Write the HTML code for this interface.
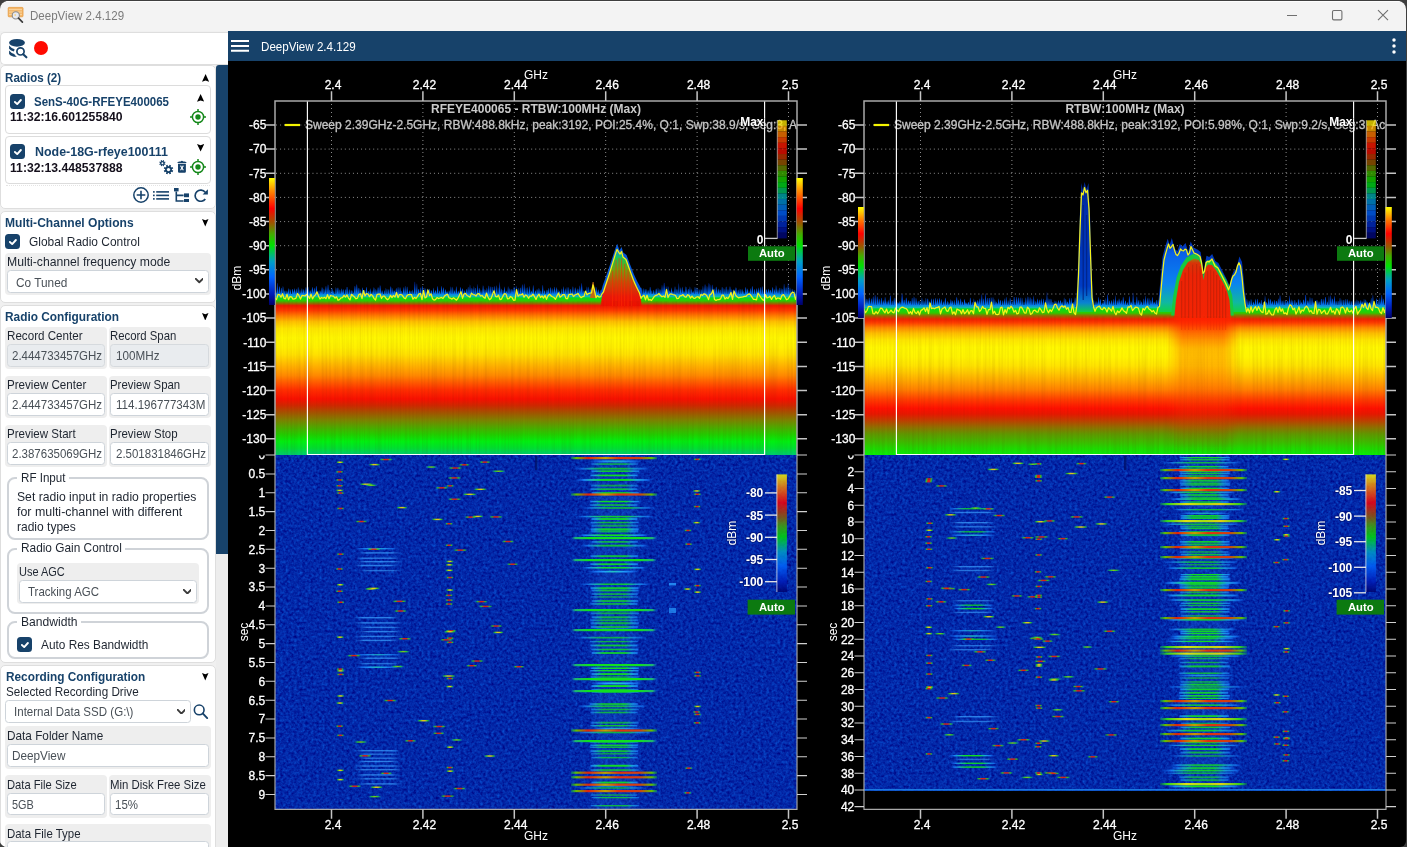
<!DOCTYPE html>
<html lang="en"><head><meta charset="utf-8"><title>DeepView 2.4.129</title>
<style>
html,body{margin:0;padding:0}
body{width:1407px;height:847px;overflow:hidden;background:#3e3e3e;font-family:"Liberation Sans",sans-serif;position:relative}
#win{position:absolute;left:0;top:1px;width:1406px;height:846px;background:#000;border-radius:8px 8px 6px 7px;overflow:hidden}
#shift{position:absolute;left:0;top:-1px;width:1407px;height:847px}
.ab{position:absolute;display:block}
.t{position:absolute;white-space:nowrap;line-height:1;display:inline-block;transform-origin:0 0}
.card,.sub,.grp,.inp,.fs,.cb{position:absolute;box-sizing:border-box}
.card{background:#fff;border:1px solid #dedede;border-radius:5px}
.sub{background:#fff;border:1px solid #dcdcdc;border-radius:4px}
.grp{background:#eeeeee;border-radius:4px}
.inp{background:#fff;border:1px solid #ced4da;border-radius:3.5px}
.inp.dis{background:#e9ecef;border-color:#d6dade}
.fs{border:2px solid #cfd3d8;border-radius:8px}
.cb{background:#17426a;border-radius:3.5px}
</style></head>
<body>
<div id="win"><div id="shift">
<svg class="ab" style="left:0;top:0;opacity:.999" width="1407" height="847" viewBox="0 0 1407 847"><defs><filter id="wfn" x="0" y="0" width="100%" height="100%" color-interpolation-filters="sRGB"><feTurbulence type="fractalNoise" baseFrequency="0.36 0.36" numOctaves="2" seed="7" result="n"/><feColorMatrix in="n" type="matrix" values="0.06 0 0 0 -0.02  0.34 0.15 0 0 -0.088  0.34 0.16 0 0 0.41  0 0 0 0 1"/></filter><filter id="streak" x="0" y="0" width="100%" height="100%" color-interpolation-filters="sRGB"><feTurbulence type="fractalNoise" baseFrequency="0.55 0.012" numOctaves="1" seed="11" result="n"/><feColorMatrix in="n" type="matrix" values="0 0 0 0 0.35  0 0 0 0 0.1  0 0 0 0 0  1.6 0 0 0 -0.62"/></filter><linearGradient id="bA" x1="0" y1="0" x2="1" y2="0"><stop offset="0" stop-color="#0a6cff" stop-opacity="0"/><stop offset="0.12" stop-color="#1a8cff" stop-opacity="0.9"/><stop offset="0.24" stop-color="#18c8a0" stop-opacity="1"/><stop offset="0.36" stop-color="#10e020" stop-opacity="1"/><stop offset="0.66" stop-color="#10e020" stop-opacity="1"/><stop offset="0.8" stop-color="#18a8e0" stop-opacity="1"/><stop offset="0.92" stop-color="#1a80ff" stop-opacity="0.8"/><stop offset="1" stop-color="#0a6cff" stop-opacity="0"/></linearGradient><linearGradient id="bK" x1="0" y1="0" x2="1" y2="0"><stop offset="0" stop-color="#0a6cff" stop-opacity="0"/><stop offset="0.03" stop-color="#1a84ff" stop-opacity="0.9"/><stop offset="0.12" stop-color="#18b0c8" stop-opacity="1"/><stop offset="0.26" stop-color="#10e020" stop-opacity="1"/><stop offset="0.72" stop-color="#10e020" stop-opacity="1"/><stop offset="0.86" stop-color="#18a8e0" stop-opacity="1"/><stop offset="0.97" stop-color="#1a84ff" stop-opacity="0.9"/><stop offset="1" stop-color="#0a6cff" stop-opacity="0"/></linearGradient><linearGradient id="bG" x1="0" y1="0" x2="1" y2="0"><stop offset="0" stop-color="#10a0c0" stop-opacity="0"/><stop offset="0.05" stop-color="#20c070" stop-opacity="0.9"/><stop offset="0.2" stop-color="#10e020" stop-opacity="1"/><stop offset="0.8" stop-color="#10e020" stop-opacity="1"/><stop offset="0.95" stop-color="#20c070" stop-opacity="0.9"/><stop offset="1" stop-color="#10a0c0" stop-opacity="0"/></linearGradient><linearGradient id="bB" x1="0" y1="0" x2="1" y2="0"><stop offset="0" stop-color="#0a6cff" stop-opacity="0"/><stop offset="0.15" stop-color="#1a80ff" stop-opacity="0.8"/><stop offset="0.3" stop-color="#20a0ff" stop-opacity="1"/><stop offset="0.5" stop-color="#20c8c0" stop-opacity="1"/><stop offset="0.7" stop-color="#20a0ff" stop-opacity="1"/><stop offset="0.88" stop-color="#1a80ff" stop-opacity="0.7"/><stop offset="1" stop-color="#0a6cff" stop-opacity="0"/></linearGradient><linearGradient id="bC" x1="0" y1="0" x2="1" y2="0"><stop offset="0" stop-color="#10c040" stop-opacity="0.4"/><stop offset="0.06" stop-color="#60c000" stop-opacity="1"/><stop offset="0.2" stop-color="#e02010" stop-opacity="1"/><stop offset="0.4" stop-color="#c0a000" stop-opacity="1"/><stop offset="0.55" stop-color="#e03010" stop-opacity="1"/><stop offset="0.8" stop-color="#d04010" stop-opacity="1"/><stop offset="0.94" stop-color="#60c000" stop-opacity="1"/><stop offset="1" stop-color="#10c040" stop-opacity="0.4"/></linearGradient><linearGradient id="bD" x1="0" y1="0" x2="1" y2="0"><stop offset="0" stop-color="#10c040" stop-opacity="0.3"/><stop offset="0.08" stop-color="#30d020" stop-opacity="1"/><stop offset="0.3" stop-color="#e0e010" stop-opacity="1"/><stop offset="0.5" stop-color="#a0e010" stop-opacity="1"/><stop offset="0.7" stop-color="#e0d010" stop-opacity="1"/><stop offset="0.92" stop-color="#30d020" stop-opacity="1"/><stop offset="1" stop-color="#10c040" stop-opacity="0.3"/></linearGradient><linearGradient id="bE" x1="0" y1="0" x2="1" y2="0"><stop offset="0" stop-color="#2a90ff" stop-opacity="0"/><stop offset="0.2" stop-color="#3aa0ff" stop-opacity="0.75"/><stop offset="0.8" stop-color="#3aa0ff" stop-opacity="0.75"/><stop offset="1" stop-color="#2a90ff" stop-opacity="0"/></linearGradient><linearGradient id="dR" x1="0" y1="0" x2="1" y2="0"><stop offset="0" stop-color="#10c060" stop-opacity="0.2"/><stop offset="0.18" stop-color="#30d020" stop-opacity="1"/><stop offset="0.38" stop-color="#e82010" stop-opacity="1"/><stop offset="0.62" stop-color="#e82010" stop-opacity="1"/><stop offset="0.82" stop-color="#30d020" stop-opacity="1"/><stop offset="1" stop-color="#10c060" stop-opacity="0.2"/></linearGradient><linearGradient id="dG" x1="0" y1="0" x2="1" y2="0"><stop offset="0" stop-color="#10a0c0" stop-opacity="0.2"/><stop offset="0.25" stop-color="#20d030" stop-opacity="1"/><stop offset="0.5" stop-color="#90d010" stop-opacity="1"/><stop offset="0.75" stop-color="#20d030" stop-opacity="1"/><stop offset="1" stop-color="#10a0c0" stop-opacity="0.2"/></linearGradient><linearGradient id="dY" x1="0" y1="0" x2="1" y2="0"><stop offset="0" stop-color="#10c060" stop-opacity="0.2"/><stop offset="0.18" stop-color="#30d020" stop-opacity="1"/><stop offset="0.4" stop-color="#f0d010" stop-opacity="1"/><stop offset="0.6" stop-color="#f0d010" stop-opacity="1"/><stop offset="0.82" stop-color="#30d020" stop-opacity="1"/><stop offset="1" stop-color="#10c060" stop-opacity="0.2"/></linearGradient></defs><g font-family="Liberation Sans, Arial, sans-serif">
<defs>
<linearGradient id="sgL" gradientUnits="userSpaceOnUse" x1="0" y1="294" x2="0" y2="455"><stop offset="0.0000" stop-color="#0a80e8"/><stop offset="0.0155" stop-color="#10b8b0"/><stop offset="0.0248" stop-color="#08dc18"/><stop offset="0.0435" stop-color="#30c800"/><stop offset="0.0578" stop-color="#8a7400"/><stop offset="0.0727" stop-color="#f01800"/><stop offset="0.1019" stop-color="#ff3800"/><stop offset="0.1366" stop-color="#ff8000"/><stop offset="0.1720" stop-color="#ffc000"/><stop offset="0.2137" stop-color="#ffe800"/><stop offset="0.2720" stop-color="#fff800"/><stop offset="0.3311" stop-color="#fff000"/><stop offset="0.3776" stop-color="#ffe000"/><stop offset="0.4248" stop-color="#ffc000"/><stop offset="0.4720" stop-color="#ffa000"/><stop offset="0.5068" stop-color="#ff8800"/><stop offset="0.5342" stop-color="#ff6a00"/><stop offset="0.5932" stop-color="#ff3000"/><stop offset="0.6522" stop-color="#f81000"/><stop offset="0.6925" stop-color="#d02800"/><stop offset="0.7329" stop-color="#a85000"/><stop offset="0.7807" stop-color="#808000"/><stop offset="0.8261" stop-color="#50a800"/><stop offset="0.8745" stop-color="#20d000"/><stop offset="0.9155" stop-color="#00f010"/><stop offset="0.9565" stop-color="#00e030"/><stop offset="1.0000" stop-color="#00cc70"/></linearGradient>
<linearGradient id="frL" gradientUnits="userSpaceOnUse" x1="0" y1="279.5" x2="0" y2="295.5"><stop offset="0" stop-color="#000c58"/><stop offset="0.35" stop-color="#0030b0"/><stop offset="0.68" stop-color="#0058e0"/><stop offset="1" stop-color="#0a80e8"/></linearGradient>
<linearGradient id="cbL" gradientUnits="userSpaceOnUse" x1="0" y1="178" x2="0" y2="305"><stop offset="0.000" stop-color="#ffff00" stop-opacity="1.0"/><stop offset="0.100" stop-color="#ff8c00" stop-opacity="1.0"/><stop offset="0.240" stop-color="#ff0000" stop-opacity="1.0"/><stop offset="0.360" stop-color="#965a00" stop-opacity="1.0"/><stop offset="0.440" stop-color="#46aa00" stop-opacity="1.0"/><stop offset="0.530" stop-color="#00e100" stop-opacity="1.0"/><stop offset="0.660" stop-color="#00a0c8" stop-opacity="1.0"/><stop offset="0.780" stop-color="#0064ff" stop-opacity="1.0"/><stop offset="0.910" stop-color="#001cb9" stop-opacity="1.0"/><stop offset="1.000" stop-color="#000069" stop-opacity="1.0"/></linearGradient>
<linearGradient id="ibL" gradientUnits="userSpaceOnUse" x1="0" y1="120.3" x2="0" y2="238.4"><stop offset="0.000" stop-color="#ffff00" stop-opacity="0.8"/><stop offset="0.100" stop-color="#ff8c00" stop-opacity="0.8"/><stop offset="0.240" stop-color="#ff0000" stop-opacity="0.8"/><stop offset="0.360" stop-color="#965a00" stop-opacity="0.8"/><stop offset="0.440" stop-color="#46aa00" stop-opacity="0.8"/><stop offset="0.530" stop-color="#00e100" stop-opacity="0.8"/><stop offset="0.660" stop-color="#00a0c8" stop-opacity="0.8"/><stop offset="0.780" stop-color="#0064ff" stop-opacity="0.8"/><stop offset="0.910" stop-color="#001cb9" stop-opacity="0.8"/><stop offset="1.000" stop-color="#000069" stop-opacity="0.8"/></linearGradient>
<linearGradient id="wbL" gradientUnits="userSpaceOnUse" x1="0" y1="474.4" x2="0" y2="592"><stop offset="0.000" stop-color="#ffff00" stop-opacity="0.82"/><stop offset="0.100" stop-color="#ff8c00" stop-opacity="0.82"/><stop offset="0.240" stop-color="#ff0000" stop-opacity="0.82"/><stop offset="0.360" stop-color="#965a00" stop-opacity="0.82"/><stop offset="0.440" stop-color="#46aa00" stop-opacity="0.82"/><stop offset="0.530" stop-color="#00e100" stop-opacity="0.82"/><stop offset="0.660" stop-color="#00a0c8" stop-opacity="0.82"/><stop offset="0.780" stop-color="#0064ff" stop-opacity="0.82"/><stop offset="0.910" stop-color="#001cb9" stop-opacity="0.82"/><stop offset="1.000" stop-color="#000069" stop-opacity="0.82"/></linearGradient>
<clipPath id="csL"><rect x="275" y="101" width="522" height="354"/></clipPath>
<clipPath id="cwL"><rect x="275" y="455" width="522" height="354.29999999999995"/></clipPath>
<clipPath id="czL"><rect x="235" y="455.6" width="40" height="30"/></clipPath>
</defs>
<rect x="275" y="455" width="522" height="354.3" fill="#0a34b0"/>
<rect x="275" y="455" width="522" height="354.3" filter="url(#wfn)"/>
<g clip-path="url(#cwL)">
<rect x="588" y="455" width="53" height="354.3" fill="url(#bE)" opacity=".16"/><rect x="581.2" y="457.0" width="74.5" height="1.9" fill="url(#bA)" opacity="0.98"/><rect x="590.3" y="460.4" width="50.5" height="2.0" fill="url(#bB)" opacity="0.82"/><rect x="590.6" y="463.4" width="48.0" height="1.3" fill="url(#bK)" opacity="0.84"/><rect x="573.4" y="467.7" width="76.4" height="1.9" fill="url(#bA)" opacity="0.75"/><rect x="590.6" y="470.4" width="49.4" height="1.5" fill="url(#bK)" opacity="0.95"/><rect x="589.6" y="474.6" width="48.8" height="1.7" fill="url(#bK)" opacity="0.99"/><rect x="575.0" y="478.9" width="77.4" height="2.0" fill="url(#bA)" opacity="0.99"/><rect x="590.3" y="484.7" width="48.3" height="1.8" fill="url(#bK)" opacity="0.62"/><rect x="589.6" y="488.3" width="48.5" height="1.7" fill="url(#bK)" opacity="0.74"/><rect x="591.0" y="492.1" width="48.6" height="2.0" fill="url(#bK)" opacity="0.90"/><rect x="589.5" y="500.8" width="50.4" height="1.5" fill="url(#bK)" opacity="0.98"/><rect x="589.4" y="504.2" width="48.8" height="1.7" fill="url(#bK)" opacity="0.75"/><rect x="581.5" y="507.3" width="73.6" height="1.3" fill="url(#bA)" opacity="0.96"/><rect x="575.2" y="515.8" width="79.1" height="1.5" fill="url(#bA)" opacity="0.86"/><rect x="590.7" y="517.9" width="47.4" height="2.1" fill="url(#bK)" opacity="0.88"/><rect x="589.8" y="521.8" width="49.8" height="1.5" fill="url(#bK)" opacity="0.77"/><rect x="590.9" y="524.7" width="48.1" height="2.0" fill="url(#bK)" opacity="0.64"/><rect x="589.7" y="528.3" width="49.8" height="2.1" fill="url(#bK)" opacity="0.90"/><rect x="590.4" y="530.4" width="48.5" height="2.0" fill="url(#bK)" opacity="0.68"/><rect x="576.9" y="534.4" width="71.8" height="1.7" fill="url(#bA)" opacity="0.99"/><rect x="590.2" y="537.3" width="49.7" height="1.4" fill="url(#bK)" opacity="0.77"/><rect x="590.8" y="541.1" width="47.7" height="1.6" fill="url(#bK)" opacity="0.81"/><rect x="579.7" y="544.7" width="69.3" height="1.9" fill="url(#bA)" opacity="0.81"/><rect x="589.6" y="555.2" width="49.0" height="1.9" fill="url(#bK)" opacity="0.80"/><rect x="589.9" y="559.5" width="48.6" height="1.3" fill="url(#bK)" opacity="0.84"/><rect x="589.4" y="563.3" width="49.3" height="1.8" fill="url(#bK)" opacity="0.93"/><rect x="580.4" y="567.0" width="66.9" height="1.6" fill="url(#bA)" opacity="0.95"/><rect x="587.8" y="570.8" width="51.2" height="1.7" fill="url(#bB)" opacity="0.98"/><rect x="579.8" y="583.5" width="70.4" height="1.4" fill="url(#bA)" opacity="0.92"/><rect x="589.7" y="587.2" width="49.7" height="1.9" fill="url(#bK)" opacity="0.86"/><rect x="590.6" y="589.6" width="48.8" height="1.8" fill="url(#bK)" opacity="0.79"/><rect x="590.9" y="593.3" width="47.4" height="1.5" fill="url(#bK)" opacity="0.80"/><rect x="590.1" y="596.3" width="48.7" height="1.3" fill="url(#bK)" opacity="0.69"/><rect x="591.0" y="600.0" width="47.8" height="2.0" fill="url(#bK)" opacity="0.71"/><rect x="590.3" y="602.9" width="47.8" height="2.0" fill="url(#bK)" opacity="0.66"/><rect x="590.2" y="609.2" width="49.5" height="2.0" fill="url(#bK)" opacity="0.98"/><rect x="589.9" y="612.4" width="50.0" height="1.8" fill="url(#bK)" opacity="0.67"/><rect x="591.0" y="616.3" width="47.2" height="2.0" fill="url(#bK)" opacity="0.75"/><rect x="589.2" y="619.4" width="49.5" height="1.8" fill="url(#bK)" opacity="0.67"/><rect x="590.2" y="622.2" width="49.7" height="2.1" fill="url(#bK)" opacity="0.73"/><rect x="590.0" y="625.9" width="48.8" height="2.1" fill="url(#bK)" opacity="0.72"/><rect x="588.1" y="628.5" width="50.6" height="1.5" fill="url(#bB)" opacity="0.75"/><rect x="574.7" y="636.8" width="71.9" height="1.7" fill="url(#bA)" opacity="0.70"/><rect x="589.0" y="640.9" width="49.6" height="1.4" fill="url(#bK)" opacity="0.72"/><rect x="589.5" y="644.6" width="48.7" height="1.8" fill="url(#bK)" opacity="0.87"/><rect x="590.4" y="648.7" width="48.7" height="1.6" fill="url(#bK)" opacity="0.82"/><rect x="590.9" y="652.1" width="47.6" height="1.8" fill="url(#bK)" opacity="0.90"/><rect x="589.8" y="664.0" width="49.6" height="1.6" fill="url(#bK)" opacity="0.92"/><rect x="590.2" y="667.4" width="49.5" height="1.6" fill="url(#bK)" opacity="0.97"/><rect x="589.3" y="670.0" width="50.1" height="1.4" fill="url(#bK)" opacity="0.94"/><rect x="590.7" y="673.1" width="48.2" height="2.0" fill="url(#bK)" opacity="0.92"/><rect x="589.8" y="676.4" width="49.8" height="1.4" fill="url(#bK)" opacity="0.75"/><rect x="589.7" y="678.8" width="48.4" height="1.9" fill="url(#bK)" opacity="0.93"/><rect x="590.7" y="682.4" width="52.3" height="1.9" fill="url(#bB)" opacity="1.00"/><rect x="590.7" y="685.1" width="47.9" height="1.9" fill="url(#bK)" opacity="0.98"/><rect x="590.7" y="689.1" width="48.6" height="1.6" fill="url(#bK)" opacity="0.85"/><rect x="590.9" y="691.4" width="48.3" height="1.4" fill="url(#bK)" opacity="0.76"/><rect x="589.1" y="703.2" width="49.6" height="1.7" fill="url(#bK)" opacity="0.85"/><rect x="577.1" y="705.4" width="69.8" height="1.8" fill="url(#bA)" opacity="0.75"/><rect x="590.5" y="708.6" width="49.0" height="1.7" fill="url(#bK)" opacity="0.72"/><rect x="589.5" y="711.7" width="48.8" height="1.6" fill="url(#bK)" opacity="0.71"/><rect x="590.5" y="721.8" width="49.2" height="1.8" fill="url(#bK)" opacity="0.67"/><rect x="589.5" y="725.1" width="48.6" height="1.3" fill="url(#bK)" opacity="0.92"/><rect x="590.3" y="727.8" width="53.5" height="1.5" fill="url(#bB)" opacity="0.84"/><rect x="575.5" y="731.5" width="78.1" height="1.8" fill="url(#bA)" opacity="0.74"/><rect x="589.4" y="740.8" width="49.5" height="1.8" fill="url(#bK)" opacity="0.94"/><rect x="589.5" y="744.5" width="49.3" height="1.8" fill="url(#bK)" opacity="0.85"/><rect x="589.2" y="746.7" width="49.7" height="1.3" fill="url(#bK)" opacity="0.70"/><rect x="589.8" y="750.2" width="49.1" height="2.0" fill="url(#bK)" opacity="0.80"/><rect x="590.3" y="753.1" width="48.5" height="1.4" fill="url(#bK)" opacity="0.68"/><rect x="590.7" y="756.9" width="47.9" height="1.5" fill="url(#bK)" opacity="0.72"/><rect x="589.7" y="764.8" width="49.3" height="1.9" fill="url(#bK)" opacity="0.98"/><rect x="589.7" y="769.3" width="49.8" height="1.5" fill="url(#bK)" opacity="0.87"/><rect x="590.8" y="772.4" width="48.0" height="1.5" fill="url(#bK)" opacity="0.63"/><rect x="590.7" y="781.6" width="47.8" height="1.9" fill="url(#bK)" opacity="0.90"/><rect x="585.1" y="785.0" width="52.9" height="1.6" fill="url(#bB)" opacity="0.82"/><rect x="577.5" y="787.3" width="68.6" height="1.3" fill="url(#bA)" opacity="0.82"/><rect x="589.2" y="790.4" width="49.8" height="1.4" fill="url(#bK)" opacity="0.66"/><rect x="590.2" y="794.4" width="47.9" height="1.3" fill="url(#bK)" opacity="0.71"/><rect x="590.9" y="797.0" width="49.0" height="1.3" fill="url(#bK)" opacity="0.74"/><rect x="589.9" y="805.0" width="49.9" height="1.4" fill="url(#bK)" opacity="0.74"/><rect x="571.0" y="457.0" width="86.0" height="2.2" fill="url(#bC)"/><rect x="571.0" y="493.4" width="86.0" height="2.2" fill="url(#bC)"/><rect x="571.0" y="729.4" width="86.0" height="2.2" fill="url(#bC)"/><rect x="571.0" y="771.6" width="86.0" height="2.2" fill="url(#bC)"/><rect x="571.0" y="776.2" width="86.0" height="2.2" fill="url(#bC)"/><rect x="571.0" y="783.6" width="86.0" height="2.2" fill="url(#bC)"/><rect x="571.0" y="790.0" width="86.0" height="2.2" fill="url(#bC)"/><rect x="571.0" y="537.0" width="86.0" height="2.2" fill="url(#bG)"/><rect x="571.0" y="559.0" width="86.0" height="2.2" fill="url(#bG)"/><rect x="571.0" y="609.0" width="86.0" height="2.2" fill="url(#bG)"/><rect x="571.0" y="629.0" width="86.0" height="2.2" fill="url(#bG)"/><rect x="571.0" y="664.0" width="86.0" height="2.2" fill="url(#bG)"/><rect x="571.0" y="678.0" width="86.0" height="2.2" fill="url(#bG)"/><rect x="571.0" y="690.0" width="86.0" height="2.2" fill="url(#bG)"/><rect x="571.0" y="740.0" width="86.0" height="2.2" fill="url(#bG)"/><rect x="354.3" y="548.0" width="43.8" height="1.4" fill="url(#bB)" opacity="0.84"/><rect x="357.6" y="552.2" width="43.5" height="1.4" fill="url(#bE)" opacity="0.93"/><rect x="354.8" y="557.5" width="45.8" height="1.4" fill="url(#bE)" opacity="0.89"/><rect x="355.9" y="561.0" width="46.8" height="1.4" fill="url(#bE)" opacity="0.95"/><rect x="353.8" y="564.9" width="44.7" height="1.4" fill="url(#bE)" opacity="0.92"/><rect x="358.8" y="569.9" width="43.2" height="1.4" fill="url(#bE)" opacity="0.77"/><rect x="353.3" y="617.0" width="45.9" height="1.4" fill="url(#bE)" opacity="0.97"/><rect x="353.4" y="622.2" width="49.2" height="1.4" fill="url(#bE)" opacity="0.94"/><rect x="358.4" y="626.7" width="43.5" height="1.4" fill="url(#bE)" opacity="0.89"/><rect x="357.9" y="630.9" width="44.0" height="1.4" fill="url(#bE)" opacity="0.93"/><rect x="354.6" y="635.7" width="48.3" height="1.4" fill="url(#bE)" opacity="0.89"/><rect x="354.8" y="639.7" width="44.0" height="1.4" fill="url(#bE)" opacity="0.92"/><rect x="353.4" y="654.0" width="49.2" height="1.4" fill="url(#bB)" opacity="0.76"/><rect x="358.8" y="657.5" width="44.1" height="1.4" fill="url(#bE)" opacity="0.96"/><rect x="356.7" y="662.9" width="42.7" height="1.4" fill="url(#bE)" opacity="0.78"/><rect x="355.1" y="666.5" width="43.8" height="1.4" fill="url(#bB)" opacity="0.96"/><rect x="353.6" y="750.0" width="47.6" height="1.4" fill="url(#bE)" opacity="0.91"/><rect x="357.6" y="753.5" width="43.0" height="1.4" fill="url(#bE)" opacity="0.78"/><rect x="358.5" y="757.5" width="42.3" height="1.4" fill="url(#bE)" opacity="0.79"/><rect x="357.0" y="760.8" width="42.0" height="1.4" fill="url(#bE)" opacity="0.99"/><rect x="353.6" y="765.3" width="49.3" height="1.4" fill="url(#bE)" opacity="0.92"/><rect x="353.0" y="769.0" width="50.4" height="1.4" fill="url(#bE)" opacity="0.87"/><rect x="355.4" y="774.2" width="43.9" height="1.4" fill="url(#bE)" opacity="0.96"/><rect x="356.1" y="778.1" width="46.5" height="1.4" fill="url(#bE)" opacity="0.84"/><rect x="357.9" y="783.2" width="44.1" height="1.4" fill="url(#bE)" opacity="0.90"/><rect x="336.8" y="507.7" width="7.4" height="1.5" fill="url(#dR)" opacity=".92"/><rect x="335.9" y="590.5" width="7.4" height="1.5" fill="url(#dR)" opacity=".92"/><rect x="336.7" y="492.3" width="7.4" height="1.5" fill="url(#dR)" opacity=".92"/><rect x="336.7" y="734.6" width="7.4" height="1.5" fill="url(#dR)" opacity=".92"/><rect x="336.8" y="695.2" width="7.4" height="1.5" fill="url(#dY)" opacity=".92"/><rect x="336.0" y="489.6" width="7.4" height="1.5" fill="url(#dY)" opacity=".92"/><rect x="336.4" y="461.5" width="7.4" height="1.5" fill="url(#dY)" opacity=".92"/><rect x="336.8" y="673.7" width="7.4" height="1.5" fill="url(#dR)" opacity=".92"/><rect x="335.8" y="568.2" width="7.4" height="1.5" fill="url(#dR)" opacity=".92"/><rect x="336.4" y="636.4" width="7.4" height="1.5" fill="url(#dY)" opacity=".92"/><rect x="336.3" y="702.3" width="7.4" height="1.5" fill="url(#dY)" opacity=".92"/><rect x="336.6" y="778.9" width="7.4" height="1.5" fill="url(#dY)" opacity=".92"/><rect x="336.0" y="479.2" width="7.4" height="1.5" fill="url(#dR)" opacity=".92"/><rect x="336.5" y="584.0" width="7.4" height="1.5" fill="url(#dY)" opacity=".92"/><rect x="336.0" y="725.4" width="7.4" height="1.5" fill="url(#dR)" opacity=".92"/><rect x="335.9" y="485.0" width="7.4" height="1.5" fill="url(#dR)" opacity=".92"/><rect x="336.8" y="670.1" width="7.4" height="1.5" fill="url(#dY)" opacity=".92"/><rect x="337.0" y="601.5" width="7.4" height="1.5" fill="url(#dR)" opacity=".92"/><rect x="336.7" y="553.4" width="7.4" height="1.5" fill="url(#dR)" opacity=".92"/><rect x="335.9" y="471.1" width="7.4" height="1.5" fill="url(#dR)" opacity=".92"/><rect x="336.6" y="769.6" width="7.4" height="1.5" fill="url(#dY)" opacity=".92"/><rect x="336.5" y="668.4" width="7.4" height="1.5" fill="url(#dR)" opacity=".92"/><rect x="446.4" y="637.4" width="7.4" height="1.5" fill="url(#dR)" opacity=".92"/><rect x="446.2" y="576.8" width="7.4" height="1.5" fill="url(#dR)" opacity=".92"/><rect x="445.3" y="594.6" width="7.4" height="1.5" fill="url(#dR)" opacity=".92"/><rect x="446.2" y="589.3" width="7.4" height="1.5" fill="url(#dY)" opacity=".92"/><rect x="446.4" y="770.4" width="7.4" height="1.5" fill="url(#dY)" opacity=".92"/><rect x="445.7" y="569.6" width="7.4" height="1.5" fill="url(#dY)" opacity=".92"/><rect x="446.1" y="766.8" width="7.4" height="1.5" fill="url(#dR)" opacity=".92"/><rect x="445.4" y="544.5" width="7.4" height="1.5" fill="url(#dR)" opacity=".92"/><rect x="445.6" y="564.1" width="7.4" height="1.5" fill="url(#dY)" opacity=".92"/><rect x="446.4" y="485.1" width="7.4" height="1.5" fill="url(#dR)" opacity=".92"/><rect x="446.2" y="677.8" width="7.4" height="1.5" fill="url(#dR)" opacity=".92"/><rect x="446.0" y="685.8" width="7.4" height="1.5" fill="url(#dY)" opacity=".92"/><rect x="446.4" y="746.4" width="7.4" height="1.5" fill="url(#dY)" opacity=".92"/><rect x="445.6" y="599.4" width="7.4" height="1.5" fill="url(#dR)" opacity=".92"/><rect x="446.4" y="641.6" width="7.4" height="1.5" fill="url(#dR)" opacity=".92"/><rect x="445.4" y="603.3" width="7.4" height="1.5" fill="url(#dR)" opacity=".92"/><rect x="445.3" y="523.0" width="7.4" height="1.5" fill="url(#dR)" opacity=".92"/><rect x="446.0" y="560.7" width="7.4" height="1.5" fill="url(#dY)" opacity=".92"/><rect x="693.0" y="521.9" width="7.4" height="1.5" fill="url(#dY)" opacity=".92"/><rect x="693.7" y="493.5" width="7.4" height="1.5" fill="url(#dR)" opacity=".92"/><rect x="692.9" y="711.2" width="7.4" height="1.5" fill="url(#dR)" opacity=".92"/><rect x="693.4" y="505.8" width="7.4" height="1.5" fill="url(#dR)" opacity=".92"/><rect x="693.8" y="568.6" width="7.4" height="1.5" fill="url(#dY)" opacity=".92"/><rect x="693.9" y="591.4" width="7.4" height="1.5" fill="url(#dY)" opacity=".92"/><rect x="693.8" y="671.7" width="7.4" height="1.5" fill="url(#dR)" opacity=".92"/><rect x="693.6" y="458.6" width="7.4" height="1.5" fill="url(#dR)" opacity=".92"/><rect x="693.0" y="490.2" width="7.4" height="1.5" fill="url(#dY)" opacity=".92"/><rect x="693.5" y="722.1" width="7.4" height="1.5" fill="url(#dR)" opacity=".92"/><rect x="693.8" y="713.7" width="7.4" height="1.5" fill="url(#dR)" opacity=".92"/><rect x="693.9" y="705.7" width="7.4" height="1.5" fill="url(#dY)" opacity=".92"/><rect x="694.0" y="675.1" width="7.4" height="1.5" fill="url(#dR)" opacity=".92"/><rect x="693.8" y="584.9" width="7.4" height="1.5" fill="url(#dR)" opacity=".92"/><rect x="684.2" y="529.7" width="7.4" height="1.5" fill="url(#dR)" opacity=".92"/><rect x="685.0" y="767.4" width="7.4" height="1.5" fill="url(#dR)" opacity=".92"/><rect x="684.9" y="543.4" width="7.4" height="1.5" fill="url(#dR)" opacity=".92"/><rect x="683.9" y="588.3" width="7.4" height="1.5" fill="url(#dY)" opacity=".92"/><rect x="684.0" y="792.1" width="7.4" height="1.5" fill="url(#dR)" opacity=".92"/><rect x="445.8" y="630.1" width="10.5" height="1.45" fill="url(#dR)" opacity=".92"/><rect x="451.3" y="739.2" width="10.9" height="1.45" fill="url(#dG)" opacity=".92"/><rect x="380.3" y="772.6" width="11.7" height="1.45" fill="url(#dR)" opacity=".92"/><rect x="348.5" y="785.5" width="12.5" height="1.45" fill="url(#dR)" opacity=".92"/><rect x="359.9" y="483.5" width="13.0" height="1.45" fill="url(#dY)" opacity=".92"/><rect x="358.5" y="755.1" width="13.0" height="1.45" fill="url(#dR)" opacity=".92"/><rect x="396.6" y="506.9" width="10.7" height="1.45" fill="url(#dY)" opacity=".92"/><rect x="441.0" y="795.4" width="13.4" height="1.45" fill="url(#dR)" opacity=".92"/><rect x="391.2" y="665.8" width="12.8" height="1.45" fill="url(#dG)" opacity=".92"/><rect x="492.9" y="631.7" width="10.6" height="1.45" fill="url(#dY)" opacity=".92"/><rect x="426.0" y="466.3" width="10.5" height="1.45" fill="url(#dG)" opacity=".92"/><rect x="354.2" y="741.3" width="13.0" height="1.45" fill="url(#dG)" opacity=".92"/><rect x="365.3" y="484.6" width="11.6" height="1.45" fill="url(#dG)" opacity=".92"/><rect x="379.8" y="458.8" width="12.6" height="1.45" fill="url(#dR)" opacity=".92"/><rect x="491.9" y="470.5" width="13.4" height="1.45" fill="url(#dG)" opacity=".92"/><rect x="513.6" y="666.0" width="10.5" height="1.45" fill="url(#dR)" opacity=".92"/><rect x="404.9" y="740.1" width="11.0" height="1.45" fill="url(#dR)" opacity=".92"/><rect x="398.6" y="638.0" width="12.4" height="1.45" fill="url(#dR)" opacity=".92"/><rect x="365.3" y="588.2" width="10.9" height="1.45" fill="url(#dY)" opacity=".92"/><rect x="459.0" y="464.1" width="10.5" height="1.45" fill="url(#dR)" opacity=".92"/><rect x="432.8" y="725.8" width="12.9" height="1.45" fill="url(#dR)" opacity=".92"/><rect x="502.1" y="540.8" width="11.8" height="1.45" fill="url(#dR)" opacity=".92"/><rect x="463.0" y="493.6" width="13.3" height="1.45" fill="url(#dY)" opacity=".92"/><rect x="453.3" y="787.8" width="12.4" height="1.45" fill="url(#dR)" opacity=".92"/><rect x="447.9" y="477.2" width="13.0" height="1.45" fill="url(#dR)" opacity=".92"/><rect x="367.5" y="587.6" width="12.2" height="1.45" fill="url(#dY)" opacity=".92"/><rect x="347.3" y="654.9" width="13.4" height="1.45" fill="url(#dR)" opacity=".92"/><rect x="453.8" y="549.4" width="13.0" height="1.45" fill="url(#dR)" opacity=".92"/><rect x="442.2" y="675.3" width="13.1" height="1.45" fill="url(#dY)" opacity=".92"/><rect x="394.4" y="610.3" width="12.2" height="1.45" fill="url(#dR)" opacity=".92"/><rect x="479.6" y="461.4" width="10.6" height="1.45" fill="url(#dR)" opacity=".92"/><rect x="475.4" y="600.9" width="12.1" height="1.45" fill="url(#dR)" opacity=".92"/><rect x="383.8" y="699.8" width="12.6" height="1.45" fill="url(#dR)" opacity=".92"/><rect x="507.1" y="563.5" width="10.9" height="1.45" fill="url(#dR)" opacity=".92"/><rect x="417.4" y="720.0" width="12.5" height="1.45" fill="url(#dY)" opacity=".92"/><rect x="444.2" y="631.0" width="11.1" height="1.45" fill="url(#dY)" opacity=".92"/><rect x="474.0" y="488.6" width="12.5" height="1.45" fill="url(#dY)" opacity=".92"/><rect x="431.8" y="518.7" width="11.5" height="1.45" fill="url(#dY)" opacity=".92"/><rect x="368.9" y="463.9" width="11.2" height="1.45" fill="url(#dY)" opacity=".92"/><rect x="465.1" y="516.4" width="11.1" height="1.45" fill="url(#dR)" opacity=".92"/><rect x="478.9" y="605.7" width="13.4" height="1.45" fill="url(#dR)" opacity=".92"/><rect x="448.2" y="498.5" width="13.0" height="1.45" fill="url(#dR)" opacity=".92"/><rect x="470.7" y="660.3" width="12.7" height="1.45" fill="url(#dR)" opacity=".92"/><rect x="367.5" y="548.5" width="12.7" height="1.45" fill="url(#dR)" opacity=".92"/><rect x="392.8" y="600.6" width="13.3" height="1.45" fill="url(#dR)" opacity=".92"/><rect x="433.0" y="732.6" width="11.2" height="1.45" fill="url(#dR)" opacity=".92"/><rect x="448.6" y="467.3" width="13.3" height="1.45" fill="url(#dR)" opacity=".92"/><rect x="370.6" y="786.5" width="12.1" height="1.45" fill="url(#dY)" opacity=".92"/><rect x="435.7" y="487.1" width="12.2" height="1.45" fill="url(#dR)" opacity=".92"/><rect x="368.5" y="795.9" width="12.5" height="1.45" fill="url(#dG)" opacity=".92"/><rect x="355.6" y="520.8" width="11.4" height="1.45" fill="url(#dR)" opacity=".92"/><rect x="484.2" y="755.3" width="11.3" height="1.45" fill="url(#dY)" opacity=".92"/><rect x="472.3" y="515.7" width="10.8" height="1.45" fill="url(#dY)" opacity=".92"/><rect x="466.3" y="665.0" width="10.9" height="1.45" fill="url(#dR)" opacity=".92"/><rect x="489.6" y="516.2" width="12.9" height="1.45" fill="url(#dR)" opacity=".92"/><rect x="490.2" y="625.3" width="12.1" height="1.45" fill="url(#dR)" opacity=".92"/><rect x="396.8" y="650.9" width="13.1" height="1.45" fill="url(#dG)" opacity=".92"/><rect x="440.4" y="639.1" width="12.1" height="1.45" fill="url(#dR)" opacity=".92"/><rect x="669" y="583" width="7" height="2.4" fill="#2a9cff" opacity=".8"/><rect x="669" y="608" width="7" height="5" fill="#2a9cff" opacity=".7"/><rect x="535" y="456" width="2.4" height="14" fill="#00106a" opacity=".8"/>
</g>
<g clip-path="url(#csL)">
<path d="M276 125.0 H797" stroke="#fff" stroke-opacity=".55" stroke-width="1" stroke-dasharray="1 3.05"/>
<path d="M276 149.1 H797" stroke="#fff" stroke-opacity=".55" stroke-width="1" stroke-dasharray="1 3.05"/>
<path d="M276 173.3 H797" stroke="#fff" stroke-opacity=".55" stroke-width="1" stroke-dasharray="1 3.05"/>
<path d="M276 197.4 H797" stroke="#fff" stroke-opacity=".55" stroke-width="1" stroke-dasharray="1 3.05"/>
<path d="M276 221.6 H797" stroke="#fff" stroke-opacity=".55" stroke-width="1" stroke-dasharray="1 3.05"/>
<path d="M276 245.7 H797" stroke="#fff" stroke-opacity=".55" stroke-width="1" stroke-dasharray="1 3.05"/>
<path d="M276 269.8 H797" stroke="#fff" stroke-opacity=".55" stroke-width="1" stroke-dasharray="1 3.05"/>
<path d="M276 294.0 H797" stroke="#fff" stroke-opacity=".55" stroke-width="1" stroke-dasharray="1 3.05"/>
<path d="M276 318.1 H797" stroke="#fff" stroke-opacity=".55" stroke-width="1" stroke-dasharray="1 3.05"/>
<path d="M276 342.3 H797" stroke="#fff" stroke-opacity=".55" stroke-width="1" stroke-dasharray="1 3.05"/>
<path d="M276 366.4 H797" stroke="#fff" stroke-opacity=".55" stroke-width="1" stroke-dasharray="1 3.05"/>
<path d="M276 390.5 H797" stroke="#fff" stroke-opacity=".55" stroke-width="1" stroke-dasharray="1 3.05"/>
<path d="M276 414.7 H797" stroke="#fff" stroke-opacity=".55" stroke-width="1" stroke-dasharray="1 3.05"/>
<path d="M276 438.8 H797" stroke="#fff" stroke-opacity=".55" stroke-width="1" stroke-dasharray="1 3.05"/>
<path d="M331.5 104 V455" stroke="#fff" stroke-opacity=".55" stroke-width="1" stroke-dasharray="1 3"/>
<path d="M422.9 104 V455" stroke="#fff" stroke-opacity=".55" stroke-width="1" stroke-dasharray="1 3"/>
<path d="M514.3 104 V455" stroke="#fff" stroke-opacity=".55" stroke-width="1" stroke-dasharray="1 3"/>
<path d="M605.7 104 V455" stroke="#fff" stroke-opacity=".55" stroke-width="1" stroke-dasharray="1 3"/>
<path d="M697.1 104 V455" stroke="#fff" stroke-opacity=".55" stroke-width="1" stroke-dasharray="1 3"/>
<path d="M788.5 104 V455" stroke="#fff" stroke-opacity=".55" stroke-width="1" stroke-dasharray="1 3"/>
<path d="M275.0 295.0 L275.0 293.7 L275.6 289.5 L276.0 291.0 L276.5 294.7 L277.1 282.7 L277.7 283.6 L278.4 295.0 L279.2 286.4 L279.8 286.4 L280.6 294.6 L281.2 287.7 L281.7 288.1 L282.2 295.5 L282.8 286.1 L283.3 287.1 L283.9 293.4 L284.7 290.5 L285.3 290.8 L285.9 294.9 L286.7 290.7 L287.1 290.8 L287.8 293.6 L288.6 288.2 L289.2 289.0 L289.7 295.4 L290.3 288.9 L290.7 290.2 L291.5 295.8 L292.3 288.7 L292.9 289.6 L293.6 293.3 L294.5 287.9 L294.8 288.9 L295.5 293.9 L296.1 288.5 L296.6 289.8 L297.2 295.4 L298.0 286.8 L298.5 287.9 L299.0 295.6 L299.9 289.1 L300.2 290.5 L300.9 293.9 L301.7 288.4 L302.1 288.5 L302.7 293.5 L303.6 288.9 L304.1 290.1 L304.9 294.3 L305.7 287.3 L306.3 287.4 L307.1 294.1 L307.9 286.2 L308.4 287.4 L309.1 293.9 L310.0 290.1 L310.6 291.1 L311.3 293.8 L312.2 286.9 L312.7 287.4 L313.5 293.3 L314.2 287.4 L314.7 288.7 L315.3 294.8 L316.0 286.2 L316.7 286.2 L317.4 293.7 L318.1 290.5 L318.4 291.4 L319.1 295.5 L319.7 290.6 L320.3 290.7 L321.1 293.3 L321.9 287.1 L322.5 288.1 L323.1 295.4 L323.7 288.6 L324.2 289.5 L324.9 293.4 L325.7 286.2 L326.2 286.3 L326.9 294.7 L327.8 284.4 L328.4 285.0 L329.0 294.5 L329.5 289.4 L330.2 290.4 L331.1 295.1 L331.7 288.0 L332.4 288.8 L333.1 293.4 L333.8 290.5 L334.1 291.6 L335.0 295.9 L335.8 287.1 L336.3 288.5 L336.8 294.3 L337.6 287.7 L338.2 287.8 L339.0 294.7 L339.6 289.5 L340.1 290.0 L340.9 294.3 L341.5 288.4 L342.0 289.1 L342.5 293.5 L343.1 289.2 L343.5 289.6 L344.4 295.7 L345.1 289.3 L345.6 289.7 L346.1 294.9 L346.7 287.0 L347.4 287.0 L348.2 295.5 L349.0 289.4 L349.5 289.6 L350.2 294.8 L351.0 290.0 L351.6 291.0 L352.1 295.7 L352.7 290.4 L353.2 291.7 L353.7 295.4 L354.6 286.1 L355.3 286.6 L355.9 293.7 L356.4 284.4 L357.0 284.5 L357.9 293.3 L358.6 287.8 L359.3 288.4 L359.9 295.1 L360.6 288.9 L361.0 290.4 L361.8 295.3 L362.3 287.2 L362.9 288.3 L363.8 295.7 L364.5 289.9 L365.1 289.9 L365.6 295.0 L366.2 287.3 L366.8 287.3 L367.5 294.4 L368.2 291.0 L368.6 291.3 L369.4 293.9 L370.2 288.1 L370.5 289.4 L371.3 294.9 L372.0 290.6 L372.4 291.8 L373.0 294.2 L373.7 287.2 L374.3 288.1 L374.9 295.2 L375.7 288.8 L376.2 290.0 L377.0 294.3 L377.8 287.6 L378.5 287.6 L379.0 294.9 L379.9 285.0 L380.5 285.9 L381.2 294.1 L382.0 290.0 L382.5 291.3 L383.4 295.4 L384.2 290.1 L384.6 291.3 L385.2 295.7 L385.8 287.8 L386.3 289.2 L387.1 295.8 L387.8 289.1 L388.5 289.7 L389.3 295.8 L390.2 286.1 L390.7 287.0 L391.3 294.5 L391.8 287.1 L392.3 288.4 L393.1 293.5 L393.9 290.2 L394.6 291.0 L395.4 293.1 L396.1 287.7 L396.6 289.0 L397.1 294.5 L397.9 286.9 L398.3 287.3 L399.1 294.7 L399.8 287.4 L400.3 287.4 L401.1 294.0 L401.6 290.9 L402.0 291.0 L402.8 295.4 L403.3 286.8 L403.7 288.0 L404.3 293.7 L405.0 286.1 L405.4 286.3 L406.1 295.0 L406.9 286.8 L407.4 286.8 L408.3 295.2 L409.2 290.0 L409.6 291.0 L410.3 293.2 L410.8 290.7 L411.3 291.0 L412.0 295.3 L412.6 289.4 L413.0 290.8 L413.8 295.2 L414.5 281.8 L415.1 281.9 L415.8 295.6 L416.7 283.5 L417.1 284.0 L417.7 294.9 L418.2 288.8 L418.8 289.6 L419.5 294.3 L420.1 287.3 L420.6 288.2 L421.3 295.2 L422.0 286.2 L422.7 286.2 L423.3 295.7 L424.1 287.3 L424.4 288.8 L424.9 294.5 L425.6 288.1 L426.0 289.1 L426.6 293.9 L427.2 288.4 L427.7 289.0 L428.6 293.3 L429.5 288.7 L429.9 289.0 L430.6 294.2 L431.4 289.7 L432.0 291.2 L432.6 295.8 L433.2 287.6 L433.6 288.4 L434.4 293.9 L435.2 290.2 L435.7 290.6 L436.6 294.3 L437.4 286.2 L437.9 286.4 L438.6 295.8 L439.3 290.4 L439.8 291.0 L440.6 294.5 L441.3 286.1 L441.8 286.6 L442.5 293.6 L443.3 287.3 L443.8 287.9 L444.5 295.3 L445.1 288.9 L445.7 290.3 L446.3 293.3 L447.0 290.8 L447.5 292.1 L448.3 294.9 L448.9 290.4 L449.4 291.0 L450.1 293.5 L450.7 286.5 L451.1 286.9 L452.0 295.0 L452.5 286.5 L453.0 288.0 L453.6 293.9 L454.4 290.3 L454.7 290.6 L455.4 294.1 L456.2 286.1 L456.6 287.3 L457.3 294.5 L458.1 290.5 L458.6 291.5 L459.4 294.3 L460.3 286.8 L460.9 288.1 L461.4 293.7 L462.2 288.4 L462.9 288.8 L463.7 295.5 L464.4 290.0 L464.9 291.5 L465.6 295.1 L466.1 288.7 L466.5 289.3 L467.2 293.6 L468.0 287.1 L468.4 287.3 L469.0 295.6 L469.9 284.3 L470.2 285.2 L470.8 293.5 L471.7 287.7 L472.3 288.7 L472.9 294.5 L473.8 286.3 L474.1 286.7 L474.9 295.8 L475.4 288.0 L475.9 288.1 L476.7 295.7 L477.5 283.8 L477.8 284.7 L478.6 294.5 L479.3 288.1 L479.7 288.3 L480.3 293.5 L480.9 289.2 L481.2 290.5 L482.0 294.8 L482.9 285.3 L483.4 286.0 L484.1 293.5 L484.8 288.9 L485.4 290.3 L486.0 293.8 L486.8 287.4 L487.1 288.4 L487.9 293.3 L488.5 285.5 L488.9 285.9 L489.4 294.5 L489.9 285.9 L490.6 287.3 L491.3 294.2 L491.8 286.8 L492.5 286.9 L493.3 295.9 L494.0 286.1 L494.6 286.7 L495.4 296.0 L496.1 285.0 L496.5 286.2 L497.3 294.5 L497.9 287.1 L498.3 288.4 L498.8 295.8 L499.4 281.4 L499.8 282.9 L500.6 293.5 L501.3 288.6 L501.7 289.3 L502.2 295.9 L502.8 289.8 L503.2 290.3 L503.7 294.2 L504.3 286.2 L504.7 287.6 L505.6 294.1 L506.1 290.4 L506.7 291.8 L507.4 293.2 L508.0 285.9 L508.4 287.2 L509.0 295.2 L509.6 288.3 L510.1 289.1 L510.9 293.8 L511.6 289.1 L512.2 289.2 L513.1 293.0 L513.9 286.3 L514.6 287.6 L515.5 294.9 L516.0 285.4 L516.5 286.7 L517.4 293.7 L518.0 287.7 L518.4 287.9 L519.2 295.4 L520.0 287.7 L520.6 287.8 L521.3 293.9 L522.1 284.3 L522.6 284.8 L523.3 293.6 L524.1 283.3 L524.5 284.5 L525.1 294.2 L525.9 287.4 L526.3 288.0 L526.9 294.9 L527.6 286.8 L528.0 288.3 L528.6 295.2 L529.5 286.2 L529.8 286.3 L530.5 294.3 L531.2 290.6 L531.6 291.5 L532.4 293.0 L533.1 284.7 L533.5 286.1 L534.4 294.9 L535.2 290.4 L535.7 290.8 L536.3 294.8 L536.8 289.2 L537.4 289.4 L538.0 293.9 L538.8 287.7 L539.3 289.0 L540.1 295.1 L540.6 290.4 L541.2 291.2 L541.7 295.5 L542.5 285.2 L543.0 285.2 L543.6 295.0 L544.3 290.5 L545.0 290.7 L545.8 295.5 L546.7 289.7 L547.3 290.0 L547.9 293.1 L548.6 287.8 L549.1 289.1 L549.7 296.0 L550.3 287.1 L551.0 288.3 L551.9 294.2 L552.7 287.9 L553.0 288.8 L553.6 293.8 L554.3 286.8 L554.7 287.0 L555.4 293.5 L556.3 287.0 L556.7 288.1 L557.3 293.8 L557.9 288.7 L558.2 289.9 L558.8 293.4 L559.4 290.6 L560.0 291.9 L560.8 295.8 L561.7 288.6 L562.1 289.0 L562.6 295.9 L563.4 286.0 L563.8 287.4 L564.6 294.3 L565.2 288.1 L565.5 288.9 L566.2 295.0 L566.9 286.9 L567.3 287.4 L567.9 295.4 L568.6 286.7 L569.0 288.1 L569.7 295.6 L570.3 288.8 L570.9 289.4 L571.6 295.4 L572.1 286.1 L572.4 287.1 L573.2 296.0 L573.8 286.6 L574.1 288.1 L574.8 294.8 L575.4 287.1 L575.9 288.5 L576.8 294.0 L577.6 288.4 L578.2 289.1 L578.9 293.5 L579.6 285.3 L580.0 286.5 L580.6 293.1 L581.4 283.0 L581.9 283.5 L582.8 293.3 L583.3 290.1 L583.6 291.0 L584.1 294.7 L584.8 290.8 L585.3 291.7 L585.9 295.2 L586.8 286.5 L587.1 287.0 L588.0 294.3 L588.5 286.4 L588.9 287.6 L589.7 293.2 L590.6 288.2 L590.9 289.5 L591.5 295.0 L592.2 284.0 L592.8 285.1 L593.4 294.3 L594.2 287.8 L594.7 288.8 L595.3 293.6 L595.8 286.4 L596.4 287.6 L597.3 293.3 L598.0 289.5 L598.5 289.8 L599.3 295.1 L600.1 290.1 L600.5 290.5 L601.1 295.9 L601.6 289.5 L601.9 289.8 L602.5 295.5 L603.3 286.5 L603.7 287.0 L604.2 295.6 L604.8 288.7 L605.3 289.7 L606.0 294.1 L606.9 288.9 L607.4 290.4 L608.1 293.7 L608.6 289.8 L609.2 290.8 L609.7 295.4 L610.4 280.7 L611.0 281.4 L611.6 296.0 L612.2 288.7 L612.8 289.2 L613.5 293.7 L614.2 290.5 L614.6 291.0 L615.2 293.1 L616.0 290.3 L616.4 290.3 L617.0 293.7 L617.5 288.5 L617.8 289.5 L618.5 296.0 L619.2 289.7 L619.7 290.6 L620.4 293.5 L621.2 290.9 L621.9 291.4 L622.6 293.6 L623.5 289.2 L623.8 289.9 L624.4 295.2 L625.1 286.7 L625.6 287.3 L626.2 295.1 L627.0 289.7 L627.6 290.9 L628.5 294.1 L629.1 287.0 L629.7 287.8 L630.4 293.2 L631.3 287.8 L631.9 288.9 L632.7 295.1 L633.5 288.5 L634.2 289.5 L634.9 294.1 L635.8 286.0 L636.3 286.2 L637.0 294.7 L637.8 284.3 L638.2 285.4 L638.9 294.9 L639.6 289.0 L640.3 289.8 L640.8 293.9 L641.6 287.6 L642.0 288.2 L642.8 295.4 L643.7 288.1 L644.1 289.1 L644.8 293.5 L645.7 289.1 L646.3 289.3 L647.0 294.4 L647.8 290.2 L648.4 290.3 L649.2 294.5 L649.9 287.0 L650.5 287.2 L651.1 294.8 L651.6 290.2 L652.1 291.2 L652.7 295.3 L653.6 289.7 L654.1 291.1 L655.0 295.4 L655.9 288.7 L656.5 288.8 L657.3 295.8 L657.9 287.6 L658.2 288.3 L659.0 295.1 L659.8 288.9 L660.4 289.7 L661.1 294.4 L661.9 284.7 L662.2 285.6 L663.0 293.3 L663.9 282.8 L664.5 283.0 L665.2 293.2 L666.0 286.0 L666.4 287.1 L667.1 295.1 L667.9 286.1 L668.4 287.1 L668.9 293.2 L669.5 290.3 L669.9 290.7 L670.7 293.3 L671.3 287.2 L671.6 288.2 L672.5 293.3 L673.0 290.8 L673.4 292.1 L674.0 294.9 L674.8 286.6 L675.3 286.8 L675.9 295.7 L676.6 289.2 L677.3 289.4 L678.1 295.7 L678.6 282.8 L679.0 284.3 L679.6 294.7 L680.4 287.1 L680.7 288.2 L681.3 294.3 L682.1 286.6 L682.6 288.0 L683.1 293.4 L683.9 290.2 L684.3 291.5 L685.1 293.9 L685.6 286.6 L686.3 287.0 L687.1 294.4 L688.0 289.1 L688.6 289.3 L689.1 294.4 L689.8 286.5 L690.1 286.8 L690.9 295.9 L691.4 288.2 L691.7 289.6 L692.6 293.2 L693.3 290.6 L693.6 292.1 L694.3 294.3 L694.8 286.8 L695.3 287.5 L696.1 293.9 L696.7 287.6 L697.3 288.0 L698.2 294.9 L698.9 288.7 L699.5 290.2 L700.2 295.3 L700.9 288.9 L701.5 290.1 L702.1 294.9 L702.8 286.0 L703.1 286.3 L703.9 295.1 L704.8 284.4 L705.4 284.5 L706.0 294.8 L706.8 286.0 L707.3 286.7 L707.9 295.3 L708.7 282.8 L709.4 283.9 L710.0 293.5 L710.8 284.4 L711.1 285.4 L711.7 294.3 L712.5 284.7 L712.9 284.7 L713.4 293.0 L714.0 288.5 L714.5 289.0 L715.1 294.1 L716.0 286.4 L716.7 287.4 L717.2 293.9 L718.1 288.5 L718.6 289.6 L719.2 293.4 L719.9 289.5 L720.5 290.1 L721.2 295.3 L721.9 286.8 L722.5 287.5 L723.0 295.9 L723.8 287.9 L724.3 289.3 L725.1 294.6 L725.9 286.7 L726.5 286.8 L727.0 295.9 L727.7 289.5 L728.3 289.6 L729.1 295.3 L729.7 286.6 L730.3 286.8 L731.0 294.3 L731.6 289.3 L732.0 289.4 L732.8 294.0 L733.5 289.5 L734.1 289.5 L734.9 293.2 L735.7 287.2 L736.4 288.1 L737.1 294.6 L738.0 289.4 L738.4 290.0 L739.2 294.8 L739.9 288.4 L740.3 289.2 L741.1 294.8 L742.0 288.5 L742.4 289.8 L743.2 293.9 L743.7 290.7 L744.1 291.9 L744.9 294.8 L745.4 286.7 L746.0 288.0 L746.8 293.3 L747.4 288.3 L747.9 289.4 L748.4 295.7 L748.9 290.1 L749.2 291.2 L749.8 293.6 L750.5 287.9 L750.9 289.0 L751.5 294.1 L752.0 286.1 L752.7 286.8 L753.6 295.4 L754.4 288.8 L754.9 289.8 L755.7 294.8 L756.5 288.5 L756.9 288.6 L757.7 293.3 L758.6 287.5 L758.9 288.0 L759.4 294.0 L760.2 287.0 L760.6 287.5 L761.3 294.6 L762.0 286.1 L762.6 287.3 L763.5 295.2 L764.3 286.9 L764.6 287.8 L765.3 295.1 L766.1 289.1 L766.8 290.2 L767.7 293.3 L768.5 288.5 L769.1 290.0 L769.6 293.5 L770.2 289.7 L770.8 290.2 L771.5 293.5 L772.4 287.3 L773.0 287.6 L773.7 294.9 L774.3 288.9 L774.7 289.8 L775.3 293.5 L775.9 284.9 L776.3 285.9 L777.1 293.6 L777.9 289.3 L778.3 289.7 L779.0 293.9 L779.6 287.8 L780.2 288.2 L780.8 295.4 L781.7 288.3 L782.4 289.3 L783.2 295.5 L783.9 283.9 L784.3 284.0 L785.1 293.2 L785.8 287.5 L786.5 287.5 L787.1 295.8 L787.9 283.1 L788.3 283.1 L789.1 294.2 L789.9 287.1 L790.3 288.4 L791.1 295.8 L791.9 288.8 L792.4 288.9 L793.2 295.7 L793.9 289.5 L794.5 290.4 L795.3 295.2 L796.0 290.1 L796.3 290.7 L797.2 293.7 L797.9 287.4 L798.5 287.6 L797.0 295.0 Z" fill="url(#frL)" /><rect x="275" y="294" width="522" height="161" fill="url(#sgL)"/><defs><linearGradient id="pkL" gradientUnits="userSpaceOnUse" x1="0" y1="243" x2="0" y2="306"><stop offset="0" stop-color="#0050d0"/><stop offset="0.13" stop-color="#0a90e0"/><stop offset="0.24" stop-color="#18c850"/><stop offset="0.42" stop-color="#70a010"/><stop offset="0.62" stop-color="#c05008"/><stop offset="0.85" stop-color="#e81808"/><stop offset="1" stop-color="#f01000"/></linearGradient></defs><path d="M600.0 296.0 L602.7 285.5 L608.1 270.5 L612.4 257.5 L615.7 247.5 L617.2 243.8 L619.5 250.5 L621.6 247.0 L623.2 252.5 L626.5 255.0 L629.7 263.5 L634.0 274.5 L637.3 281.5 L641.1 288.5 L643.0 296.0 Z" fill="#0858d8" /><path d="M601.0 306.0 L601.5 299.0 L604.0 290.0 L609.0 275.0 L613.0 262.0 L616.0 252.0 L617.4 248.3 L619.5 255.0 L621.5 251.5 L623.0 257.0 L626.0 259.5 L629.0 268.0 L633.0 279.0 L636.0 286.0 L639.5 293.0 L641.0 299.0 L641.5 306.0 Z" fill="url(#pkL)" /><rect x="612" y="271.2" width="1.1" height="34.8" fill="#ff2a00" fill-opacity=".55"/><rect x="615.5" y="259.7" width="1.1" height="46.3" fill="#ff2a00" fill-opacity=".55"/><rect x="618.5" y="257.8" width="1.1" height="48.2" fill="#ff2a00" fill-opacity=".55"/><rect x="621" y="258.4" width="1.1" height="47.6" fill="#ff2a00" fill-opacity=".55"/><rect x="624" y="263.8" width="1.1" height="42.2" fill="#ff2a00" fill-opacity=".55"/><rect x="627.5" y="269.8" width="1.1" height="36.2" fill="#ff2a00" fill-opacity=".55"/><rect x="631" y="279.5" width="1.1" height="26.5" fill="#ff2a00" fill-opacity=".55"/><path d="M590.0 298.0 L592.6 282.0 L593.6 282.0 L596.0 298.0 Z" fill="#c06a10" /><rect x="275" y="301" width="522" height="154" filter="url(#streak)" fill="#000" opacity=".13"/><path d="M275.0 298.3 L276.5 299.5 L278.0 294.3 L279.5 294.6 L281.0 297.2 L282.5 293.7 L284.0 298.3 L285.5 298.8 L287.0 294.4 L288.5 299.7 L290.0 296.6 L291.5 296.8 L293.0 299.2 L294.5 298.9 L296.0 298.1 L297.5 293.5 L299.0 295.7 L300.5 299.1 L302.0 295.4 L303.5 295.7 L305.0 296.0 L306.5 294.5 L308.0 295.9 L309.5 298.5 L311.0 294.1 L312.5 298.9 L314.0 296.2 L315.5 294.9 L317.0 291.9 L318.5 296.0 L320.0 299.0 L321.5 297.5 L323.0 298.3 L324.5 297.3 L326.0 298.7 L327.5 294.7 L329.0 298.7 L330.5 295.5 L332.0 296.0 L333.5 296.1 L335.0 298.2 L336.5 296.8 L338.0 300.3 L339.5 299.6 L341.0 297.9 L342.5 297.7 L344.0 295.3 L345.5 297.2 L347.0 294.9 L348.5 298.1 L350.0 299.9 L351.5 294.3 L353.0 295.7 L354.5 297.0 L356.0 298.8 L357.5 298.1 L359.0 294.3 L360.5 293.8 L362.0 298.6 L363.5 290.7 L365.0 296.0 L366.5 293.6 L368.0 294.0 L369.5 296.7 L371.0 294.3 L372.5 295.6 L374.0 298.4 L375.5 300.0 L377.0 294.7 L378.5 294.2 L380.0 294.0 L381.5 298.5 L383.0 296.2 L384.5 296.2 L386.0 298.3 L387.5 299.7 L389.0 298.5 L390.5 295.3 L392.0 297.7 L393.5 295.4 L395.0 297.1 L396.5 292.5 L398.0 297.7 L399.5 294.5 L401.0 294.5 L402.5 295.6 L404.0 297.9 L405.5 298.8 L407.0 295.6 L408.5 294.5 L410.0 294.5 L411.5 294.7 L413.0 299.2 L414.5 297.3 L416.0 298.5 L417.5 296.3 L419.0 293.9 L420.5 293.5 L422.0 299.6 L423.5 290.3 L425.0 297.9 L426.5 297.0 L428.0 290.0 L429.5 295.7 L431.0 293.8 L432.5 298.7 L434.0 300.1 L435.5 299.7 L437.0 297.6 L438.5 298.6 L440.0 298.0 L441.5 297.4 L443.0 298.5 L444.5 296.1 L446.0 294.9 L447.5 294.2 L449.0 297.8 L450.5 298.2 L452.0 299.1 L453.5 297.8 L455.0 299.0 L456.5 300.2 L458.0 298.2 L459.5 295.1 L461.0 291.7 L462.5 298.3 L464.0 294.0 L465.5 293.3 L467.0 295.5 L468.5 296.2 L470.0 297.2 L471.5 293.1 L473.0 294.6 L474.5 294.8 L476.0 296.1 L477.5 293.8 L479.0 293.7 L480.5 296.0 L482.0 295.5 L483.5 297.2 L485.0 298.3 L486.5 293.2 L488.0 297.0 L489.5 299.7 L491.0 298.5 L492.5 294.6 L494.0 290.8 L495.5 296.3 L497.0 296.8 L498.5 295.1 L500.0 299.6 L501.5 299.1 L503.0 295.9 L504.5 293.6 L506.0 294.0 L507.5 298.9 L509.0 298.7 L510.5 296.4 L512.0 297.4 L513.5 300.3 L515.0 300.2 L516.5 289.7 L518.0 296.2 L519.5 294.9 L521.0 294.9 L522.5 293.7 L524.0 297.2 L525.5 295.0 L527.0 295.8 L528.5 298.3 L530.0 296.0 L531.5 296.0 L533.0 294.2 L534.5 296.6 L536.0 299.4 L537.5 296.1 L539.0 294.2 L540.5 297.5 L542.0 295.8 L543.5 298.1 L545.0 295.4 L546.5 299.3 L548.0 295.8 L549.5 294.2 L551.0 295.9 L552.5 296.8 L554.0 297.5 L555.5 299.3 L557.0 296.1 L558.5 293.0 L560.0 297.2 L561.5 296.0 L563.0 294.5 L564.5 294.5 L566.0 298.6 L567.5 298.7 L569.0 294.4 L570.5 294.3 L572.0 294.0 L573.5 296.5 L575.0 295.0 L576.5 294.4 L578.0 293.4 L579.5 296.0 L581.0 297.7 L582.5 296.7 L584.0 296.4 L585.5 291.1 L587.0 294.8 L588.5 293.6 L590.0 293.2 L591.5 292.8 L593.0 285.0 L594.5 290.5 L596.0 297.7 L597.5 295.6 L599.0 297.1 L600.5 296.7 L602.0 293.8 L603.5 291.8 L605.0 287.0 L606.5 282.5 L608.0 278.0 L609.5 273.4 L611.0 268.5 L612.5 263.6 L614.0 258.7 L615.5 253.7 L617.0 249.4 L618.5 251.8 L620.0 254.1 L621.5 251.5 L623.0 257.0 L624.5 258.2 L626.0 259.5 L627.5 263.8 L629.0 268.0 L630.5 272.1 L632.0 276.2 L633.5 280.2 L635.0 283.7 L636.5 287.0 L638.0 290.0 L639.5 293.0 L641.0 298.3 L642.5 296.2 L644.0 295.3 L645.5 299.9 L647.0 295.3 L648.5 300.0 L650.0 299.6 L651.5 300.5 L653.0 298.3 L654.5 296.2 L656.0 295.3 L657.5 294.9 L659.0 293.5 L660.5 295.5 L662.0 296.8 L663.5 296.0 L665.0 297.3 L666.5 289.5 L668.0 297.6 L669.5 294.5 L671.0 293.9 L672.5 294.5 L674.0 294.9 L675.5 295.5 L677.0 298.7 L678.5 298.5 L680.0 295.9 L681.5 295.7 L683.0 294.6 L684.5 296.6 L686.0 297.3 L687.5 294.7 L689.0 295.4 L690.5 298.1 L692.0 296.1 L693.5 298.1 L695.0 298.3 L696.5 297.0 L698.0 296.6 L699.5 298.3 L701.0 294.4 L702.5 295.4 L704.0 293.8 L705.5 294.3 L707.0 296.0 L708.5 299.6 L710.0 294.6 L711.5 293.7 L713.0 290.0 L714.5 299.5 L716.0 300.4 L717.5 299.7 L719.0 299.6 L720.5 298.9 L722.0 295.2 L723.5 295.2 L725.0 299.1 L726.5 297.4 L728.0 298.5 L729.5 296.1 L731.0 292.5 L732.5 299.3 L734.0 291.0 L735.5 294.8 L737.0 296.8 L738.5 297.8 L740.0 297.4 L741.5 297.2 L743.0 296.8 L744.5 296.3 L746.0 296.4 L747.5 294.7 L749.0 293.9 L750.5 294.8 L752.0 297.1 L753.5 299.4 L755.0 299.4 L756.5 299.9 L758.0 293.1 L759.5 295.3 L761.0 297.6 L762.5 299.7 L764.0 300.4 L765.5 294.6 L767.0 298.0 L768.5 297.5 L770.0 296.2 L771.5 299.4 L773.0 296.9 L774.5 295.4 L776.0 299.3 L777.5 298.0 L779.0 298.1 L780.5 299.3 L782.0 295.3 L783.5 294.7 L785.0 297.0 L786.5 299.7 L788.0 299.0 L789.5 296.7 L791.0 293.7 L792.5 292.2 L794.0 292.8 L795.5 299.3 L797.0 295.2 L798.5 294.4" fill="none" stroke="#f6f31a" stroke-width="1.25" stroke-linejoin="round"/>
</g>
<g clip-path="url(#csL)">
<path d="M284.7 125 H300" stroke="#f4f400" stroke-width="2.2"/>
<text x="305.0" y="128.5" text-anchor="start" font-weight="400" fill="#c4c4c4" font-size="12" stroke="#c4c4c4" stroke-width=".3">Sweep 2.39GHz-2.5GHz, RBW:488.8kHz, peak:3192, POI:25.4%, Q:1, Swp:38.9/s, Seg:3, Ac</text>
</g>
<text x="536.0" y="112.9" text-anchor="middle" font-weight="700" fill="#cbcbcb" font-size="12" >RFEYE400065 - RTBW:100MHz (Max)</text>
<path d="M307.4 101 V454.5 H764.6 V101" fill="none" stroke="#fff" stroke-width="1.15"/>
<rect x="777" y="120.30" width="9.8" height="5.62" fill="#ffe400" fill-opacity=".78"/>
<rect x="777" y="125.92" width="9.8" height="5.62" fill="#ffad00" fill-opacity=".78"/>
<rect x="777" y="131.55" width="9.8" height="5.62" fill="#ff7900" fill-opacity=".78"/>
<rect x="777" y="137.17" width="9.8" height="5.62" fill="#ff4900" fill-opacity=".78"/>
<rect x="777" y="142.80" width="9.8" height="5.62" fill="#ff1a00" fill-opacity=".78"/>
<rect x="777" y="148.42" width="9.8" height="5.62" fill="#ec1000" fill-opacity=".78"/>
<rect x="777" y="154.04" width="9.8" height="5.62" fill="#c23400" fill-opacity=".78"/>
<rect x="777" y="159.67" width="9.8" height="5.62" fill="#985800" fill-opacity=".78"/>
<rect x="777" y="165.29" width="9.8" height="5.62" fill="#698700" fill-opacity=".78"/>
<rect x="777" y="170.91" width="9.8" height="5.62" fill="#3cb200" fill-opacity=".78"/>
<rect x="777" y="176.54" width="9.8" height="5.62" fill="#17cf00" fill-opacity=".78"/>
<rect x="777" y="182.16" width="9.8" height="5.62" fill="#00d81b" fill-opacity=".78"/>
<rect x="777" y="187.79" width="9.8" height="5.62" fill="#00c064" fill-opacity=".78"/>
<rect x="777" y="193.41" width="9.8" height="5.62" fill="#00a9ae" fill-opacity=".78"/>
<rect x="777" y="199.03" width="9.8" height="5.62" fill="#0091d6" fill-opacity=".78"/>
<rect x="777" y="204.66" width="9.8" height="5.62" fill="#0079ec" fill-opacity=".78"/>
<rect x="777" y="210.28" width="9.8" height="5.62" fill="#0061fc" fill-opacity=".78"/>
<rect x="777" y="215.90" width="9.8" height="5.62" fill="#0046e2" fill-opacity=".78"/>
<rect x="777" y="221.53" width="9.8" height="5.62" fill="#002cc9" fill-opacity=".78"/>
<rect x="777" y="227.15" width="9.8" height="5.62" fill="#0016a8" fill-opacity=".78"/>
<rect x="777" y="232.78" width="9.8" height="5.62" fill="#00077e" fill-opacity=".78"/>
<path d="M777.3 120.3 V238.4" stroke="#a0a0a0" stroke-width="1" stroke-opacity=".85"/>
<path d="M765 238.4 H777.5" stroke="#c8c8c8" stroke-width="1.3" fill="none"/>
<text x="763.5" y="125.7" text-anchor="end" font-weight="700" fill="#fff" font-size="12" stroke="#000" stroke-opacity=".6" stroke-width="1.6" paint-order="stroke">Max</text>
<text x="763.5" y="243.6" text-anchor="end" font-weight="700" fill="#fff" font-size="12" stroke="#000" stroke-opacity=".6" stroke-width="1.6" paint-order="stroke">0</text>
<rect x="748" y="246.3" width="47" height="14.5" fill="#0c7a10"/>
<text x="771.8" y="257.2" text-anchor="middle" font-weight="700" fill="#fff" font-size="11.3" >Auto</text>
<rect x="776.7" y="474.4" width="10.2" height="117.6" fill="url(#wbL)"/>
<path d="M776.9 474.4 V592" stroke="#e8e8e8" stroke-opacity=".75" stroke-width="1"/>
<path d="M765 492.9 H777" stroke="#e8e8e8" stroke-width="1.3"/>
<text x="763.3" y="497.3" text-anchor="end" font-weight="700" fill="#fff" font-size="12" stroke="#001060" stroke-opacity=".55" stroke-width="1.8" paint-order="stroke">-80</text>
<path d="M765 515.1 H777" stroke="#e8e8e8" stroke-width="1.3"/>
<text x="763.3" y="519.5" text-anchor="end" font-weight="700" fill="#fff" font-size="12" stroke="#001060" stroke-opacity=".55" stroke-width="1.8" paint-order="stroke">-85</text>
<path d="M765 537.3 H777" stroke="#e8e8e8" stroke-width="1.3"/>
<text x="763.3" y="541.7" text-anchor="end" font-weight="700" fill="#fff" font-size="12" stroke="#001060" stroke-opacity=".55" stroke-width="1.8" paint-order="stroke">-90</text>
<path d="M765 559.5 H777" stroke="#e8e8e8" stroke-width="1.3"/>
<text x="763.3" y="563.9" text-anchor="end" font-weight="700" fill="#fff" font-size="12" stroke="#001060" stroke-opacity=".55" stroke-width="1.8" paint-order="stroke">-95</text>
<path d="M765 581.7 H777" stroke="#e8e8e8" stroke-width="1.3"/>
<text x="763.3" y="586.1" text-anchor="end" font-weight="700" fill="#fff" font-size="12" stroke="#001060" stroke-opacity=".55" stroke-width="1.8" paint-order="stroke">-100</text>
<text transform="translate(735.9 533) rotate(-90)" text-anchor="middle" font-size="12" fill="#fff" stroke="#001060" stroke-opacity=".55" stroke-width="1.8" paint-order="stroke">dBm</text>
<rect x="747.6" y="599.7" width="47.4" height="14.9" fill="#0c7a10"/>
<text x="771.8" y="611.2" text-anchor="middle" font-weight="700" fill="#fff" font-size="11.3" >Auto</text>
<path d="M275 455 V101 H797 V455" fill="none" stroke="#a9a9a9" stroke-width="1.5"/>
<path d="M275 455 V809.3 H797 V455" fill="none" stroke="#a9a9a9" stroke-width="1.15"/>
<text x="266.4" y="129.3" text-anchor="end" font-weight="400" fill="#fff" font-size="12" stroke="#fff" stroke-width=".3">-65</text>
<text x="266.4" y="153.4" text-anchor="end" font-weight="400" fill="#fff" font-size="12" stroke="#fff" stroke-width=".3">-70</text>
<text x="266.4" y="177.6" text-anchor="end" font-weight="400" fill="#fff" font-size="12" stroke="#fff" stroke-width=".3">-75</text>
<text x="266.4" y="201.7" text-anchor="end" font-weight="400" fill="#fff" font-size="12" stroke="#fff" stroke-width=".3">-80</text>
<text x="266.4" y="225.9" text-anchor="end" font-weight="400" fill="#fff" font-size="12" stroke="#fff" stroke-width=".3">-85</text>
<text x="266.4" y="250.0" text-anchor="end" font-weight="400" fill="#fff" font-size="12" stroke="#fff" stroke-width=".3">-90</text>
<text x="266.4" y="274.1" text-anchor="end" font-weight="400" fill="#fff" font-size="12" stroke="#fff" stroke-width=".3">-95</text>
<text x="266.4" y="298.3" text-anchor="end" font-weight="400" fill="#fff" font-size="12" stroke="#fff" stroke-width=".3">-100</text>
<text x="266.4" y="322.4" text-anchor="end" font-weight="400" fill="#fff" font-size="12" stroke="#fff" stroke-width=".3">-105</text>
<text x="266.4" y="346.6" text-anchor="end" font-weight="400" fill="#fff" font-size="12" stroke="#fff" stroke-width=".3">-110</text>
<text x="266.4" y="370.7" text-anchor="end" font-weight="400" fill="#fff" font-size="12" stroke="#fff" stroke-width=".3">-115</text>
<text x="266.4" y="394.8" text-anchor="end" font-weight="400" fill="#fff" font-size="12" stroke="#fff" stroke-width=".3">-120</text>
<text x="266.4" y="419.0" text-anchor="end" font-weight="400" fill="#fff" font-size="12" stroke="#fff" stroke-width=".3">-125</text>
<text x="266.4" y="443.1" text-anchor="end" font-weight="400" fill="#fff" font-size="12" stroke="#fff" stroke-width=".3">-130</text>
<text x="333.0" y="88.9" text-anchor="middle" font-weight="400" fill="#fff" font-size="12" stroke="#fff" stroke-width=".3">2.4</text>
<text x="333.0" y="829.2" text-anchor="middle" font-weight="400" fill="#fff" font-size="12" stroke="#fff" stroke-width=".3">2.4</text>
<text x="424.4" y="88.9" text-anchor="middle" font-weight="400" fill="#fff" font-size="12" stroke="#fff" stroke-width=".3">2.42</text>
<text x="424.4" y="829.2" text-anchor="middle" font-weight="400" fill="#fff" font-size="12" stroke="#fff" stroke-width=".3">2.42</text>
<text x="515.8" y="88.9" text-anchor="middle" font-weight="400" fill="#fff" font-size="12" stroke="#fff" stroke-width=".3">2.44</text>
<text x="515.8" y="829.2" text-anchor="middle" font-weight="400" fill="#fff" font-size="12" stroke="#fff" stroke-width=".3">2.44</text>
<text x="607.2" y="88.9" text-anchor="middle" font-weight="400" fill="#fff" font-size="12" stroke="#fff" stroke-width=".3">2.46</text>
<text x="607.2" y="829.2" text-anchor="middle" font-weight="400" fill="#fff" font-size="12" stroke="#fff" stroke-width=".3">2.46</text>
<text x="698.6" y="88.9" text-anchor="middle" font-weight="400" fill="#fff" font-size="12" stroke="#fff" stroke-width=".3">2.48</text>
<text x="698.6" y="829.2" text-anchor="middle" font-weight="400" fill="#fff" font-size="12" stroke="#fff" stroke-width=".3">2.48</text>
<text x="790.0" y="88.9" text-anchor="middle" font-weight="400" fill="#fff" font-size="12" stroke="#fff" stroke-width=".3">2.5</text>
<text x="790.0" y="829.2" text-anchor="middle" font-weight="400" fill="#fff" font-size="12" stroke="#fff" stroke-width=".3">2.5</text>
<g clip-path="url(#czL)"><text x="265.3" y="459.3" text-anchor="end" font-weight="400" fill="#fff" font-size="12" stroke="#fff" stroke-width=".3">0</text></g>
<text x="265.3" y="478.2" text-anchor="end" font-weight="400" fill="#fff" font-size="12" stroke="#fff" stroke-width=".3">0.5</text>
<text x="265.3" y="497.0" text-anchor="end" font-weight="400" fill="#fff" font-size="12" stroke="#fff" stroke-width=".3">1</text>
<text x="265.3" y="515.9" text-anchor="end" font-weight="400" fill="#fff" font-size="12" stroke="#fff" stroke-width=".3">1.5</text>
<text x="265.3" y="534.7" text-anchor="end" font-weight="400" fill="#fff" font-size="12" stroke="#fff" stroke-width=".3">2</text>
<text x="265.3" y="553.6" text-anchor="end" font-weight="400" fill="#fff" font-size="12" stroke="#fff" stroke-width=".3">2.5</text>
<text x="265.3" y="572.5" text-anchor="end" font-weight="400" fill="#fff" font-size="12" stroke="#fff" stroke-width=".3">3</text>
<text x="265.3" y="591.3" text-anchor="end" font-weight="400" fill="#fff" font-size="12" stroke="#fff" stroke-width=".3">3.5</text>
<text x="265.3" y="610.2" text-anchor="end" font-weight="400" fill="#fff" font-size="12" stroke="#fff" stroke-width=".3">4</text>
<text x="265.3" y="629.0" text-anchor="end" font-weight="400" fill="#fff" font-size="12" stroke="#fff" stroke-width=".3">4.5</text>
<text x="265.3" y="647.9" text-anchor="end" font-weight="400" fill="#fff" font-size="12" stroke="#fff" stroke-width=".3">5</text>
<text x="265.3" y="666.8" text-anchor="end" font-weight="400" fill="#fff" font-size="12" stroke="#fff" stroke-width=".3">5.5</text>
<text x="265.3" y="685.6" text-anchor="end" font-weight="400" fill="#fff" font-size="12" stroke="#fff" stroke-width=".3">6</text>
<text x="265.3" y="704.5" text-anchor="end" font-weight="400" fill="#fff" font-size="12" stroke="#fff" stroke-width=".3">6.5</text>
<text x="265.3" y="723.3" text-anchor="end" font-weight="400" fill="#fff" font-size="12" stroke="#fff" stroke-width=".3">7</text>
<text x="265.3" y="742.2" text-anchor="end" font-weight="400" fill="#fff" font-size="12" stroke="#fff" stroke-width=".3">7.5</text>
<text x="265.3" y="761.1" text-anchor="end" font-weight="400" fill="#fff" font-size="12" stroke="#fff" stroke-width=".3">8</text>
<text x="265.3" y="779.9" text-anchor="end" font-weight="400" fill="#fff" font-size="12" stroke="#fff" stroke-width=".3">8.5</text>
<text x="265.3" y="798.8" text-anchor="end" font-weight="400" fill="#fff" font-size="12" stroke="#fff" stroke-width=".3">9</text>
<path d="M265.5 125.0 H275 M797 125.0 H807 M265.5 149.1 H275 M797 149.1 H807 M265.5 173.3 H275 M797 173.3 H807 M265.5 197.4 H275 M797 197.4 H807 M265.5 221.6 H275 M797 221.6 H807 M265.5 245.7 H275 M797 245.7 H807 M265.5 269.8 H275 M797 269.8 H807 M265.5 294.0 H275 M797 294.0 H807 M265.5 318.1 H275 M797 318.1 H807 M265.5 342.3 H275 M797 342.3 H807 M265.5 366.4 H275 M797 366.4 H807 M265.5 390.5 H275 M797 390.5 H807 M265.5 414.7 H275 M797 414.7 H807 M265.5 438.8 H275 M797 438.8 H807 M331.5 91.3 V101 M331.5 809.3 V818.8 M422.9 91.3 V101 M422.9 809.3 V818.8 M514.3 91.3 V101 M514.3 809.3 V818.8 M605.7 91.3 V101 M605.7 809.3 V818.8 M697.1 91.3 V101 M697.1 809.3 V818.8 M788.5 91.3 V101 M788.5 809.3 V818.8" stroke="#c4c4c4" stroke-width="1.5" fill="none"/>
<path d="M265.5 455.0 H275 M797 455.0 H807 M265.5 473.9 H275 M797 473.9 H807 M265.5 492.7 H275 M797 492.7 H807 M265.5 511.6 H275 M797 511.6 H807 M265.5 530.4 H275 M797 530.4 H807 M265.5 549.3 H275 M797 549.3 H807 M265.5 568.2 H275 M797 568.2 H807 M265.5 587.0 H275 M797 587.0 H807 M265.5 605.9 H275 M797 605.9 H807 M265.5 624.7 H275 M797 624.7 H807 M265.5 643.6 H275 M797 643.6 H807 M265.5 662.5 H275 M797 662.5 H807 M265.5 681.3 H275 M797 681.3 H807 M265.5 700.2 H275 M797 700.2 H807 M265.5 719.0 H275 M797 719.0 H807 M265.5 737.9 H275 M797 737.9 H807 M265.5 756.8 H275 M797 756.8 H807 M265.5 775.6 H275 M797 775.6 H807 M265.5 794.5 H275 M797 794.5 H807" stroke="#d0d0d0" stroke-width="1.05" fill="none"/>
<rect x="269" y="178" width="5.8" height="127" fill="url(#cbL)"/>
<rect x="796.6" y="178" width="6.2" height="127" fill="url(#cbL)"/>
<text x="536.0" y="79.3" text-anchor="middle" font-weight="400" fill="#fff" font-size="12" >GHz</text>
<text x="536.0" y="839.6" text-anchor="middle" font-weight="400" fill="#fff" font-size="12" >GHz</text>
<text transform="translate(241.3 278) rotate(-90)" text-anchor="middle" font-size="12" fill="#fff">dBm</text>
<text transform="translate(247.6 632) rotate(-90)" text-anchor="middle" font-size="12" fill="#fff">sec</text>
</g><g font-family="Liberation Sans, Arial, sans-serif">
<defs>
<linearGradient id="sgR" gradientUnits="userSpaceOnUse" x1="0" y1="305" x2="0" y2="455"><stop offset="0.0000" stop-color="#0a80e8"/><stop offset="0.0167" stop-color="#10b8b0"/><stop offset="0.0267" stop-color="#08dc18"/><stop offset="0.0533" stop-color="#30c800"/><stop offset="0.0693" stop-color="#8a7400"/><stop offset="0.0947" stop-color="#f02000"/><stop offset="0.1200" stop-color="#ff4000"/><stop offset="0.1513" stop-color="#ff8800"/><stop offset="0.1893" stop-color="#ffc000"/><stop offset="0.2333" stop-color="#ffe800"/><stop offset="0.2833" stop-color="#fff800"/><stop offset="0.3467" stop-color="#fff400"/><stop offset="0.4033" stop-color="#ffe400"/><stop offset="0.4533" stop-color="#ffc800"/><stop offset="0.5040" stop-color="#ffa800"/><stop offset="0.5633" stop-color="#ff8000"/><stop offset="0.6267" stop-color="#ff4000"/><stop offset="0.6893" stop-color="#ff1000"/><stop offset="0.7267" stop-color="#e81800"/><stop offset="0.7707" stop-color="#c04000"/><stop offset="0.8153" stop-color="#907000"/><stop offset="0.8593" stop-color="#609800"/><stop offset="0.9093" stop-color="#40b800"/><stop offset="0.9533" stop-color="#20d800"/><stop offset="1.0000" stop-color="#08f008"/></linearGradient>
<linearGradient id="frR" gradientUnits="userSpaceOnUse" x1="0" y1="290.5" x2="0" y2="306.5"><stop offset="0" stop-color="#000c58"/><stop offset="0.35" stop-color="#0030b0"/><stop offset="0.68" stop-color="#0058e0"/><stop offset="1" stop-color="#0a80e8"/></linearGradient>
<linearGradient id="cbR" gradientUnits="userSpaceOnUse" x1="0" y1="207" x2="0" y2="318"><stop offset="0.000" stop-color="#ffff00" stop-opacity="1.0"/><stop offset="0.100" stop-color="#ff8c00" stop-opacity="1.0"/><stop offset="0.240" stop-color="#ff0000" stop-opacity="1.0"/><stop offset="0.360" stop-color="#965a00" stop-opacity="1.0"/><stop offset="0.440" stop-color="#46aa00" stop-opacity="1.0"/><stop offset="0.530" stop-color="#00e100" stop-opacity="1.0"/><stop offset="0.660" stop-color="#00a0c8" stop-opacity="1.0"/><stop offset="0.780" stop-color="#0064ff" stop-opacity="1.0"/><stop offset="0.910" stop-color="#001cb9" stop-opacity="1.0"/><stop offset="1.000" stop-color="#000069" stop-opacity="1.0"/></linearGradient>
<linearGradient id="ibR" gradientUnits="userSpaceOnUse" x1="0" y1="120.3" x2="0" y2="238.4"><stop offset="0.000" stop-color="#ffff00" stop-opacity="0.8"/><stop offset="0.100" stop-color="#ff8c00" stop-opacity="0.8"/><stop offset="0.240" stop-color="#ff0000" stop-opacity="0.8"/><stop offset="0.360" stop-color="#965a00" stop-opacity="0.8"/><stop offset="0.440" stop-color="#46aa00" stop-opacity="0.8"/><stop offset="0.530" stop-color="#00e100" stop-opacity="0.8"/><stop offset="0.660" stop-color="#00a0c8" stop-opacity="0.8"/><stop offset="0.780" stop-color="#0064ff" stop-opacity="0.8"/><stop offset="0.910" stop-color="#001cb9" stop-opacity="0.8"/><stop offset="1.000" stop-color="#000069" stop-opacity="0.8"/></linearGradient>
<linearGradient id="wbR" gradientUnits="userSpaceOnUse" x1="0" y1="474.4" x2="0" y2="592"><stop offset="0.000" stop-color="#ffff00" stop-opacity="0.82"/><stop offset="0.100" stop-color="#ff8c00" stop-opacity="0.82"/><stop offset="0.240" stop-color="#ff0000" stop-opacity="0.82"/><stop offset="0.360" stop-color="#965a00" stop-opacity="0.82"/><stop offset="0.440" stop-color="#46aa00" stop-opacity="0.82"/><stop offset="0.530" stop-color="#00e100" stop-opacity="0.82"/><stop offset="0.660" stop-color="#00a0c8" stop-opacity="0.82"/><stop offset="0.780" stop-color="#0064ff" stop-opacity="0.82"/><stop offset="0.910" stop-color="#001cb9" stop-opacity="0.82"/><stop offset="1.000" stop-color="#000069" stop-opacity="0.82"/></linearGradient>
<clipPath id="csR"><rect x="864" y="101" width="522" height="354"/></clipPath>
<clipPath id="cwR"><rect x="864" y="455" width="522" height="335.20000000000005"/></clipPath>
<clipPath id="czR"><rect x="824" y="455.6" width="40" height="30"/></clipPath>
</defs>
<rect x="864" y="455" width="522" height="335.2" fill="#0a34b0"/>
<rect x="864" y="455" width="522" height="335.2" filter="url(#wfn)"/>
<g clip-path="url(#cwR)">
<rect x="1177" y="455" width="55" height="335.2" fill="url(#bE)" opacity=".16"/><rect x="1179.0" y="457.0" width="51.8" height="1.3" fill="url(#bK)" opacity="0.95"/><rect x="1179.2" y="459.1" width="51.2" height="1.3" fill="url(#bK)" opacity="0.85"/><rect x="1162.1" y="462.0" width="78.8" height="1.5" fill="url(#bA)" opacity="0.75"/><rect x="1178.5" y="465.9" width="50.7" height="1.6" fill="url(#bK)" opacity="0.91"/><rect x="1161.9" y="468.4" width="81.5" height="1.6" fill="url(#bA)" opacity="0.92"/><rect x="1178.2" y="470.8" width="52.5" height="1.5" fill="url(#bK)" opacity="0.93"/><rect x="1179.2" y="472.9" width="51.7" height="1.3" fill="url(#bK)" opacity="0.81"/><rect x="1178.2" y="475.1" width="51.2" height="1.8" fill="url(#bK)" opacity="0.67"/><rect x="1179.2" y="479.7" width="50.6" height="2.0" fill="url(#bK)" opacity="0.81"/><rect x="1178.8" y="482.5" width="52.1" height="1.4" fill="url(#bK)" opacity="0.84"/><rect x="1179.5" y="484.2" width="51.5" height="1.4" fill="url(#bK)" opacity="0.85"/><rect x="1179.5" y="487.7" width="50.7" height="2.1" fill="url(#bK)" opacity="0.89"/><rect x="1178.5" y="489.3" width="50.7" height="1.8" fill="url(#bK)" opacity="0.88"/><rect x="1165.0" y="491.5" width="71.1" height="1.7" fill="url(#bA)" opacity="0.88"/><rect x="1179.1" y="494.2" width="50.3" height="1.6" fill="url(#bK)" opacity="0.92"/><rect x="1179.8" y="496.6" width="50.8" height="1.8" fill="url(#bK)" opacity="0.65"/><rect x="1168.1" y="498.2" width="75.4" height="1.7" fill="url(#bA)" opacity="0.94"/><rect x="1179.2" y="501.2" width="50.5" height="2.1" fill="url(#bK)" opacity="0.71"/><rect x="1170.8" y="509.0" width="73.5" height="1.3" fill="url(#bA)" opacity="0.78"/><rect x="1179.6" y="512.6" width="50.6" height="1.3" fill="url(#bB)" opacity="0.80"/><rect x="1179.7" y="515.1" width="50.4" height="1.6" fill="url(#bK)" opacity="0.99"/><rect x="1179.9" y="517.1" width="50.0" height="1.9" fill="url(#bK)" opacity="0.83"/><rect x="1162.7" y="520.2" width="76.2" height="2.0" fill="url(#bA)" opacity="0.81"/><rect x="1161.5" y="523.5" width="79.2" height="1.4" fill="url(#bA)" opacity="0.85"/><rect x="1179.6" y="525.6" width="49.5" height="1.9" fill="url(#bK)" opacity="0.65"/><rect x="1179.7" y="527.6" width="50.3" height="1.6" fill="url(#bK)" opacity="0.83"/><rect x="1178.0" y="531.3" width="52.8" height="1.3" fill="url(#bK)" opacity="0.98"/><rect x="1179.9" y="534.1" width="50.4" height="2.0" fill="url(#bK)" opacity="0.82"/><rect x="1179.0" y="541.0" width="51.3" height="1.7" fill="url(#bK)" opacity="0.89"/><rect x="1179.5" y="543.5" width="51.1" height="2.0" fill="url(#bK)" opacity="0.76"/><rect x="1178.8" y="547.4" width="51.4" height="1.3" fill="url(#bK)" opacity="0.95"/><rect x="1178.8" y="551.2" width="50.6" height="1.5" fill="url(#bK)" opacity="0.65"/><rect x="1179.9" y="553.8" width="50.6" height="1.7" fill="url(#bK)" opacity="0.80"/><rect x="1166.9" y="556.9" width="69.3" height="2.1" fill="url(#bA)" opacity="0.70"/><rect x="1163.3" y="561.3" width="74.9" height="1.6" fill="url(#bA)" opacity="0.73"/><rect x="1178.1" y="564.1" width="52.8" height="1.4" fill="url(#bK)" opacity="0.66"/><rect x="1164.7" y="567.3" width="75.0" height="1.7" fill="url(#bA)" opacity="0.84"/><rect x="1179.8" y="574.0" width="50.8" height="1.3" fill="url(#bK)" opacity="0.98"/><rect x="1179.6" y="575.9" width="49.6" height="1.8" fill="url(#bK)" opacity="0.94"/><rect x="1178.4" y="578.2" width="52.4" height="2.1" fill="url(#bK)" opacity="0.92"/><rect x="1161.9" y="581.8" width="80.9" height="2.1" fill="url(#bA)" opacity="0.98"/><rect x="1178.3" y="584.0" width="51.5" height="1.6" fill="url(#bK)" opacity="0.81"/><rect x="1178.9" y="586.2" width="51.0" height="1.8" fill="url(#bK)" opacity="0.80"/><rect x="1178.9" y="588.3" width="50.5" height="1.4" fill="url(#bK)" opacity="0.74"/><rect x="1179.3" y="591.5" width="50.6" height="1.8" fill="url(#bK)" opacity="0.67"/><rect x="1163.1" y="594.5" width="77.5" height="1.9" fill="url(#bA)" opacity="0.97"/><rect x="1166.1" y="599.1" width="78.9" height="2.0" fill="url(#bA)" opacity="0.80"/><rect x="1180.0" y="602.6" width="50.9" height="1.4" fill="url(#bK)" opacity="0.82"/><rect x="1178.4" y="604.8" width="52.6" height="1.4" fill="url(#bK)" opacity="0.68"/><rect x="1179.7" y="608.2" width="50.7" height="1.7" fill="url(#bK)" opacity="0.96"/><rect x="1179.6" y="611.0" width="50.6" height="1.6" fill="url(#bK)" opacity="0.74"/><rect x="1180.0" y="614.9" width="50.0" height="1.8" fill="url(#bK)" opacity="0.62"/><rect x="1163.7" y="618.7" width="80.8" height="1.9" fill="url(#bA)" opacity="0.97"/><rect x="1166.5" y="628.5" width="70.3" height="1.8" fill="url(#bA)" opacity="0.80"/><rect x="1179.8" y="630.5" width="49.5" height="1.8" fill="url(#bK)" opacity="0.92"/><rect x="1179.6" y="632.8" width="50.8" height="1.5" fill="url(#bK)" opacity="0.96"/><rect x="1168.2" y="635.6" width="72.9" height="2.0" fill="url(#bA)" opacity="1.00"/><rect x="1167.3" y="637.7" width="69.0" height="1.7" fill="url(#bA)" opacity="0.82"/><rect x="1164.5" y="640.7" width="72.6" height="1.4" fill="url(#bA)" opacity="0.99"/><rect x="1174.2" y="653.0" width="55.9" height="1.8" fill="url(#bB)" opacity="0.77"/><rect x="1169.3" y="655.3" width="73.8" height="1.5" fill="url(#bA)" opacity="0.87"/><rect x="1178.4" y="657.7" width="51.5" height="1.6" fill="url(#bK)" opacity="0.63"/><rect x="1178.9" y="661.8" width="50.5" height="1.4" fill="url(#bK)" opacity="0.69"/><rect x="1178.4" y="665.4" width="52.4" height="2.0" fill="url(#bK)" opacity="0.84"/><rect x="1178.3" y="672.5" width="52.0" height="1.4" fill="url(#bK)" opacity="0.80"/><rect x="1176.3" y="674.7" width="58.4" height="1.5" fill="url(#bB)" opacity="0.76"/><rect x="1178.9" y="677.4" width="50.7" height="1.3" fill="url(#bK)" opacity="0.70"/><rect x="1179.8" y="681.1" width="49.9" height="1.7" fill="url(#bK)" opacity="0.63"/><rect x="1179.3" y="683.6" width="51.0" height="2.0" fill="url(#bK)" opacity="0.86"/><rect x="1168.4" y="686.3" width="75.5" height="1.3" fill="url(#bA)" opacity="0.87"/><rect x="1179.3" y="688.4" width="50.8" height="1.9" fill="url(#bK)" opacity="0.94"/><rect x="1178.1" y="691.8" width="51.0" height="1.9" fill="url(#bK)" opacity="0.89"/><rect x="1178.7" y="695.0" width="52.1" height="1.6" fill="url(#bK)" opacity="0.94"/><rect x="1178.1" y="697.7" width="51.6" height="1.3" fill="url(#bK)" opacity="0.96"/><rect x="1178.5" y="700.6" width="50.7" height="1.7" fill="url(#bK)" opacity="0.92"/><rect x="1163.6" y="704.4" width="77.9" height="1.5" fill="url(#bA)" opacity="0.90"/><rect x="1178.7" y="715.2" width="51.1" height="1.9" fill="url(#bK)" opacity="0.87"/><rect x="1178.1" y="718.0" width="52.9" height="2.1" fill="url(#bK)" opacity="0.77"/><rect x="1180.0" y="722.7" width="49.3" height="1.5" fill="url(#bK)" opacity="0.63"/><rect x="1179.5" y="726.6" width="51.5" height="1.6" fill="url(#bK)" opacity="0.85"/><rect x="1162.4" y="729.7" width="76.1" height="1.8" fill="url(#bA)" opacity="0.86"/><rect x="1179.4" y="737.6" width="51.0" height="1.8" fill="url(#bK)" opacity="0.91"/><rect x="1179.0" y="741.5" width="50.1" height="1.8" fill="url(#bK)" opacity="0.84"/><rect x="1165.8" y="744.7" width="74.3" height="1.4" fill="url(#bA)" opacity="0.92"/><rect x="1178.9" y="748.1" width="52.0" height="1.9" fill="url(#bK)" opacity="0.87"/><rect x="1179.8" y="751.6" width="51.1" height="1.9" fill="url(#bK)" opacity="0.73"/><rect x="1169.7" y="755.3" width="71.2" height="1.3" fill="url(#bA)" opacity="0.75"/><rect x="1168.0" y="764.2" width="74.9" height="2.1" fill="url(#bA)" opacity="0.75"/><rect x="1170.1" y="767.1" width="66.3" height="1.9" fill="url(#bA)" opacity="0.80"/><rect x="1161.7" y="769.6" width="80.2" height="1.9" fill="url(#bA)" opacity="0.88"/><rect x="1163.1" y="772.5" width="74.6" height="1.3" fill="url(#bA)" opacity="0.84"/><rect x="1178.3" y="776.3" width="51.3" height="1.9" fill="url(#bK)" opacity="0.65"/><rect x="1179.7" y="779.2" width="49.5" height="1.9" fill="url(#bK)" opacity="0.64"/><rect x="1179.5" y="783.0" width="50.2" height="2.0" fill="url(#bK)" opacity="0.91"/><rect x="1165.9" y="785.4" width="74.7" height="1.9" fill="url(#bA)" opacity="0.99"/><rect x="1160.0" y="469.0" width="87.0" height="2.2" fill="url(#bC)"/><rect x="1160.0" y="477.0" width="87.0" height="2.2" fill="url(#bC)"/><rect x="1160.0" y="489.0" width="87.0" height="2.2" fill="url(#bC)"/><rect x="1160.0" y="503.0" width="87.0" height="2.2" fill="url(#bD)"/><rect x="1160.0" y="520.0" width="87.0" height="2.2" fill="url(#bD)"/><rect x="1160.0" y="532.0" width="87.0" height="2.2" fill="url(#bC)"/><rect x="1160.0" y="546.0" width="87.0" height="2.2" fill="url(#bC)"/><rect x="1160.0" y="556.0" width="87.0" height="2.2" fill="url(#bC)"/><rect x="1160.0" y="589.0" width="87.0" height="2.2" fill="url(#bC)"/><rect x="1160.0" y="617.0" width="87.0" height="2.2" fill="url(#bC)"/><rect x="1160.0" y="646.0" width="87.0" height="2.2" fill="url(#bD)"/><rect x="1160.0" y="649.5" width="87.0" height="2.2" fill="url(#bC)"/><rect x="1160.0" y="652.5" width="87.0" height="2.2" fill="url(#bD)"/><rect x="1160.0" y="700.0" width="87.0" height="2.2" fill="url(#bC)"/><rect x="1160.0" y="707.0" width="87.0" height="2.2" fill="url(#bC)"/><rect x="1160.0" y="718.0" width="87.0" height="2.2" fill="url(#bD)"/><rect x="1160.0" y="724.0" width="87.0" height="2.2" fill="url(#bC)"/><rect x="1160.0" y="733.0" width="87.0" height="2.2" fill="url(#bC)"/><rect x="1160.0" y="740.0" width="87.0" height="2.2" fill="url(#bC)"/><rect x="1160.0" y="783.0" width="87.0" height="2.2" fill="url(#bD)"/><rect x="948.6" y="508.0" width="46.9" height="1.4" fill="url(#bA)" opacity="0.77"/><rect x="947.9" y="511.8" width="50.5" height="1.4" fill="url(#bE)" opacity="0.90"/><rect x="949.7" y="522.0" width="45.0" height="1.4" fill="url(#bE)" opacity="0.95"/><rect x="950.3" y="526.1" width="48.6" height="1.4" fill="url(#bE)" opacity="0.81"/><rect x="948.4" y="531.1" width="48.9" height="1.4" fill="url(#bA)" opacity="0.77"/><rect x="949.2" y="534.5" width="47.6" height="1.4" fill="url(#bB)" opacity="0.91"/><rect x="950.3" y="566.0" width="47.7" height="1.4" fill="url(#bE)" opacity="0.91"/><rect x="950.5" y="569.8" width="44.5" height="1.4" fill="url(#bE)" opacity="0.82"/><rect x="950.7" y="600.0" width="45.8" height="1.4" fill="url(#bE)" opacity="0.76"/><rect x="951.8" y="604.5" width="42.3" height="1.4" fill="url(#bA)" opacity="0.80"/><rect x="952.4" y="607.9" width="42.3" height="1.4" fill="url(#bA)" opacity="0.93"/><rect x="950.9" y="611.7" width="43.5" height="1.4" fill="url(#bE)" opacity="0.82"/><rect x="947.9" y="630.0" width="49.0" height="1.4" fill="url(#bB)" opacity="0.75"/><rect x="947.6" y="635.3" width="49.9" height="1.4" fill="url(#bB)" opacity="0.91"/><rect x="951.7" y="638.6" width="47.6" height="1.4" fill="url(#bA)" opacity="0.79"/><rect x="949.1" y="645.0" width="49.9" height="1.4" fill="url(#bE)" opacity="0.79"/><rect x="947.1" y="649.0" width="48.3" height="1.4" fill="url(#bE)" opacity="0.80"/><rect x="951.3" y="716.0" width="47.1" height="1.4" fill="url(#bE)" opacity="0.96"/><rect x="947.3" y="720.8" width="51.1" height="1.4" fill="url(#bE)" opacity="0.82"/><rect x="948.8" y="755.0" width="45.6" height="1.4" fill="url(#bA)" opacity="1.00"/><rect x="952.4" y="758.7" width="42.8" height="1.4" fill="url(#bE)" opacity="0.77"/><rect x="949.8" y="762.6" width="48.2" height="1.4" fill="url(#bA)" opacity="0.89"/><rect x="949.2" y="766.4" width="49.6" height="1.4" fill="url(#bA)" opacity="0.97"/><rect x="924.9" y="542.4" width="7.4" height="1.5" fill="url(#dR)" opacity=".92"/><rect x="925.8" y="686.1" width="7.4" height="1.5" fill="url(#dR)" opacity=".92"/><rect x="925.9" y="686.8" width="7.4" height="1.5" fill="url(#dY)" opacity=".92"/><rect x="924.8" y="536.0" width="7.4" height="1.5" fill="url(#dR)" opacity=".92"/><rect x="925.7" y="598.1" width="7.4" height="1.5" fill="url(#dR)" opacity=".92"/><rect x="925.0" y="687.9" width="7.4" height="1.5" fill="url(#dR)" opacity=".92"/><rect x="925.5" y="673.3" width="7.4" height="1.5" fill="url(#dR)" opacity=".92"/><rect x="925.2" y="632.9" width="7.4" height="1.5" fill="url(#dY)" opacity=".92"/><rect x="925.5" y="654.7" width="7.4" height="1.5" fill="url(#dR)" opacity=".92"/><rect x="926.0" y="522.5" width="7.4" height="1.5" fill="url(#dR)" opacity=".92"/><rect x="925.5" y="478.2" width="7.4" height="1.5" fill="url(#dR)" opacity=".92"/><rect x="925.4" y="605.0" width="7.4" height="1.5" fill="url(#dR)" opacity=".92"/><rect x="925.0" y="580.7" width="7.4" height="1.5" fill="url(#dR)" opacity=".92"/><rect x="925.6" y="662.4" width="7.4" height="1.5" fill="url(#dR)" opacity=".92"/><rect x="925.2" y="479.5" width="7.4" height="1.5" fill="url(#dR)" opacity=".92"/><rect x="925.1" y="626.5" width="7.4" height="1.5" fill="url(#dY)" opacity=".92"/><rect x="925.3" y="548.5" width="7.4" height="1.5" fill="url(#dR)" opacity=".92"/><rect x="925.6" y="529.5" width="7.4" height="1.5" fill="url(#dY)" opacity=".92"/><rect x="925.2" y="753.2" width="7.4" height="1.5" fill="url(#dR)" opacity=".92"/><rect x="924.9" y="480.9" width="7.4" height="1.5" fill="url(#dR)" opacity=".92"/><rect x="925.9" y="567.0" width="7.4" height="1.5" fill="url(#dR)" opacity=".92"/><rect x="925.3" y="716.9" width="7.4" height="1.5" fill="url(#dR)" opacity=".92"/><rect x="1035.2" y="665.2" width="7.4" height="1.5" fill="url(#dY)" opacity=".92"/><rect x="1035.2" y="676.4" width="7.4" height="1.5" fill="url(#dR)" opacity=".92"/><rect x="1035.4" y="707.4" width="7.4" height="1.5" fill="url(#dR)" opacity=".92"/><rect x="1034.4" y="476.2" width="7.4" height="1.5" fill="url(#dR)" opacity=".92"/><rect x="1034.3" y="607.9" width="7.4" height="1.5" fill="url(#dR)" opacity=".92"/><rect x="1034.8" y="474.8" width="7.4" height="1.5" fill="url(#dR)" opacity=".92"/><rect x="1034.8" y="476.3" width="7.4" height="1.5" fill="url(#dR)" opacity=".92"/><rect x="1035.4" y="656.2" width="7.4" height="1.5" fill="url(#dR)" opacity=".92"/><rect x="1034.3" y="571.1" width="7.4" height="1.5" fill="url(#dR)" opacity=".92"/><rect x="1034.8" y="742.5" width="7.4" height="1.5" fill="url(#dR)" opacity=".92"/><rect x="1034.8" y="704.8" width="7.4" height="1.5" fill="url(#dR)" opacity=".92"/><rect x="1035.0" y="554.2" width="7.4" height="1.5" fill="url(#dR)" opacity=".92"/><rect x="1035.4" y="663.8" width="7.4" height="1.5" fill="url(#dY)" opacity=".92"/><rect x="1035.1" y="594.6" width="7.4" height="1.5" fill="url(#dR)" opacity=".92"/><rect x="1034.5" y="463.1" width="7.4" height="1.5" fill="url(#dR)" opacity=".92"/><rect x="1035.5" y="773.7" width="7.4" height="1.5" fill="url(#dY)" opacity=".92"/><rect x="1035.1" y="585.7" width="7.4" height="1.5" fill="url(#dR)" opacity=".92"/><rect x="1035.1" y="596.4" width="7.4" height="1.5" fill="url(#dR)" opacity=".92"/><rect x="1034.7" y="772.2" width="7.4" height="1.5" fill="url(#dR)" opacity=".92"/><rect x="1035.0" y="538.5" width="7.4" height="1.5" fill="url(#dR)" opacity=".92"/><rect x="1034.4" y="746.0" width="7.4" height="1.5" fill="url(#dR)" opacity=".92"/><rect x="1035.0" y="480.1" width="7.4" height="1.5" fill="url(#dR)" opacity=".92"/><rect x="1282.9" y="610.1" width="7.4" height="1.5" fill="url(#dR)" opacity=".92"/><rect x="1282.6" y="525.5" width="7.4" height="1.5" fill="url(#dR)" opacity=".92"/><rect x="1282.5" y="651.2" width="7.4" height="1.5" fill="url(#dR)" opacity=".92"/><rect x="1281.9" y="711.1" width="7.4" height="1.5" fill="url(#dR)" opacity=".92"/><rect x="1282.2" y="730.6" width="7.4" height="1.5" fill="url(#dR)" opacity=".92"/><rect x="1282.7" y="754.2" width="7.4" height="1.5" fill="url(#dR)" opacity=".92"/><rect x="1282.9" y="647.9" width="7.4" height="1.5" fill="url(#dY)" opacity=".92"/><rect x="1282.7" y="535.3" width="7.4" height="1.5" fill="url(#dR)" opacity=".92"/><rect x="1282.0" y="760.1" width="7.4" height="1.5" fill="url(#dR)" opacity=".92"/><rect x="1282.9" y="622.1" width="7.4" height="1.5" fill="url(#dR)" opacity=".92"/><rect x="1283.0" y="737.4" width="7.4" height="1.5" fill="url(#dY)" opacity=".92"/><rect x="1282.6" y="534.0" width="7.4" height="1.5" fill="url(#dY)" opacity=".92"/><rect x="1282.1" y="744.5" width="7.4" height="1.5" fill="url(#dR)" opacity=".92"/><rect x="1281.9" y="558.9" width="7.4" height="1.5" fill="url(#dR)" opacity=".92"/><rect x="1282.1" y="695.5" width="7.4" height="1.5" fill="url(#dR)" opacity=".92"/><rect x="1282.8" y="737.9" width="7.4" height="1.5" fill="url(#dR)" opacity=".92"/><rect x="1282.2" y="517.8" width="7.4" height="1.5" fill="url(#dR)" opacity=".92"/><rect x="1282.2" y="458.6" width="7.4" height="1.5" fill="url(#dY)" opacity=".92"/><rect x="1273.5" y="743.2" width="7.4" height="1.5" fill="url(#dR)" opacity=".92"/><rect x="1273.2" y="491.0" width="7.4" height="1.5" fill="url(#dY)" opacity=".92"/><rect x="1272.8" y="625.9" width="7.4" height="1.5" fill="url(#dR)" opacity=".92"/><rect x="1273.6" y="702.0" width="7.4" height="1.5" fill="url(#dR)" opacity=".92"/><rect x="1272.9" y="736.4" width="7.4" height="1.5" fill="url(#dR)" opacity=".92"/><rect x="1273.4" y="539.0" width="7.4" height="1.5" fill="url(#dY)" opacity=".92"/><rect x="1272.8" y="561.8" width="7.4" height="1.5" fill="url(#dR)" opacity=".92"/><rect x="1272.9" y="694.2" width="7.4" height="1.5" fill="url(#dY)" opacity=".92"/><rect x="987.6" y="727.9" width="11.5" height="1.45" fill="url(#dR)" opacity=".92"/><rect x="1103.6" y="496.4" width="11.7" height="1.45" fill="url(#dR)" opacity=".92"/><rect x="1108.2" y="701.0" width="11.2" height="1.45" fill="url(#dR)" opacity=".92"/><rect x="944.5" y="514.1" width="12.0" height="1.45" fill="url(#dY)" opacity=".92"/><rect x="935.3" y="601.1" width="11.4" height="1.45" fill="url(#dR)" opacity=".92"/><rect x="947.5" y="692.9" width="12.3" height="1.45" fill="url(#dY)" opacity=".92"/><rect x="1087.4" y="756.1" width="10.7" height="1.45" fill="url(#dR)" opacity=".92"/><rect x="1057.3" y="537.9" width="11.1" height="1.45" fill="url(#dR)" opacity=".92"/><rect x="1000.1" y="772.2" width="12.6" height="1.45" fill="url(#dR)" opacity=".92"/><rect x="1011.1" y="595.2" width="11.5" height="1.45" fill="url(#dR)" opacity=".92"/><rect x="1044.5" y="576.1" width="12.0" height="1.45" fill="url(#dR)" opacity=".92"/><rect x="995.4" y="626.4" width="10.6" height="1.45" fill="url(#dG)" opacity=".92"/><rect x="1044.1" y="772.2" width="12.3" height="1.45" fill="url(#dR)" opacity=".92"/><rect x="945.9" y="537.3" width="11.7" height="1.45" fill="url(#dG)" opacity=".92"/><rect x="1076.0" y="462.9" width="10.8" height="1.45" fill="url(#dR)" opacity=".92"/><rect x="1021.1" y="776.7" width="12.1" height="1.45" fill="url(#dG)" opacity=".92"/><rect x="1037.2" y="579.7" width="12.8" height="1.45" fill="url(#dR)" opacity=".92"/><rect x="1042.0" y="640.4" width="10.9" height="1.45" fill="url(#dR)" opacity=".92"/><rect x="1103.3" y="630.5" width="12.4" height="1.45" fill="url(#dR)" opacity=".92"/><rect x="982.7" y="508.1" width="11.3" height="1.45" fill="url(#dR)" opacity=".92"/><rect x="934.3" y="633.0" width="11.2" height="1.45" fill="url(#dG)" opacity=".92"/><rect x="1033.0" y="646.6" width="13.1" height="1.45" fill="url(#dY)" opacity=".92"/><rect x="939.7" y="723.3" width="13.4" height="1.45" fill="url(#dR)" opacity=".92"/><rect x="1006.3" y="758.4" width="12.5" height="1.45" fill="url(#dR)" opacity=".92"/><rect x="976.8" y="576.3" width="13.2" height="1.45" fill="url(#dR)" opacity=".92"/><rect x="1043.6" y="520.2" width="11.8" height="1.45" fill="url(#dR)" opacity=".92"/><rect x="1106.9" y="569.6" width="13.4" height="1.45" fill="url(#dG)" opacity=".92"/><rect x="1029.2" y="637.6" width="13.3" height="1.45" fill="url(#dR)" opacity=".92"/><rect x="1027.0" y="596.1" width="10.8" height="1.45" fill="url(#dR)" opacity=".92"/><rect x="943.4" y="587.9" width="12.2" height="1.45" fill="url(#dR)" opacity=".92"/><rect x="970.0" y="507.3" width="11.2" height="1.45" fill="url(#dG)" opacity=".92"/><rect x="976.5" y="778.0" width="13.1" height="1.45" fill="url(#dR)" opacity=".92"/><rect x="1056.6" y="776.7" width="13.4" height="1.45" fill="url(#dR)" opacity=".92"/><rect x="1048.1" y="678.4" width="13.1" height="1.45" fill="url(#dG)" opacity=".92"/><rect x="1021.9" y="622.0" width="10.8" height="1.45" fill="url(#dY)" opacity=".92"/><rect x="1017.0" y="739.0" width="13.1" height="1.45" fill="url(#dR)" opacity=".92"/><rect x="1097.0" y="601.4" width="11.6" height="1.45" fill="url(#dY)" opacity=".92"/><rect x="1047.8" y="772.7" width="11.5" height="1.45" fill="url(#dR)" opacity=".92"/><rect x="1065.0" y="472.8" width="13.0" height="1.45" fill="url(#dY)" opacity=".92"/><rect x="957.7" y="588.9" width="13.1" height="1.45" fill="url(#dR)" opacity=".92"/><rect x="1017.6" y="669.6" width="11.6" height="1.45" fill="url(#dR)" opacity=".92"/><rect x="1074.0" y="526.3" width="13.5" height="1.45" fill="url(#dY)" opacity=".92"/><rect x="1093.7" y="668.2" width="13.5" height="1.45" fill="url(#dR)" opacity=".92"/><rect x="1033.1" y="638.3" width="10.6" height="1.45" fill="url(#dR)" opacity=".92"/><rect x="1038.2" y="740.3" width="11.8" height="1.45" fill="url(#dY)" opacity=".92"/><rect x="1034.5" y="521.0" width="11.7" height="1.45" fill="url(#dY)" opacity=".92"/><rect x="1048.4" y="633.8" width="12.5" height="1.45" fill="url(#dG)" opacity=".92"/><rect x="1021.6" y="537.0" width="12.5" height="1.45" fill="url(#dR)" opacity=".92"/><rect x="1048.4" y="679.3" width="10.7" height="1.45" fill="url(#dY)" opacity=".92"/><rect x="1006.6" y="742.3" width="12.2" height="1.45" fill="url(#dG)" opacity=".92"/><rect x="987.2" y="468.7" width="12.0" height="1.45" fill="url(#dY)" opacity=".92"/><rect x="935.8" y="697.3" width="12.9" height="1.45" fill="url(#dR)" opacity=".92"/><rect x="1048.2" y="755.0" width="10.9" height="1.45" fill="url(#dY)" opacity=".92"/><rect x="1031.5" y="636.7" width="11.2" height="1.45" fill="url(#dG)" opacity=".92"/><rect x="1034.6" y="660.6" width="11.4" height="1.45" fill="url(#dR)" opacity=".92"/><rect x="1104.8" y="734.2" width="12.7" height="1.45" fill="url(#dR)" opacity=".92"/><rect x="980.7" y="557.7" width="13.5" height="1.45" fill="url(#dR)" opacity=".92"/><rect x="961.2" y="664.7" width="10.9" height="1.45" fill="url(#dR)" opacity=".92"/><rect x="983.0" y="616.0" width="11.6" height="1.45" fill="url(#dY)" opacity=".92"/><rect x="1062.1" y="676.1" width="12.6" height="1.45" fill="url(#dG)" opacity=".92"/><rect x="993.1" y="514.8" width="12.2" height="1.45" fill="url(#dR)" opacity=".92"/><rect x="1047.8" y="655.7" width="12.8" height="1.45" fill="url(#dR)" opacity=".92"/><rect x="962.4" y="638.4" width="12.3" height="1.45" fill="url(#dR)" opacity=".92"/><rect x="943.6" y="734.1" width="11.4" height="1.45" fill="url(#dG)" opacity=".92"/><rect x="1012.0" y="462.6" width="12.0" height="1.45" fill="url(#dY)" opacity=".92"/><rect x="1027.4" y="463.5" width="11.0" height="1.45" fill="url(#dG)" opacity=".92"/><rect x="1051.7" y="709.1" width="11.8" height="1.45" fill="url(#dG)" opacity=".92"/><rect x="985.6" y="583.7" width="11.8" height="1.45" fill="url(#dG)" opacity=".92"/><rect x="1072.7" y="685.8" width="11.0" height="1.45" fill="url(#dR)" opacity=".92"/><rect x="984.8" y="659.5" width="11.2" height="1.45" fill="url(#dR)" opacity=".92"/><rect x="1070.1" y="516.2" width="13.2" height="1.45" fill="url(#dR)" opacity=".92"/><rect x="1034.8" y="536.2" width="13.3" height="1.45" fill="url(#dR)" opacity=".92"/><rect x="991.7" y="744.9" width="12.4" height="1.45" fill="url(#dR)" opacity=".92"/><rect x="1051.4" y="715.8" width="13.1" height="1.45" fill="url(#dR)" opacity=".92"/><rect x="1082.1" y="646.3" width="10.6" height="1.45" fill="url(#dG)" opacity=".92"/><rect x="1072.3" y="690.1" width="13.3" height="1.45" fill="url(#dR)" opacity=".92"/><rect x="1095.2" y="523.2" width="12.5" height="1.45" fill="url(#dY)" opacity=".92"/><rect x="973.6" y="651.1" width="12.9" height="1.45" fill="url(#dR)" opacity=".92"/><rect x="935.9" y="485.2" width="11.3" height="1.45" fill="url(#dR)" opacity=".92"/><rect x="940.4" y="587.5" width="11.9" height="1.45" fill="url(#dR)" opacity=".92"/><rect x="1124" y="456" width="2.4" height="14" fill="#00106a" opacity=".8"/>
</g>
<rect x="864" y="789.0" width="522" height="1.6" fill="#1a78e0"/>
<g clip-path="url(#csR)">
<path d="M865 125.0 H1386" stroke="#fff" stroke-opacity=".55" stroke-width="1" stroke-dasharray="1 3.05"/>
<path d="M865 149.1 H1386" stroke="#fff" stroke-opacity=".55" stroke-width="1" stroke-dasharray="1 3.05"/>
<path d="M865 173.3 H1386" stroke="#fff" stroke-opacity=".55" stroke-width="1" stroke-dasharray="1 3.05"/>
<path d="M865 197.4 H1386" stroke="#fff" stroke-opacity=".55" stroke-width="1" stroke-dasharray="1 3.05"/>
<path d="M865 221.6 H1386" stroke="#fff" stroke-opacity=".55" stroke-width="1" stroke-dasharray="1 3.05"/>
<path d="M865 245.7 H1386" stroke="#fff" stroke-opacity=".55" stroke-width="1" stroke-dasharray="1 3.05"/>
<path d="M865 269.8 H1386" stroke="#fff" stroke-opacity=".55" stroke-width="1" stroke-dasharray="1 3.05"/>
<path d="M865 294.0 H1386" stroke="#fff" stroke-opacity=".55" stroke-width="1" stroke-dasharray="1 3.05"/>
<path d="M865 318.1 H1386" stroke="#fff" stroke-opacity=".55" stroke-width="1" stroke-dasharray="1 3.05"/>
<path d="M865 342.3 H1386" stroke="#fff" stroke-opacity=".55" stroke-width="1" stroke-dasharray="1 3.05"/>
<path d="M865 366.4 H1386" stroke="#fff" stroke-opacity=".55" stroke-width="1" stroke-dasharray="1 3.05"/>
<path d="M865 390.5 H1386" stroke="#fff" stroke-opacity=".55" stroke-width="1" stroke-dasharray="1 3.05"/>
<path d="M865 414.7 H1386" stroke="#fff" stroke-opacity=".55" stroke-width="1" stroke-dasharray="1 3.05"/>
<path d="M865 438.8 H1386" stroke="#fff" stroke-opacity=".55" stroke-width="1" stroke-dasharray="1 3.05"/>
<path d="M920.5 104 V455" stroke="#fff" stroke-opacity=".55" stroke-width="1" stroke-dasharray="1 3"/>
<path d="M1011.9 104 V455" stroke="#fff" stroke-opacity=".55" stroke-width="1" stroke-dasharray="1 3"/>
<path d="M1103.3 104 V455" stroke="#fff" stroke-opacity=".55" stroke-width="1" stroke-dasharray="1 3"/>
<path d="M1194.7 104 V455" stroke="#fff" stroke-opacity=".55" stroke-width="1" stroke-dasharray="1 3"/>
<path d="M1286.1 104 V455" stroke="#fff" stroke-opacity=".55" stroke-width="1" stroke-dasharray="1 3"/>
<path d="M1377.5 104 V455" stroke="#fff" stroke-opacity=".55" stroke-width="1" stroke-dasharray="1 3"/>
<path d="M864.0 306.0 L864.0 306.1 L864.8 294.4 L865.2 295.3 L865.9 304.6 L866.6 298.8 L867.3 299.2 L868.1 304.2 L869.0 297.5 L869.6 298.3 L870.4 304.9 L871.2 298.3 L871.7 299.0 L872.3 304.5 L873.0 296.3 L873.5 296.8 L874.3 305.5 L874.9 294.4 L875.5 295.5 L876.3 306.4 L876.9 296.4 L877.5 296.6 L878.4 304.4 L878.9 298.5 L879.5 299.3 L880.3 305.3 L881.2 297.7 L881.7 298.0 L882.4 305.4 L883.0 299.7 L883.5 301.1 L884.3 304.1 L884.9 297.0 L885.4 297.6 L886.2 304.8 L886.8 301.3 L887.4 301.4 L887.9 304.8 L888.4 299.6 L888.7 300.4 L889.4 305.3 L890.1 294.9 L890.8 296.2 L891.4 306.3 L892.1 300.6 L892.5 301.2 L893.1 305.9 L894.0 297.7 L894.4 297.8 L895.2 304.3 L895.8 297.9 L896.3 298.8 L897.0 304.8 L897.9 301.8 L898.5 303.2 L899.1 304.0 L899.7 301.1 L900.2 302.0 L901.0 305.1 L901.8 293.3 L902.5 294.5 L903.2 304.0 L903.9 299.7 L904.5 300.1 L905.2 304.9 L906.0 297.2 L906.7 298.4 L907.6 305.3 L908.1 300.0 L908.8 301.2 L909.3 304.2 L909.9 300.9 L910.5 301.1 L911.3 305.2 L911.9 297.9 L912.4 298.1 L913.1 305.2 L913.8 296.3 L914.4 297.6 L915.1 305.7 L915.8 297.8 L916.3 298.4 L917.2 304.9 L918.0 300.4 L918.7 301.8 L919.2 306.2 L919.7 300.5 L920.3 301.7 L921.0 306.1 L921.8 297.4 L922.2 298.4 L923.0 306.1 L923.8 300.1 L924.3 301.2 L925.1 305.4 L925.7 297.8 L926.1 298.4 L926.7 305.9 L927.4 298.5 L928.1 299.0 L928.9 305.9 L929.5 301.1 L929.9 301.4 L930.5 304.7 L931.4 298.3 L931.9 299.4 L932.7 306.4 L933.3 298.3 L933.9 299.7 L934.7 306.8 L935.3 297.8 L935.8 298.6 L936.5 304.5 L937.3 298.2 L937.7 299.0 L938.5 305.1 L939.3 298.0 L939.8 298.5 L940.6 304.6 L941.4 298.8 L941.8 300.0 L942.6 306.3 L943.2 301.1 L943.6 301.9 L944.3 304.9 L945.2 297.6 L945.8 298.8 L946.4 306.0 L947.2 301.0 L947.6 301.3 L948.2 305.8 L948.7 301.8 L949.3 303.0 L949.8 304.9 L950.7 299.3 L951.1 299.7 L951.9 304.3 L952.5 300.2 L953.1 301.7 L953.9 305.5 L954.6 299.7 L954.9 300.6 L955.5 306.9 L956.4 297.1 L957.1 297.7 L957.7 304.4 L958.4 299.6 L959.0 301.0 L959.7 305.8 L960.4 298.2 L961.0 299.4 L961.7 305.5 L962.2 301.6 L962.8 302.1 L963.6 305.7 L964.2 299.2 L964.8 299.4 L965.4 304.3 L965.9 302.0 L966.5 303.3 L967.3 304.7 L968.1 301.9 L968.7 302.3 L969.5 305.5 L970.0 297.6 L970.7 298.4 L971.5 306.6 L972.1 301.7 L972.5 302.3 L973.2 305.9 L973.7 298.2 L974.1 299.5 L974.8 306.3 L975.6 300.2 L976.1 301.4 L976.8 304.1 L977.6 299.7 L978.2 300.9 L978.8 304.2 L979.6 298.6 L980.1 299.1 L980.7 305.6 L981.6 294.0 L982.1 294.9 L982.7 305.5 L983.3 298.3 L983.8 299.6 L984.6 306.8 L985.2 293.2 L985.7 294.1 L986.4 304.6 L987.1 297.8 L987.6 298.2 L988.3 306.1 L988.9 298.0 L989.6 298.0 L990.4 305.6 L990.9 297.1 L991.5 297.9 L992.1 305.8 L992.8 297.2 L993.3 297.4 L994.1 305.8 L994.8 298.7 L995.1 300.2 L996.0 304.6 L996.5 301.5 L997.2 303.0 L997.8 304.4 L998.5 298.2 L998.9 299.6 L999.7 304.4 L1000.2 299.8 L1000.9 300.8 L1001.7 306.9 L1002.5 300.5 L1003.0 300.7 L1003.5 306.1 L1004.4 298.0 L1004.7 299.3 L1005.3 305.6 L1006.0 297.1 L1006.5 297.6 L1007.2 305.7 L1007.9 300.3 L1008.3 300.4 L1009.2 305.7 L1009.9 298.0 L1010.5 298.5 L1011.2 305.8 L1011.9 301.1 L1012.6 302.1 L1013.2 306.4 L1013.8 296.9 L1014.5 297.1 L1015.3 305.9 L1016.2 297.1 L1016.7 297.2 L1017.3 304.3 L1018.1 297.4 L1018.7 297.8 L1019.3 304.6 L1020.0 297.3 L1020.5 298.3 L1021.2 305.7 L1021.9 297.6 L1022.3 298.3 L1023.1 306.5 L1023.9 301.5 L1024.3 302.0 L1024.9 306.2 L1025.6 297.3 L1026.1 298.5 L1026.8 305.2 L1027.7 296.3 L1028.3 296.9 L1029.0 305.1 L1029.9 297.3 L1030.5 297.8 L1031.0 305.6 L1031.6 298.7 L1032.1 298.8 L1032.8 305.5 L1033.5 295.6 L1033.9 296.9 L1034.8 306.6 L1035.5 300.9 L1036.2 301.8 L1036.8 304.9 L1037.3 298.2 L1037.9 299.7 L1038.7 304.3 L1039.6 299.5 L1040.2 300.2 L1040.8 305.6 L1041.3 298.1 L1041.8 299.4 L1042.6 305.7 L1043.3 298.4 L1043.8 299.2 L1044.5 306.6 L1045.2 299.6 L1045.5 300.4 L1046.1 305.4 L1046.8 291.9 L1047.1 292.0 L1047.9 305.4 L1048.8 298.2 L1049.4 299.6 L1050.0 305.7 L1050.7 298.8 L1051.4 299.6 L1052.0 306.0 L1052.6 302.0 L1053.2 302.2 L1054.1 305.7 L1054.8 300.4 L1055.4 301.6 L1056.1 306.8 L1056.7 300.9 L1057.1 302.0 L1057.9 304.6 L1058.4 300.1 L1058.9 301.1 L1059.6 304.3 L1060.2 300.4 L1060.9 300.4 L1061.5 304.2 L1062.2 301.2 L1062.5 302.4 L1063.4 305.9 L1064.0 297.2 L1064.4 298.5 L1064.9 305.2 L1065.5 298.9 L1066.0 299.3 L1066.7 304.6 L1067.3 301.4 L1067.8 302.1 L1068.7 304.8 L1069.2 298.1 L1069.7 298.6 L1070.4 304.5 L1071.1 298.1 L1071.5 298.3 L1072.3 306.0 L1072.9 301.8 L1073.4 302.2 L1074.1 304.7 L1074.9 297.3 L1075.4 298.1 L1076.3 305.4 L1077.0 299.4 L1077.5 299.6 L1078.2 306.1 L1078.7 299.6 L1079.3 299.8 L1080.0 306.4 L1080.6 299.6 L1081.3 300.4 L1081.8 305.3 L1082.5 297.3 L1082.9 298.5 L1083.5 306.5 L1084.3 300.8 L1085.0 302.3 L1085.7 306.1 L1086.5 299.2 L1086.8 300.7 L1087.3 304.6 L1087.9 300.7 L1088.3 302.1 L1089.0 306.7 L1089.9 301.1 L1090.3 302.6 L1091.0 305.5 L1091.7 297.6 L1092.1 298.8 L1092.8 304.1 L1093.5 299.4 L1093.8 300.7 L1094.4 306.4 L1094.9 300.6 L1095.3 301.9 L1096.0 305.6 L1096.8 301.1 L1097.2 302.0 L1097.8 304.8 L1098.4 297.2 L1098.8 297.3 L1099.6 304.4 L1100.2 298.8 L1100.8 299.9 L1101.4 306.5 L1102.1 301.9 L1102.5 303.4 L1103.3 304.1 L1104.0 300.0 L1104.5 300.3 L1105.2 304.9 L1105.7 298.0 L1106.0 298.8 L1106.6 306.7 L1107.3 294.0 L1107.9 295.1 L1108.7 305.8 L1109.4 300.5 L1109.9 301.2 L1110.7 304.8 L1111.4 300.2 L1111.9 300.4 L1112.8 305.2 L1113.6 298.9 L1114.0 299.2 L1114.7 306.5 L1115.3 295.1 L1115.7 296.4 L1116.3 307.0 L1116.9 300.4 L1117.4 300.6 L1118.1 304.1 L1118.9 298.4 L1119.3 298.8 L1120.2 304.3 L1121.1 300.1 L1121.6 300.8 L1122.2 304.8 L1123.0 296.6 L1123.6 297.7 L1124.4 305.3 L1125.3 300.4 L1125.9 300.9 L1126.4 306.1 L1127.2 301.8 L1127.8 303.2 L1128.4 306.8 L1129.1 296.1 L1129.7 296.8 L1130.5 305.3 L1131.0 301.2 L1131.4 302.3 L1132.3 304.6 L1132.9 292.5 L1133.3 292.9 L1134.1 305.8 L1134.8 301.9 L1135.2 302.3 L1135.8 306.4 L1136.6 296.4 L1137.1 297.0 L1137.7 304.5 L1138.4 299.7 L1138.7 300.2 L1139.3 306.5 L1139.9 299.8 L1140.3 300.4 L1140.8 304.7 L1141.5 301.3 L1142.1 302.5 L1142.9 306.3 L1143.6 298.6 L1144.0 298.9 L1144.7 305.5 L1145.2 295.4 L1145.6 296.6 L1146.4 305.4 L1147.2 297.4 L1147.6 298.8 L1148.1 305.0 L1148.9 297.4 L1149.3 298.7 L1149.8 306.2 L1150.6 299.9 L1150.9 300.2 L1151.5 304.5 L1152.1 297.1 L1152.7 297.7 L1153.2 304.4 L1154.0 301.4 L1154.7 302.8 L1155.4 304.4 L1156.1 299.7 L1156.6 300.3 L1157.2 305.6 L1157.9 299.7 L1158.4 300.4 L1159.3 306.5 L1159.9 299.8 L1160.3 300.9 L1160.8 306.0 L1161.7 300.1 L1162.0 301.0 L1162.7 305.5 L1163.5 298.2 L1163.8 298.8 L1164.5 305.1 L1165.1 299.1 L1165.5 300.5 L1166.1 306.7 L1166.8 297.4 L1167.3 298.8 L1168.1 305.8 L1168.9 300.8 L1169.4 301.6 L1170.2 304.7 L1171.0 299.8 L1171.5 299.9 L1172.2 305.9 L1172.9 298.2 L1173.5 299.0 L1174.1 304.3 L1174.8 299.5 L1175.2 300.5 L1175.9 305.2 L1176.6 299.4 L1177.0 300.2 L1177.8 304.5 L1178.4 298.1 L1179.1 298.8 L1179.9 304.0 L1180.6 299.0 L1181.2 299.7 L1181.7 304.3 L1182.3 299.5 L1182.6 300.6 L1183.5 306.3 L1184.1 297.9 L1184.7 298.1 L1185.5 304.7 L1186.2 299.1 L1186.7 300.5 L1187.2 304.3 L1188.0 297.9 L1188.5 298.0 L1189.3 304.3 L1189.8 300.3 L1190.5 301.5 L1191.2 306.8 L1192.0 297.1 L1192.3 298.0 L1192.9 306.8 L1193.7 301.0 L1194.1 302.1 L1194.6 306.8 L1195.2 297.0 L1195.8 298.2 L1196.5 304.4 L1197.3 299.9 L1197.7 300.6 L1198.5 306.0 L1199.1 300.4 L1199.5 301.8 L1200.1 305.7 L1200.6 297.7 L1200.9 298.1 L1201.5 305.1 L1202.1 297.6 L1202.5 298.4 L1203.4 304.5 L1204.0 297.9 L1204.4 298.2 L1205.2 304.5 L1206.0 295.8 L1206.3 296.5 L1207.0 305.6 L1207.7 298.8 L1208.1 300.2 L1208.6 304.7 L1209.1 299.1 L1209.8 300.6 L1210.7 306.7 L1211.4 293.8 L1211.8 295.2 L1212.4 305.9 L1212.9 298.8 L1213.6 299.0 L1214.2 306.9 L1214.8 299.2 L1215.2 299.7 L1215.9 305.6 L1216.4 299.4 L1216.9 300.1 L1217.7 304.3 L1218.5 298.0 L1219.1 299.2 L1219.7 304.5 L1220.3 299.6 L1221.0 300.1 L1221.6 306.2 L1222.3 301.1 L1222.8 301.2 L1223.3 306.4 L1223.8 293.8 L1224.4 294.7 L1225.1 305.0 L1225.6 301.6 L1226.3 302.1 L1227.0 305.5 L1227.6 297.2 L1228.1 297.4 L1228.9 306.0 L1229.8 301.0 L1230.3 302.5 L1231.1 304.4 L1231.6 300.9 L1232.3 301.5 L1233.1 306.0 L1234.0 301.1 L1234.5 302.5 L1235.1 304.0 L1235.6 299.9 L1236.1 300.3 L1236.9 305.3 L1237.6 297.6 L1237.9 298.5 L1238.5 305.5 L1239.1 300.4 L1239.5 301.4 L1240.1 304.9 L1240.8 299.1 L1241.3 299.4 L1242.2 305.1 L1242.9 300.6 L1243.5 301.0 L1244.1 305.3 L1244.9 298.0 L1245.3 299.0 L1246.1 304.8 L1246.9 298.7 L1247.3 299.9 L1248.1 306.3 L1248.9 300.1 L1249.5 301.3 L1250.3 305.9 L1250.9 298.8 L1251.4 300.1 L1252.2 306.5 L1253.1 301.6 L1253.7 302.4 L1254.6 304.9 L1255.5 298.5 L1255.9 299.9 L1256.8 306.2 L1257.3 298.8 L1257.8 299.2 L1258.4 304.8 L1259.3 301.9 L1259.7 302.4 L1260.6 304.3 L1261.1 299.8 L1261.6 300.6 L1262.2 306.8 L1263.1 301.8 L1263.7 302.7 L1264.2 306.9 L1264.9 295.4 L1265.3 296.7 L1265.9 304.2 L1266.5 301.8 L1267.2 303.2 L1267.7 305.5 L1268.5 298.0 L1269.1 299.5 L1269.6 305.4 L1270.1 298.8 L1270.8 300.0 L1271.6 304.5 L1272.5 301.0 L1273.0 301.7 L1273.7 305.3 L1274.6 299.9 L1275.0 300.3 L1275.7 306.2 L1276.2 301.0 L1276.8 301.1 L1277.5 304.2 L1278.1 298.4 L1278.5 299.0 L1279.1 305.4 L1279.8 294.7 L1280.4 295.9 L1281.1 305.3 L1281.9 300.3 L1282.5 301.6 L1283.1 305.3 L1283.9 300.1 L1284.2 300.9 L1284.9 306.5 L1285.5 300.3 L1286.0 301.1 L1286.8 304.1 L1287.4 300.7 L1288.1 301.1 L1288.8 304.9 L1289.3 295.3 L1289.7 296.2 L1290.3 305.1 L1291.0 299.2 L1291.4 300.0 L1292.0 304.1 L1292.7 300.3 L1293.1 301.1 L1293.8 306.7 L1294.6 299.8 L1295.2 300.6 L1295.7 305.1 L1296.2 301.9 L1296.8 302.8 L1297.4 307.0 L1298.0 299.0 L1298.7 299.8 L1299.4 306.2 L1299.9 299.6 L1300.3 300.2 L1300.8 304.6 L1301.4 301.5 L1301.8 303.0 L1302.5 304.7 L1303.2 299.5 L1303.9 300.0 L1304.7 304.3 L1305.3 295.0 L1306.0 295.1 L1306.6 306.4 L1307.5 300.6 L1308.2 300.6 L1309.1 304.4 L1309.8 297.1 L1310.3 297.7 L1311.0 306.8 L1311.8 298.0 L1312.3 298.2 L1313.0 304.4 L1313.8 301.6 L1314.2 302.4 L1315.0 305.0 L1315.8 300.2 L1316.5 300.3 L1317.1 305.6 L1317.7 299.7 L1318.0 300.6 L1318.5 304.7 L1319.0 301.1 L1319.5 302.2 L1320.2 306.2 L1321.0 299.0 L1321.6 299.1 L1322.3 304.5 L1323.0 298.5 L1323.5 299.7 L1324.3 305.3 L1325.2 296.9 L1325.9 297.3 L1326.6 306.7 L1327.2 301.2 L1327.7 302.2 L1328.3 305.8 L1328.8 295.7 L1329.2 296.7 L1329.8 305.8 L1330.5 294.9 L1331.0 295.9 L1331.6 304.3 L1332.2 298.6 L1332.9 299.1 L1333.5 304.8 L1334.3 296.1 L1334.8 296.7 L1335.4 305.6 L1335.9 301.1 L1336.5 301.5 L1337.1 306.2 L1337.9 300.6 L1338.5 301.6 L1339.0 306.6 L1339.8 297.9 L1340.2 298.1 L1341.0 305.0 L1341.8 299.2 L1342.2 300.3 L1342.7 306.8 L1343.6 299.8 L1344.2 300.2 L1344.8 306.2 L1345.6 299.1 L1346.1 299.2 L1346.8 305.9 L1347.5 298.7 L1347.9 299.8 L1348.8 304.4 L1349.3 300.2 L1349.6 301.1 L1350.1 306.9 L1350.9 301.0 L1351.5 301.5 L1352.3 306.8 L1353.0 299.0 L1353.4 299.5 L1354.3 306.6 L1355.0 300.3 L1355.3 301.4 L1356.1 306.3 L1356.8 299.2 L1357.3 300.6 L1358.0 306.4 L1358.6 300.4 L1359.1 301.6 L1359.8 304.3 L1360.7 299.9 L1361.1 300.5 L1361.7 304.1 L1362.2 301.0 L1362.7 302.4 L1363.3 305.6 L1363.9 299.1 L1364.3 299.5 L1365.0 306.9 L1365.5 299.2 L1366.1 300.4 L1367.0 304.1 L1367.6 301.6 L1368.0 302.5 L1368.7 304.5 L1369.2 301.9 L1369.8 302.3 L1370.3 304.2 L1371.1 297.9 L1371.4 298.1 L1372.0 306.0 L1372.7 295.0 L1373.1 295.3 L1373.9 306.1 L1374.4 301.8 L1375.0 303.1 L1375.6 306.2 L1376.2 298.4 L1376.8 298.8 L1377.4 306.8 L1377.9 299.5 L1378.2 299.7 L1379.1 306.2 L1379.7 297.3 L1380.0 298.5 L1380.7 304.4 L1381.5 295.0 L1382.0 295.0 L1382.7 304.2 L1383.3 298.4 L1383.8 299.2 L1384.4 306.6 L1385.3 299.6 L1385.6 300.1 L1386.1 306.7 L1386.8 299.7 L1387.4 301.0 L1386.0 306.0 Z" fill="url(#frR)" /><rect x="864" y="305" width="522" height="150" fill="url(#sgR)"/><defs><linearGradient id="npR" gradientUnits="userSpaceOnUse" x1="0" y1="182" x2="0" y2="312"><stop offset="0" stop-color="#00248c"/><stop offset="0.2" stop-color="#002eaa"/><stop offset="0.8" stop-color="#003cc4"/><stop offset="0.93" stop-color="#0a84d0"/><stop offset="1" stop-color="#10d040"/></linearGradient><linearGradient id="wsR" gradientUnits="userSpaceOnUse" x1="0" y1="238" x2="0" y2="314"><stop offset="0" stop-color="#0038b8"/><stop offset="0.2" stop-color="#0a60e8"/><stop offset="0.6" stop-color="#0a84f0"/><stop offset="0.85" stop-color="#10b8a0"/><stop offset="1" stop-color="#10d830"/></linearGradient><linearGradient id="rcR" gradientUnits="userSpaceOnUse" x1="0" y1="252" x2="0" y2="330"><stop offset="0" stop-color="#18c850"/><stop offset="0.06" stop-color="#80a010"/><stop offset="0.14" stop-color="#d83408"/><stop offset="0.3" stop-color="#ec2406"/><stop offset="0.8" stop-color="#f42404"/><stop offset="1" stop-color="#ff3000"/></linearGradient></defs><path d="M1075.5 307.0 L1077.2 285.0 L1079.4 225.0 L1081.3 183.0 L1082.8 190.0 L1084.6 182.0 L1086.5 189.0 L1088.6 183.0 L1090.4 225.0 L1092.3 285.0 L1094.0 307.0 Z" fill="#00288c" /><path d="M1076.5 312.0 L1078.0 290.0 L1080.0 230.0 L1081.7 188.0 L1083.0 195.0 L1084.6 187.0 L1086.3 194.0 L1088.2 188.0 L1089.8 230.0 L1091.5 290.0 L1093.0 312.0 Z" fill="url(#npR)" /><path d="M1083.2 205 V300 M1086.6 215 V296" stroke="#001e78" stroke-width="1.3" stroke-opacity=".7"/><path d="M1157.9 307.0 L1160.0 285.0 L1162.5 257.0 L1165.1 247.0 L1167.7 238.7 L1169.7 245.0 L1171.8 238.0 L1174.8 249.0 L1177.4 251.0 L1179.9 244.0 L1182.5 246.5 L1185.6 243.0 L1188.1 252.0 L1190.7 241.5 L1193.8 248.0 L1197.4 249.5 L1200.6 252.0 L1202.0 261.0 L1203.6 272.6 L1205.0 263.0 L1206.5 255.7 L1209.2 257.0 L1212.2 254.0 L1215.3 261.0 L1218.4 263.0 L1221.5 269.0 L1224.5 275.0 L1227.1 280.0 L1229.7 286.0 L1231.7 276.0 L1233.8 271.0 L1236.3 269.0 L1239.4 256.6 L1242.0 262.0 L1243.5 277.0 L1245.0 293.0 L1247.6 307.0 Z" fill="#0038b8" /><path d="M1159.0 312.0 L1161.0 290.0 L1163.5 262.0 L1166.0 252.0 L1168.6 243.7 L1170.5 250.0 L1172.6 243.0 L1175.5 254.0 L1178.0 256.0 L1180.5 249.0 L1183.0 251.5 L1186.0 248.0 L1188.5 257.0 L1191.0 246.5 L1194.0 253.0 L1197.5 254.5 L1200.7 257.0 L1202.0 266.0 L1203.6 277.6 L1205.0 268.0 L1206.4 260.7 L1209.0 262.0 L1212.0 259.0 L1215.0 266.0 L1218.0 268.0 L1221.0 274.0 L1224.0 280.0 L1226.5 285.0 L1229.0 291.0 L1231.0 281.0 L1233.0 276.0 L1235.5 274.0 L1238.5 261.6 L1241.0 267.0 L1242.5 282.0 L1244.0 298.0 L1246.5 312.0 Z" fill="url(#wsR)" /><path d="M1171.1 315.5 L1173.3 295.5 L1176.6 277.5 L1181.0 265.5 L1186.5 257.5 L1193.1 254.0 L1198.6 255.5 L1201.3 261.5 L1203.5 275.5 L1205.8 263.5 L1208.5 260.0 L1212.9 260.5 L1217.3 265.5 L1221.7 272.5 L1226.1 279.5 L1229.4 286.5 L1232.2 295.5 L1233.8 315.5 Z" fill="#18c840" /><path d="M1174.0 320.0 L1176.0 300.0 L1179.0 282.0 L1183.0 270.0 L1188.0 262.0 L1194.0 258.5 L1199.0 260.0 L1201.5 266.0 L1203.5 280.0 L1205.5 268.0 L1208.0 264.5 L1212.0 265.0 L1216.0 270.0 L1220.0 277.0 L1224.0 284.0 L1227.0 291.0 L1229.5 300.0 L1231.0 320.0 Z" fill="url(#rcR)" /><rect x="1181" y="281.0" width="1.2" height="49.0" fill="#8a1c08" fill-opacity=".32"/><rect x="1184.5" y="272.6" width="1.2" height="57.4" fill="#8a1c08" fill-opacity=".32"/><rect x="1188" y="267.0" width="1.2" height="63.0" fill="#8a1c08" fill-opacity=".32"/><rect x="1192" y="264.7" width="1.2" height="65.3" fill="#8a1c08" fill-opacity=".32"/><rect x="1196" y="264.1" width="1.2" height="65.9" fill="#8a1c08" fill-opacity=".32"/><rect x="1199.5" y="266.2" width="1.2" height="63.8" fill="#8a1c08" fill-opacity=".32"/><rect x="1207" y="270.9" width="1.2" height="59.1" fill="#8a1c08" fill-opacity=".32"/><rect x="1210" y="269.8" width="1.2" height="60.2" fill="#8a1c08" fill-opacity=".32"/><rect x="1213" y="271.2" width="1.2" height="58.8" fill="#8a1c08" fill-opacity=".32"/><rect x="1216" y="275.0" width="1.2" height="55.0" fill="#8a1c08" fill-opacity=".32"/><rect x="1219" y="280.2" width="1.2" height="49.8" fill="#8a1c08" fill-opacity=".32"/><rect x="1222" y="285.5" width="1.2" height="44.5" fill="#8a1c08" fill-opacity=".32"/><rect x="1225" y="291.3" width="1.2" height="38.7" fill="#8a1c08" fill-opacity=".32"/><rect x="864" y="316.5" width="522" height="138.5" filter="url(#streak)" fill="#000" opacity=".13"/><defs><linearGradient id="usH" x1="0" y1="0" x2="1" y2="0"><stop offset="0" stop-color="#fff" stop-opacity="0"/><stop offset="0.22" stop-color="#fff" stop-opacity="1"/><stop offset="0.78" stop-color="#fff" stop-opacity="1"/><stop offset="1" stop-color="#fff" stop-opacity="0"/></linearGradient><linearGradient id="usV" x1="0" y1="0" x2="0" y2="1"><stop offset="0" stop-color="#ff2000" stop-opacity=".95"/><stop offset="0.1" stop-color="#ff3800" stop-opacity=".62"/><stop offset="0.24" stop-color="#ff5000" stop-opacity=".36"/><stop offset="0.5" stop-color="#ff5a00" stop-opacity=".28"/><stop offset="0.8" stop-color="#e03000" stop-opacity=".22"/><stop offset="1" stop-color="#c02000" stop-opacity="0"/></linearGradient><mask id="usM" maskUnits="userSpaceOnUse" x="1166" y="318" width="74" height="140"><rect x="1166" y="318" width="74" height="140" fill="url(#usH)"/></mask></defs><rect x="1166" y="318" width="74" height="135" fill="url(#usV)" mask="url(#usM)"/><path d="M864.0 309.3 L865.5 312.7 L867.0 310.5 L868.5 306.3 L870.0 306.5 L871.5 306.6 L873.0 313.7 L874.5 313.9 L876.0 311.5 L877.5 313.7 L879.0 311.2 L880.5 308.1 L882.0 308.4 L883.5 310.9 L885.0 312.8 L886.5 309.0 L888.0 313.4 L889.5 312.1 L891.0 310.1 L892.5 312.2 L894.0 312.8 L895.5 308.0 L897.0 310.0 L898.5 311.7 L900.0 308.4 L901.5 307.4 L903.0 307.2 L904.5 308.1 L906.0 308.5 L907.5 310.2 L909.0 313.7 L910.5 311.6 L912.0 314.1 L913.5 308.4 L915.0 312.4 L916.5 313.5 L918.0 311.1 L919.5 314.8 L921.0 310.4 L922.5 309.6 L924.0 307.8 L925.5 311.5 L927.0 307.7 L928.5 313.6 L930.0 303.0 L931.5 308.7 L933.0 308.0 L934.5 308.8 L936.0 307.7 L937.5 307.6 L939.0 306.4 L940.5 313.8 L942.0 309.1 L943.5 308.1 L945.0 307.0 L946.5 310.9 L948.0 311.3 L949.5 307.9 L951.0 307.1 L952.5 314.0 L954.0 311.8 L955.5 314.8 L957.0 309.0 L958.5 309.9 L960.0 310.6 L961.5 313.8 L963.0 309.5 L964.5 313.7 L966.0 312.3 L967.5 309.7 L969.0 314.0 L970.5 310.9 L972.0 310.6 L973.5 313.8 L975.0 302.4 L976.5 306.8 L978.0 306.8 L979.5 311.5 L981.0 309.8 L982.5 306.4 L984.0 308.5 L985.5 308.4 L987.0 314.3 L988.5 309.6 L990.0 309.6 L991.5 302.1 L993.0 313.8 L994.5 311.3 L996.0 314.4 L997.5 314.7 L999.0 314.1 L1000.5 307.6 L1002.0 307.1 L1003.5 314.8 L1005.0 309.6 L1006.5 313.0 L1008.0 307.3 L1009.5 308.9 L1011.0 306.2 L1012.5 308.2 L1014.0 312.2 L1015.5 310.3 L1017.0 313.9 L1018.5 313.4 L1020.0 307.2 L1021.5 307.1 L1023.0 309.8 L1024.5 313.0 L1026.0 313.2 L1027.5 307.1 L1029.0 308.7 L1030.5 314.4 L1032.0 313.5 L1033.5 310.6 L1035.0 310.2 L1036.5 311.8 L1038.0 312.1 L1039.5 307.8 L1041.0 309.8 L1042.5 312.6 L1044.0 312.1 L1045.5 302.9 L1047.0 309.7 L1048.5 312.8 L1050.0 309.7 L1051.5 311.6 L1053.0 308.5 L1054.5 304.6 L1056.0 304.1 L1057.5 308.0 L1059.0 310.2 L1060.5 306.9 L1062.0 305.8 L1063.5 307.3 L1065.0 305.9 L1066.5 309.3 L1068.0 307.4 L1069.5 312.3 L1071.0 312.4 L1072.5 304.0 L1074.0 312.6 L1075.5 314.6 L1077.0 304.7 L1078.5 275.0 L1080.0 230.0 L1081.5 192.9 L1083.0 195.0 L1084.5 187.5 L1086.0 192.8 L1087.5 190.2 L1089.0 209.0 L1090.5 254.7 L1092.0 297.3 L1093.5 306.8 L1095.0 311.3 L1096.5 307.7 L1098.0 306.7 L1099.5 306.1 L1101.0 309.0 L1102.5 309.6 L1104.0 307.4 L1105.5 308.8 L1107.0 312.0 L1108.5 307.7 L1110.0 309.1 L1111.5 311.2 L1113.0 306.4 L1114.5 312.2 L1116.0 314.8 L1117.5 310.9 L1119.0 312.5 L1120.5 310.9 L1122.0 307.9 L1123.5 310.7 L1125.0 311.8 L1126.5 313.3 L1128.0 306.8 L1129.5 307.2 L1131.0 305.4 L1132.5 310.7 L1134.0 308.8 L1135.5 307.2 L1137.0 307.4 L1138.5 308.3 L1140.0 313.6 L1141.5 315.0 L1143.0 308.5 L1144.5 310.1 L1146.0 307.2 L1147.5 306.4 L1149.0 309.0 L1150.5 310.0 L1152.0 311.8 L1153.5 310.5 L1155.0 313.1 L1156.5 314.1 L1158.0 307.2 L1159.5 306.5 L1161.0 290.0 L1162.5 273.2 L1164.0 260.0 L1165.5 254.0 L1167.0 248.8 L1168.5 244.0 L1170.0 248.3 L1171.5 246.7 L1173.0 244.5 L1174.5 250.2 L1176.0 254.4 L1177.5 255.6 L1179.0 253.2 L1180.5 249.0 L1182.0 250.5 L1183.5 250.9 L1185.0 249.2 L1186.5 249.8 L1188.0 255.2 L1189.5 252.8 L1191.0 246.5 L1192.5 249.8 L1194.0 253.0 L1195.5 253.6 L1197.0 254.3 L1198.5 255.3 L1200.0 256.5 L1201.5 262.5 L1203.0 273.3 L1204.5 271.4 L1206.0 262.8 L1207.5 261.2 L1209.0 262.0 L1210.5 260.5 L1212.0 259.0 L1213.5 262.5 L1215.0 266.0 L1216.5 267.0 L1218.0 268.0 L1219.5 271.0 L1221.0 274.0 L1222.5 277.0 L1224.0 280.0 L1225.5 283.0 L1227.0 286.2 L1228.5 289.8 L1230.0 286.0 L1231.5 279.8 L1233.0 276.0 L1234.5 274.8 L1236.0 271.9 L1237.5 265.7 L1239.0 262.7 L1240.5 265.9 L1242.0 277.0 L1243.5 292.7 L1245.0 303.6 L1246.5 312.0 L1248.0 308.5 L1249.5 312.8 L1251.0 306.7 L1252.5 312.1 L1254.0 308.7 L1255.5 306.7 L1257.0 310.4 L1258.5 306.5 L1260.0 309.8 L1261.5 312.0 L1263.0 312.6 L1264.5 302.0 L1266.0 314.3 L1267.5 313.6 L1269.0 310.1 L1270.5 313.4 L1272.0 315.0 L1273.5 314.8 L1275.0 309.6 L1276.5 307.7 L1278.0 312.3 L1279.5 307.0 L1281.0 311.4 L1282.5 308.9 L1284.0 313.6 L1285.5 312.9 L1287.0 314.5 L1288.5 308.0 L1290.0 304.7 L1291.5 305.9 L1293.0 309.9 L1294.5 308.2 L1296.0 314.1 L1297.5 311.0 L1299.0 306.8 L1300.5 313.1 L1302.0 310.0 L1303.5 311.1 L1305.0 307.4 L1306.5 306.2 L1308.0 308.1 L1309.5 311.9 L1311.0 310.5 L1312.5 313.2 L1314.0 313.4 L1315.5 301.7 L1317.0 314.1 L1318.5 309.3 L1320.0 309.8 L1321.5 313.4 L1323.0 311.7 L1324.5 310.1 L1326.0 313.9 L1327.5 314.0 L1329.0 311.0 L1330.5 307.3 L1332.0 312.2 L1333.5 310.9 L1335.0 314.2 L1336.5 308.7 L1338.0 310.2 L1339.5 314.4 L1341.0 307.5 L1342.5 307.0 L1344.0 308.6 L1345.5 313.0 L1347.0 307.6 L1348.5 311.3 L1350.0 311.9 L1351.5 310.2 L1353.0 313.3 L1354.5 308.7 L1356.0 306.4 L1357.5 314.1 L1359.0 311.6 L1360.5 309.6 L1362.0 304.3 L1363.5 307.4 L1365.0 303.2 L1366.5 308.0 L1368.0 309.5 L1369.5 303.5 L1371.0 308.7 L1372.5 310.6 L1374.0 301.3 L1375.5 307.3 L1377.0 307.2 L1378.5 308.3 L1380.0 312.2 L1381.5 313.5 L1383.0 307.6 L1384.5 312.5 L1386.0 307.2 L1387.5 308.1" fill="none" stroke="#f6f31a" stroke-width="1.25" stroke-linejoin="round"/>
</g>
<g clip-path="url(#csR)">
<path d="M873.7 125 H889" stroke="#f4f400" stroke-width="2.2"/>
<text x="894.0" y="128.5" text-anchor="start" font-weight="400" fill="#c4c4c4" font-size="12" stroke="#c4c4c4" stroke-width=".3">Sweep 2.39GHz-2.5GHz, RBW:488.8kHz, peak:3192, POI:5.98%, Q:1, Swp:9.2/s, Seg:3, Acq</text>
</g>
<text x="1125.0" y="112.9" text-anchor="middle" font-weight="700" fill="#cbcbcb" font-size="12" >RTBW:100MHz (Max)</text>
<path d="M896.4 101 V454.5 H1353.6 V101" fill="none" stroke="#fff" stroke-width="1.15"/>
<rect x="1366" y="120.30" width="9.8" height="5.62" fill="#ffe400" fill-opacity=".78"/>
<rect x="1366" y="125.92" width="9.8" height="5.62" fill="#ffad00" fill-opacity=".78"/>
<rect x="1366" y="131.55" width="9.8" height="5.62" fill="#ff7900" fill-opacity=".78"/>
<rect x="1366" y="137.17" width="9.8" height="5.62" fill="#ff4900" fill-opacity=".78"/>
<rect x="1366" y="142.80" width="9.8" height="5.62" fill="#ff1a00" fill-opacity=".78"/>
<rect x="1366" y="148.42" width="9.8" height="5.62" fill="#ec1000" fill-opacity=".78"/>
<rect x="1366" y="154.04" width="9.8" height="5.62" fill="#c23400" fill-opacity=".78"/>
<rect x="1366" y="159.67" width="9.8" height="5.62" fill="#985800" fill-opacity=".78"/>
<rect x="1366" y="165.29" width="9.8" height="5.62" fill="#698700" fill-opacity=".78"/>
<rect x="1366" y="170.91" width="9.8" height="5.62" fill="#3cb200" fill-opacity=".78"/>
<rect x="1366" y="176.54" width="9.8" height="5.62" fill="#17cf00" fill-opacity=".78"/>
<rect x="1366" y="182.16" width="9.8" height="5.62" fill="#00d81b" fill-opacity=".78"/>
<rect x="1366" y="187.79" width="9.8" height="5.62" fill="#00c064" fill-opacity=".78"/>
<rect x="1366" y="193.41" width="9.8" height="5.62" fill="#00a9ae" fill-opacity=".78"/>
<rect x="1366" y="199.03" width="9.8" height="5.62" fill="#0091d6" fill-opacity=".78"/>
<rect x="1366" y="204.66" width="9.8" height="5.62" fill="#0079ec" fill-opacity=".78"/>
<rect x="1366" y="210.28" width="9.8" height="5.62" fill="#0061fc" fill-opacity=".78"/>
<rect x="1366" y="215.90" width="9.8" height="5.62" fill="#0046e2" fill-opacity=".78"/>
<rect x="1366" y="221.53" width="9.8" height="5.62" fill="#002cc9" fill-opacity=".78"/>
<rect x="1366" y="227.15" width="9.8" height="5.62" fill="#0016a8" fill-opacity=".78"/>
<rect x="1366" y="232.78" width="9.8" height="5.62" fill="#00077e" fill-opacity=".78"/>
<path d="M1366.3 120.3 V238.4" stroke="#a0a0a0" stroke-width="1" stroke-opacity=".85"/>
<path d="M1354 238.4 H1366.5" stroke="#c8c8c8" stroke-width="1.3" fill="none"/>
<text x="1352.5" y="125.7" text-anchor="end" font-weight="700" fill="#fff" font-size="12" stroke="#000" stroke-opacity=".6" stroke-width="1.6" paint-order="stroke">Max</text>
<text x="1352.5" y="243.6" text-anchor="end" font-weight="700" fill="#fff" font-size="12" stroke="#000" stroke-opacity=".6" stroke-width="1.6" paint-order="stroke">0</text>
<rect x="1337" y="246.3" width="47" height="14.5" fill="#0c7a10"/>
<text x="1360.8" y="257.2" text-anchor="middle" font-weight="700" fill="#fff" font-size="11.3" >Auto</text>
<rect x="1365.7" y="474.4" width="10.2" height="117.6" fill="url(#wbR)"/>
<path d="M1365.9 474.4 V592" stroke="#e8e8e8" stroke-opacity=".75" stroke-width="1"/>
<path d="M1354 490.5 H1366" stroke="#e8e8e8" stroke-width="1.3"/>
<text x="1352.3" y="494.9" text-anchor="end" font-weight="700" fill="#fff" font-size="12" stroke="#001060" stroke-opacity=".55" stroke-width="1.8" paint-order="stroke">-85</text>
<path d="M1354 516.1 H1366" stroke="#e8e8e8" stroke-width="1.3"/>
<text x="1352.3" y="520.5" text-anchor="end" font-weight="700" fill="#fff" font-size="12" stroke="#001060" stroke-opacity=".55" stroke-width="1.8" paint-order="stroke">-90</text>
<path d="M1354 541.7 H1366" stroke="#e8e8e8" stroke-width="1.3"/>
<text x="1352.3" y="546.1" text-anchor="end" font-weight="700" fill="#fff" font-size="12" stroke="#001060" stroke-opacity=".55" stroke-width="1.8" paint-order="stroke">-95</text>
<path d="M1354 567.3 H1366" stroke="#e8e8e8" stroke-width="1.3"/>
<text x="1352.3" y="571.7" text-anchor="end" font-weight="700" fill="#fff" font-size="12" stroke="#001060" stroke-opacity=".55" stroke-width="1.8" paint-order="stroke">-100</text>
<path d="M1354 592.8 H1366" stroke="#e8e8e8" stroke-width="1.3"/>
<text x="1352.3" y="597.2" text-anchor="end" font-weight="700" fill="#fff" font-size="12" stroke="#001060" stroke-opacity=".55" stroke-width="1.8" paint-order="stroke">-105</text>
<text transform="translate(1324.9 533) rotate(-90)" text-anchor="middle" font-size="12" fill="#fff" stroke="#001060" stroke-opacity=".55" stroke-width="1.8" paint-order="stroke">dBm</text>
<rect x="1336.6" y="599.7" width="47.4" height="14.9" fill="#0c7a10"/>
<text x="1360.8" y="611.2" text-anchor="middle" font-weight="700" fill="#fff" font-size="11.3" >Auto</text>
<path d="M864 455 V101 H1386 V455" fill="none" stroke="#a9a9a9" stroke-width="1.5"/>
<path d="M864 455 V809.3 H1386 V455" fill="none" stroke="#a9a9a9" stroke-width="1.15"/>
<text x="855.4" y="129.3" text-anchor="end" font-weight="400" fill="#fff" font-size="12" stroke="#fff" stroke-width=".3">-65</text>
<text x="855.4" y="153.4" text-anchor="end" font-weight="400" fill="#fff" font-size="12" stroke="#fff" stroke-width=".3">-70</text>
<text x="855.4" y="177.6" text-anchor="end" font-weight="400" fill="#fff" font-size="12" stroke="#fff" stroke-width=".3">-75</text>
<text x="855.4" y="201.7" text-anchor="end" font-weight="400" fill="#fff" font-size="12" stroke="#fff" stroke-width=".3">-80</text>
<text x="855.4" y="225.9" text-anchor="end" font-weight="400" fill="#fff" font-size="12" stroke="#fff" stroke-width=".3">-85</text>
<text x="855.4" y="250.0" text-anchor="end" font-weight="400" fill="#fff" font-size="12" stroke="#fff" stroke-width=".3">-90</text>
<text x="855.4" y="274.1" text-anchor="end" font-weight="400" fill="#fff" font-size="12" stroke="#fff" stroke-width=".3">-95</text>
<text x="855.4" y="298.3" text-anchor="end" font-weight="400" fill="#fff" font-size="12" stroke="#fff" stroke-width=".3">-100</text>
<text x="855.4" y="322.4" text-anchor="end" font-weight="400" fill="#fff" font-size="12" stroke="#fff" stroke-width=".3">-105</text>
<text x="855.4" y="346.6" text-anchor="end" font-weight="400" fill="#fff" font-size="12" stroke="#fff" stroke-width=".3">-110</text>
<text x="855.4" y="370.7" text-anchor="end" font-weight="400" fill="#fff" font-size="12" stroke="#fff" stroke-width=".3">-115</text>
<text x="855.4" y="394.8" text-anchor="end" font-weight="400" fill="#fff" font-size="12" stroke="#fff" stroke-width=".3">-120</text>
<text x="855.4" y="419.0" text-anchor="end" font-weight="400" fill="#fff" font-size="12" stroke="#fff" stroke-width=".3">-125</text>
<text x="855.4" y="443.1" text-anchor="end" font-weight="400" fill="#fff" font-size="12" stroke="#fff" stroke-width=".3">-130</text>
<text x="922.0" y="88.9" text-anchor="middle" font-weight="400" fill="#fff" font-size="12" stroke="#fff" stroke-width=".3">2.4</text>
<text x="922.0" y="829.2" text-anchor="middle" font-weight="400" fill="#fff" font-size="12" stroke="#fff" stroke-width=".3">2.4</text>
<text x="1013.4" y="88.9" text-anchor="middle" font-weight="400" fill="#fff" font-size="12" stroke="#fff" stroke-width=".3">2.42</text>
<text x="1013.4" y="829.2" text-anchor="middle" font-weight="400" fill="#fff" font-size="12" stroke="#fff" stroke-width=".3">2.42</text>
<text x="1104.8" y="88.9" text-anchor="middle" font-weight="400" fill="#fff" font-size="12" stroke="#fff" stroke-width=".3">2.44</text>
<text x="1104.8" y="829.2" text-anchor="middle" font-weight="400" fill="#fff" font-size="12" stroke="#fff" stroke-width=".3">2.44</text>
<text x="1196.2" y="88.9" text-anchor="middle" font-weight="400" fill="#fff" font-size="12" stroke="#fff" stroke-width=".3">2.46</text>
<text x="1196.2" y="829.2" text-anchor="middle" font-weight="400" fill="#fff" font-size="12" stroke="#fff" stroke-width=".3">2.46</text>
<text x="1287.6" y="88.9" text-anchor="middle" font-weight="400" fill="#fff" font-size="12" stroke="#fff" stroke-width=".3">2.48</text>
<text x="1287.6" y="829.2" text-anchor="middle" font-weight="400" fill="#fff" font-size="12" stroke="#fff" stroke-width=".3">2.48</text>
<text x="1379.0" y="88.9" text-anchor="middle" font-weight="400" fill="#fff" font-size="12" stroke="#fff" stroke-width=".3">2.5</text>
<text x="1379.0" y="829.2" text-anchor="middle" font-weight="400" fill="#fff" font-size="12" stroke="#fff" stroke-width=".3">2.5</text>
<g clip-path="url(#czR)"><text x="854.3" y="459.3" text-anchor="end" font-weight="400" fill="#fff" font-size="12" stroke="#fff" stroke-width=".3">0</text></g>
<text x="854.3" y="476.0" text-anchor="end" font-weight="400" fill="#fff" font-size="12" stroke="#fff" stroke-width=".3">2</text>
<text x="854.3" y="492.8" text-anchor="end" font-weight="400" fill="#fff" font-size="12" stroke="#fff" stroke-width=".3">4</text>
<text x="854.3" y="509.5" text-anchor="end" font-weight="400" fill="#fff" font-size="12" stroke="#fff" stroke-width=".3">6</text>
<text x="854.3" y="526.3" text-anchor="end" font-weight="400" fill="#fff" font-size="12" stroke="#fff" stroke-width=".3">8</text>
<text x="854.3" y="543.0" text-anchor="end" font-weight="400" fill="#fff" font-size="12" stroke="#fff" stroke-width=".3">10</text>
<text x="854.3" y="559.8" text-anchor="end" font-weight="400" fill="#fff" font-size="12" stroke="#fff" stroke-width=".3">12</text>
<text x="854.3" y="576.5" text-anchor="end" font-weight="400" fill="#fff" font-size="12" stroke="#fff" stroke-width=".3">14</text>
<text x="854.3" y="593.3" text-anchor="end" font-weight="400" fill="#fff" font-size="12" stroke="#fff" stroke-width=".3">16</text>
<text x="854.3" y="610.0" text-anchor="end" font-weight="400" fill="#fff" font-size="12" stroke="#fff" stroke-width=".3">18</text>
<text x="854.3" y="626.8" text-anchor="end" font-weight="400" fill="#fff" font-size="12" stroke="#fff" stroke-width=".3">20</text>
<text x="854.3" y="643.5" text-anchor="end" font-weight="400" fill="#fff" font-size="12" stroke="#fff" stroke-width=".3">22</text>
<text x="854.3" y="660.2" text-anchor="end" font-weight="400" fill="#fff" font-size="12" stroke="#fff" stroke-width=".3">24</text>
<text x="854.3" y="677.0" text-anchor="end" font-weight="400" fill="#fff" font-size="12" stroke="#fff" stroke-width=".3">26</text>
<text x="854.3" y="693.7" text-anchor="end" font-weight="400" fill="#fff" font-size="12" stroke="#fff" stroke-width=".3">28</text>
<text x="854.3" y="710.5" text-anchor="end" font-weight="400" fill="#fff" font-size="12" stroke="#fff" stroke-width=".3">30</text>
<text x="854.3" y="727.2" text-anchor="end" font-weight="400" fill="#fff" font-size="12" stroke="#fff" stroke-width=".3">32</text>
<text x="854.3" y="744.0" text-anchor="end" font-weight="400" fill="#fff" font-size="12" stroke="#fff" stroke-width=".3">34</text>
<text x="854.3" y="760.7" text-anchor="end" font-weight="400" fill="#fff" font-size="12" stroke="#fff" stroke-width=".3">36</text>
<text x="854.3" y="777.5" text-anchor="end" font-weight="400" fill="#fff" font-size="12" stroke="#fff" stroke-width=".3">38</text>
<text x="854.3" y="794.2" text-anchor="end" font-weight="400" fill="#fff" font-size="12" stroke="#fff" stroke-width=".3">40</text>
<text x="854.3" y="810.9" text-anchor="end" font-weight="400" fill="#fff" font-size="12" stroke="#fff" stroke-width=".3">42</text>
<path d="M854.5 125.0 H864 M1386 125.0 H1396 M854.5 149.1 H864 M1386 149.1 H1396 M854.5 173.3 H864 M1386 173.3 H1396 M854.5 197.4 H864 M1386 197.4 H1396 M854.5 221.6 H864 M1386 221.6 H1396 M854.5 245.7 H864 M1386 245.7 H1396 M854.5 269.8 H864 M1386 269.8 H1396 M854.5 294.0 H864 M1386 294.0 H1396 M854.5 318.1 H864 M1386 318.1 H1396 M854.5 342.3 H864 M1386 342.3 H1396 M854.5 366.4 H864 M1386 366.4 H1396 M854.5 390.5 H864 M1386 390.5 H1396 M854.5 414.7 H864 M1386 414.7 H1396 M854.5 438.8 H864 M1386 438.8 H1396 M920.5 91.3 V101 M920.5 809.3 V818.8 M1011.9 91.3 V101 M1011.9 809.3 V818.8 M1103.3 91.3 V101 M1103.3 809.3 V818.8 M1194.7 91.3 V101 M1194.7 809.3 V818.8 M1286.1 91.3 V101 M1286.1 809.3 V818.8 M1377.5 91.3 V101 M1377.5 809.3 V818.8" stroke="#c4c4c4" stroke-width="1.5" fill="none"/>
<path d="M854.5 455.0 H864 M1386 455.0 H1396 M854.5 471.7 H864 M1386 471.7 H1396 M854.5 488.5 H864 M1386 488.5 H1396 M854.5 505.2 H864 M1386 505.2 H1396 M854.5 522.0 H864 M1386 522.0 H1396 M854.5 538.7 H864 M1386 538.7 H1396 M854.5 555.5 H864 M1386 555.5 H1396 M854.5 572.2 H864 M1386 572.2 H1396 M854.5 589.0 H864 M1386 589.0 H1396 M854.5 605.7 H864 M1386 605.7 H1396 M854.5 622.5 H864 M1386 622.5 H1396 M854.5 639.2 H864 M1386 639.2 H1396 M854.5 655.9 H864 M1386 655.9 H1396 M854.5 672.7 H864 M1386 672.7 H1396 M854.5 689.4 H864 M1386 689.4 H1396 M854.5 706.2 H864 M1386 706.2 H1396 M854.5 722.9 H864 M1386 722.9 H1396 M854.5 739.7 H864 M1386 739.7 H1396 M854.5 756.4 H864 M1386 756.4 H1396 M854.5 773.2 H864 M1386 773.2 H1396 M854.5 789.9 H864 M1386 789.9 H1396 M854.5 806.6 H864 M1386 806.6 H1396" stroke="#d0d0d0" stroke-width="1.05" fill="none"/>
<rect x="858" y="207" width="5.8" height="111" fill="url(#cbR)"/>
<rect x="1385.6" y="207" width="6.2" height="111" fill="url(#cbR)"/>
<text x="1125.0" y="79.3" text-anchor="middle" font-weight="400" fill="#fff" font-size="12" >GHz</text>
<text x="1125.0" y="839.6" text-anchor="middle" font-weight="400" fill="#fff" font-size="12" >GHz</text>
<text transform="translate(830.3 278) rotate(-90)" text-anchor="middle" font-size="12" fill="#fff">dBm</text>
<text transform="translate(836.6 632) rotate(-90)" text-anchor="middle" font-size="12" fill="#fff">sec</text>
</g></svg>
<div class="ab" style="left:0;top:0;width:1407px;height:31px;background:#f3f3f3"></div>
<div class="ab" style="left:6px;top:1px;width:1394px;height:1px;background:#fdfdfd"></div>
<svg class="ab" style="left:7px;top:6px" width="18" height="18" viewBox="7 6 18 18"><rect x="8.2" y="7.4" width="14.8" height="9.4" rx="0.8" fill="#f3b66a" stroke="#e69a3e" stroke-width="0.8"/><path d="M9 9.6 H22 M9 12 H22 M9 14.4 H22" stroke="#fbd9a4" stroke-width="0.9"/><circle cx="15.8" cy="15.4" r="3.6" fill="#e8eaf0" stroke="#8a8a8a" stroke-width="1.1"/><circle cx="15.2" cy="15" r="0.9" fill="#f7d58a"/><path d="M18.5 18.2 L22.4 22.2" stroke="#3c3c3c" stroke-width="1.7" stroke-linecap="round"/></svg>
<span class="t " id="t0" style="left:29.6px;top:9.89px;font-size:12.3px;font-weight:400;color:#7b7b7b;transform:scaleX(0.9384);">DeepView 2.4.129</span>
<svg class="ab" style="left:1280px;top:4px" width="120" height="24" viewBox="1280 4 120 24"><path d="M1287 15.5 H1297" stroke="#6f6f6f" stroke-width="1.1"/><rect x="1332.5" y="10.5" width="9.4" height="9.4" rx="1.3" fill="none" stroke="#6f6f6f" stroke-width="1.1"/><path d="M1378 10.2 L1388 20.2 M1388 10.2 L1378 20.2" stroke="#6f6f6f" stroke-width="1.1"/></svg>
<div class="ab" style="left:0;top:31px;width:228px;height:816px;background:#f0f0f0"></div>
<div class="card" style="left:0px;top:32px;width:228px;height:33px;border-radius:5px 0 0 5px;border-right:none;"></div>
<svg class="ab" style="left:8px;top:38px" width="21" height="21" viewBox="8 38 21 21"><ellipse cx="17" cy="42.8" rx="7.9" ry="3.9" fill="#17426a"/><path d="M9.1 45.6 Q11.5 48.6 14.6 49.3 L14 51.6 Q10.6 50.8 9.1 48.8 Z" fill="#17426a"/><path d="M9.1 50.6 Q11.2 53.3 14.2 54 Q15.2 55.6 16.8 56.8 Q11.2 57 9.1 54 Z" fill="#17426a"/><circle cx="20.5" cy="51.4" r="3.6" fill="#fff" stroke="#17426a" stroke-width="1.7"/><path d="M23.2 54.2 L26.4 57.3" stroke="#17426a" stroke-width="2.1" stroke-linecap="round"/></svg>
<div class="ab" style="left:33.9px;top:40.9px;width:14px;height:14px;border-radius:50%;background:#ff0a00"></div>
<div class="ab" style="left:216px;top:65px;width:12px;height:782px;background:#ededed"></div>
<div class="ab" style="left:216px;top:65px;width:12px;height:489px;background:#17426a;border-radius:3px 0 0 0"></div>
<div class="card" style="left:0px;top:65px;width:216px;height:144px;"></div>
<span class="t " id="t1" style="left:5.0px;top:71.80px;font-size:12.4px;font-weight:700;color:#17426a;transform:scaleX(0.9365);">Radios (2)</span>
<svg class="ab" style="left:201.9px;top:73.8px" width="7.2" height="7.8" viewBox="0 0 7.199999999999989 7.799999999999997"><path d="M3.5999999999999943 0 L7.199999999999989 7.799999999999997 L3.5999999999999943 6.551999999999997 L0 7.799999999999997 Z" fill="#000"/></svg>
<div class="sub" style="left:5px;top:85px;width:206px;height:49px;"></div>
<div class="cb" style="left:10px;top:94px;width:15px;height:15px;"><svg viewBox="0 0 15 15" width="100%" height="100%"><path d="M4.9 8.0 L7.2 10.1 L10.9 6.0" fill="none" stroke="#fff" stroke-width="1.9" stroke-linecap="round" stroke-linejoin="round"/></svg></div>
<span class="t " id="t2" style="left:34.0px;top:95.80px;font-size:12.4px;font-weight:700;color:#17426a;transform:scaleX(0.9289);">SenS-40G-RFEYE400065</span>
<svg class="ab" style="left:197.0px;top:94.0px" width="7.2" height="7.7" viewBox="0 0 7.199999999999989 7.700000000000003"><path d="M3.5999999999999943 0 L7.199999999999989 7.700000000000003 L3.5999999999999943 6.468000000000002 L0 7.700000000000003 Z" fill="#000"/></svg>
<span class="t " id="t3" style="left:10.2px;top:110.80px;font-size:12.4px;font-weight:700;color:#15101c;transform:scaleX(0.9835);">11:32:16.601255840</span>
<svg class="ab" style="left:189.0px;top:108.0px" width="18" height="18" viewBox="-9 -9 18 18"><circle r="5.6" fill="none" stroke="#15881a" stroke-width="1.5"/><circle r="2.7" fill="#15881a"/><path d="M0 -8 V-5.2 M0 8 V5.2 M-8 0 H-5.2 M8 0 H5.2" stroke="#15881a" stroke-width="1.5" fill="none"/></svg>
<div class="sub" style="left:5px;top:136px;width:206px;height:48px;"></div>
<div class="cb" style="left:10px;top:144px;width:15px;height:15px;"><svg viewBox="0 0 15 15" width="100%" height="100%"><path d="M4.9 8.0 L7.2 10.1 L10.9 6.0" fill="none" stroke="#fff" stroke-width="1.9" stroke-linecap="round" stroke-linejoin="round"/></svg></div>
<span class="t " id="t4" style="left:34.5px;top:145.80px;font-size:12.4px;font-weight:700;color:#17426a;transform:scaleX(1.0042);">Node-18G-rfeye100111</span>
<svg class="ab" style="left:197.0px;top:144.0px" width="7.2" height="7.6" viewBox="0 0 7.199999999999989 7.599999999999994"><path d="M3.5999999999999943 7.599999999999994 L7.199999999999989 0 L3.5999999999999943 1.215999999999999 L0 0 Z" fill="#000"/></svg>
<span class="t " id="t5" style="left:10.2px;top:161.80px;font-size:12.4px;font-weight:700;color:#15101c;transform:scaleX(0.9835);">11:32:13.448537888</span>
<svg class="ab" style="left:158px;top:159px" width="17" height="17" viewBox="158 159 17 17"><circle cx="162.4" cy="163.2" r="2.1" fill="#17426a"/><path d="M163.56 163.68 L165.31 164.41 M162.88 164.36 L163.61 166.11 M161.92 164.36 L161.19 166.11 M161.24 163.68 L159.49 164.41 M161.24 162.72 L159.49 161.99 M161.92 162.04 L161.19 160.29 M162.88 162.04 L163.61 160.29 M163.56 162.72 L165.31 161.99 " stroke="#17426a" stroke-width="1.15" fill="none"/><circle cx="162.4" cy="163.2" r="0.95" fill="#fff"/><circle cx="168.5" cy="169.6" r="3.35" fill="#17426a"/><path d="M170.36 170.37 L172.89 171.42 M169.27 171.46 L170.32 173.99 M167.73 171.46 L166.68 173.99 M166.64 170.37 L164.11 171.42 M166.64 168.83 L164.11 167.78 M167.73 167.74 L166.68 165.21 M169.27 167.74 L170.32 165.21 M170.36 168.83 L172.89 167.78 " stroke="#17426a" stroke-width="1.75" fill="none"/><circle cx="168.5" cy="169.6" r="1.65" fill="#fff"/></svg>
<svg class="ab" style="left:176px;top:159px" width="12" height="15" viewBox="176 159 12 15"><path d="M177.3 163.1 Q177.3 161.6 179.4 161.5 L180.6 161.4 Q181.95 160.2 183.3 161.4 L184.5 161.5 Q186.6 161.6 186.6 163.1 Z" fill="#17426a"/><path d="M178 163.8 H185.9 V171.6 Q185.9 172.8 184.7 172.8 H179.2 Q178 172.8 178 171.6 Z M180.1 165.9 L181.3 167.95 L180.1 170 L181 170.6 L181.95 168.9 L182.9 170.6 L183.8 170 L182.6 167.95 L183.8 165.9 L182.9 165.3 L181.95 167 L181 165.3 Z" fill="#17426a" fill-rule="evenodd"/></svg>
<svg class="ab" style="left:189.0px;top:158.1px" width="18" height="18" viewBox="-9 -9 18 18"><circle r="5.6" fill="none" stroke="#15881a" stroke-width="1.5"/><circle r="2.7" fill="#15881a"/><path d="M0 -8 V-5.2 M0 8 V5.2 M-8 0 H-5.2 M8 0 H5.2" stroke="#15881a" stroke-width="1.5" fill="none"/></svg>
<div class="ab" style="left:6px;top:185.4px;width:204px;height:0;border-top:1px dotted #e4e4e4"></div>
<svg class="ab" style="left:131.8px;top:186.0px" width="18" height="18" viewBox="-9 -9 18 18"><circle r="7.2" fill="none" stroke="#17426a" stroke-width="1.5"/><path d="M-4.3 0 H4.3 M0 -4.3 V4.3" stroke="#17426a" stroke-width="1.6"/></svg>
<svg class="ab" style="left:153.2px;top:190.6px" width="16" height="9" viewBox="0 0 16 9"><rect x="0" y="0.09999999999999998" width="1.7" height="1.6" fill="#17426a"/><rect x="3.2" y="0.09999999999999998" width="12.8" height="1.6" fill="#17426a"/><rect x="0" y="3.6000000000000005" width="1.7" height="1.6" fill="#17426a"/><rect x="3.2" y="3.6000000000000005" width="12.8" height="1.6" fill="#17426a"/><rect x="0" y="7.1000000000000005" width="1.7" height="1.6" fill="#17426a"/><rect x="3.2" y="7.1000000000000005" width="12.8" height="1.6" fill="#17426a"/></svg>
<svg class="ab" style="left:173.5px;top:187.5px" width="15.6" height="14.8" viewBox="0 0 15.6 14.8"><rect x="0" y="0" width="4.6" height="3.4" fill="#17426a"/><path d="M2.3 3.4 V13 H9.6 M2.3 7.4 H9.6" fill="none" stroke="#17426a" stroke-width="1.6"/><rect x="10" y="5.4" width="5.6" height="3.8" fill="#17426a"/><rect x="10" y="11" width="5.6" height="3.8" fill="#17426a"/></svg>
<svg class="ab" style="left:194.2px;top:188.6px" width="14.4" height="13.4" viewBox="0 0 14.4 13.4"><path d="M11.3 9.9 A5.6 5.6 0 1 1 11.2 3.3" fill="none" stroke="#17426a" stroke-width="1.7"/><path d="M13.9 0.3 V5.6 H8.6 Z" fill="#17426a"/></svg>
<div class="card" style="left:0px;top:211px;width:216px;height:92px;"></div>
<span class="t " id="t6" style="left:5.2px;top:216.80px;font-size:12.4px;font-weight:700;color:#17426a;transform:scaleX(0.9731);">Multi-Channel Options</span>
<svg class="ab" style="left:202.4px;top:219.2px" width="6.5" height="7.6" viewBox="0 0 6.5 7.600000000000023"><path d="M3.25 7.600000000000023 L6.5 0 L3.25 1.2160000000000037 L0 0 Z" fill="#000"/></svg>
<div class="cb" style="left:5px;top:234px;width:15px;height:15px;"><svg viewBox="0 0 15 15" width="100%" height="100%"><path d="M4.9 8.0 L7.2 10.1 L10.9 6.0" fill="none" stroke="#fff" stroke-width="1.9" stroke-linecap="round" stroke-linejoin="round"/></svg></div>
<span class="t " id="t7" style="left:29.2px;top:235.97px;font-size:12.2px;font-weight:400;color:#1e2530;transform:scaleX(0.9793);">Global Radio Control</span>
<div class="grp" style="left:5px;top:253px;width:206px;height:42px;"></div>
<span class="t " id="t8" style="left:7.0px;top:255.97px;font-size:12.2px;font-weight:400;color:#1e2530;transform:scaleX(1.0002);">Multi-channel frequency mode</span>
<div class="inp" style="left:7px;top:270px;width:202px;height:23px;"></div>
<span class="t " id="t9" style="left:15.9px;top:276.97px;font-size:12.2px;font-weight:400;color:#495057;transform:scaleX(0.9705);">Co Tuned</span>
<svg class="ab" style="left:194.6px;top:278.4px" width="8.6" height="5.2" viewBox="0 0 8.599999999999994 5.2000000000000455"><path d="M0.8 0.8 L4.299999999999997 4.300000000000045 L7.7999999999999945 0.8" fill="none" stroke="#3a3a3a" stroke-width="1.9" stroke-linecap="round" stroke-linejoin="round"/></svg>
<div class="card" style="left:0px;top:305px;width:216px;height:358px;"></div>
<span class="t " id="t10" style="left:5.2px;top:310.80px;font-size:12.4px;font-weight:700;color:#17426a;transform:scaleX(0.9582);">Radio Configuration</span>
<svg class="ab" style="left:202.4px;top:312.8px" width="6.5" height="7.6" viewBox="0 0 6.5 7.599999999999966"><path d="M3.25 7.599999999999966 L6.5 0 L3.25 1.2159999999999946 L0 0 Z" fill="#000"/></svg>
<div class="grp" style="left:5px;top:327px;width:102px;height:42px;"></div>
<div class="grp" style="left:109px;top:327px;width:102px;height:42px;"></div>
<span class="t " id="t11" style="left:7.0px;top:329.97px;font-size:12.2px;font-weight:400;color:#1e2530;transform:scaleX(0.9538);">Record Center</span>
<span class="t " id="t12" style="left:110.2px;top:329.97px;font-size:12.2px;font-weight:400;color:#1e2530;transform:scaleX(0.9320);">Record Span</span>
<div class="inp dis" style="left:7px;top:344px;width:98px;height:23px;"></div>
<div class="inp dis" style="left:110px;top:344px;width:99px;height:23px;"></div>
<span class="t " id="t13" style="left:11.7px;top:349.97px;font-size:12.2px;font-weight:400;color:#495057;transform:scaleX(0.9430);">2.444733457GHz</span>
<span class="t " id="t14" style="left:115.6px;top:349.97px;font-size:12.2px;font-weight:400;color:#495057;transform:scaleX(0.9583);">100MHz</span>
<div class="grp" style="left:5px;top:376px;width:102px;height:42px;"></div>
<div class="grp" style="left:109px;top:376px;width:102px;height:42px;"></div>
<span class="t " id="t15" style="left:7.0px;top:378.97px;font-size:12.2px;font-weight:400;color:#1e2530;transform:scaleX(0.9517);">Preview Center</span>
<span class="t " id="t16" style="left:110.2px;top:378.97px;font-size:12.2px;font-weight:400;color:#1e2530;transform:scaleX(0.9335);">Preview Span</span>
<div class="inp" style="left:7px;top:393px;width:98px;height:23px;"></div>
<div class="inp" style="left:110px;top:393px;width:99px;height:23px;"></div>
<span class="t " id="t17" style="left:11.7px;top:398.97px;font-size:12.2px;font-weight:400;color:#495057;transform:scaleX(0.9430);">2.444733457GHz</span>
<span class="t " id="t18" style="left:115.6px;top:398.97px;font-size:12.2px;font-weight:400;color:#495057;transform:scaleX(0.9502);">114.196777343M</span>
<div class="grp" style="left:5px;top:425px;width:102px;height:42px;"></div>
<div class="grp" style="left:109px;top:425px;width:102px;height:42px;"></div>
<span class="t " id="t19" style="left:7.0px;top:427.97px;font-size:12.2px;font-weight:400;color:#1e2530;transform:scaleX(0.9464);">Preview Start</span>
<span class="t " id="t20" style="left:110.2px;top:427.97px;font-size:12.2px;font-weight:400;color:#1e2530;transform:scaleX(0.9413);">Preview Stop</span>
<div class="inp" style="left:7px;top:442px;width:98px;height:23px;"></div>
<div class="inp" style="left:110px;top:442px;width:99px;height:23px;"></div>
<span class="t " id="t21" style="left:11.7px;top:447.97px;font-size:12.2px;font-weight:400;color:#495057;transform:scaleX(0.9430);">2.387635069GHz</span>
<span class="t " id="t22" style="left:115.6px;top:447.97px;font-size:12.2px;font-weight:400;color:#495057;transform:scaleX(0.9430);">2.501831846GHz</span>
<div class="fs" style="left:7px;top:477px;width:202px;height:63px;"></div><div class="ab" style="left:16.7px;top:475px;width:52.1px;height:6px;background:#fff"></div><span class="t " id="t23" style="left:21.3px;top:471.97px;font-size:12.2px;font-weight:400;color:#1e2530;transform:scaleX(0.9519);">RF Input</span>
<span class="t " id="t24" style="left:17.4px;top:490.97px;font-size:12.2px;font-weight:400;color:#1e2530;transform:scaleX(0.9992);">Set radio input in radio properties</span>
<span class="t " id="t25" style="left:17.4px;top:505.97px;font-size:12.2px;font-weight:400;color:#1e2530;transform:scaleX(1.0181);">for multi-channel with different</span>
<span class="t " id="t26" style="left:17.4px;top:520.97px;font-size:12.2px;font-weight:400;color:#1e2530;transform:scaleX(0.9862);">radio types</span>
<div class="fs" style="left:7px;top:548px;width:202px;height:66px;"></div><div class="ab" style="left:16.7px;top:546px;width:108.4px;height:6px;background:#fff"></div><span class="t " id="t27" style="left:21.3px;top:541.97px;font-size:12.2px;font-weight:400;color:#1e2530;transform:scaleX(0.9724);">Radio Gain Control</span>
<div class="grp" style="left:17px;top:563px;width:182px;height:41px;"></div>
<span class="t " id="t28" style="left:19.0px;top:565.97px;font-size:12.2px;font-weight:400;color:#1e2530;transform:scaleX(0.9016);">Use AGC</span>
<div class="inp" style="left:19px;top:580px;width:178px;height:23px;"></div>
<span class="t " id="t29" style="left:27.8px;top:585.97px;font-size:12.2px;font-weight:400;color:#495057;transform:scaleX(0.9416);">Tracking AGC</span>
<svg class="ab" style="left:182.6px;top:588.8px" width="8.8" height="5.4" viewBox="0 0 8.800000000000011 5.400000000000091"><path d="M0.8 0.8 L4.400000000000006 4.500000000000091 L8.00000000000001 0.8" fill="none" stroke="#3a3a3a" stroke-width="1.9" stroke-linecap="round" stroke-linejoin="round"/></svg>
<div class="fs" style="left:7px;top:621px;width:202px;height:38px;"></div><div class="ab" style="left:16.7px;top:619px;width:64.1px;height:6px;background:#fff"></div><span class="t " id="t30" style="left:21.3px;top:615.97px;font-size:12.2px;font-weight:400;color:#1e2530;transform:scaleX(0.9926);">Bandwidth</span>
<div class="cb" style="left:17px;top:637px;width:15px;height:15px;"><svg viewBox="0 0 15 15" width="100%" height="100%"><path d="M4.9 8.0 L7.2 10.1 L10.9 6.0" fill="none" stroke="#fff" stroke-width="1.9" stroke-linecap="round" stroke-linejoin="round"/></svg></div>
<span class="t " id="t31" style="left:41.0px;top:638.97px;font-size:12.2px;font-weight:400;color:#1e2530;transform:scaleX(0.9716);">Auto Res Bandwidth</span>
<div class="card" style="left:0px;top:665px;width:216px;height:195px;"></div>
<span class="t " id="t32" style="left:5.5px;top:670.80px;font-size:12.4px;font-weight:700;color:#17426a;transform:scaleX(0.9545);">Recording Configuration</span>
<svg class="ab" style="left:202.4px;top:673.0px" width="6.5" height="7.6" viewBox="0 0 6.5 7.600000000000023"><path d="M3.25 7.600000000000023 L6.5 0 L3.25 1.2160000000000037 L0 0 Z" fill="#000"/></svg>
<span class="t " id="t33" style="left:5.5px;top:685.97px;font-size:12.2px;font-weight:400;color:#1e2530;transform:scaleX(0.9602);">Selected Recording Drive</span>
<div class="inp" style="left:5px;top:700px;width:186px;height:23px;"></div>
<span class="t " id="t34" style="left:13.9px;top:705.97px;font-size:12.2px;font-weight:400;color:#495057;transform:scaleX(0.9477);">Internal Data SSD (G:\)</span>
<svg class="ab" style="left:176.7px;top:708.6px" width="8.8" height="5.5" viewBox="0 0 8.800000000000011 5.5"><path d="M0.8 0.8 L4.400000000000006 4.6 L8.00000000000001 0.8" fill="none" stroke="#3a3a3a" stroke-width="1.9" stroke-linecap="round" stroke-linejoin="round"/></svg>
<svg class="ab" style="left:192px;top:703px" width="18" height="18" viewBox="192 703 18 18"><circle cx="199.2" cy="709.9" r="4.85" fill="none" stroke="#17426a" stroke-width="1.6"/><path d="M202.7 713.4 L207.2 718.1" stroke="#17426a" stroke-width="1.9" stroke-linecap="round"/></svg>
<div class="grp" style="left:5px;top:726px;width:206px;height:43px;"></div>
<span class="t " id="t35" style="left:7.3px;top:729.97px;font-size:12.2px;font-weight:400;color:#1e2530;transform:scaleX(0.9661);">Data Folder Name</span>
<div class="inp" style="left:7px;top:744px;width:202px;height:23px;"></div>
<span class="t " id="t36" style="left:12.1px;top:749.97px;font-size:12.2px;font-weight:400;color:#495057;transform:scaleX(0.9649);">DeepView</span>
<div class="grp" style="left:5px;top:775px;width:102px;height:43px;"></div>
<div class="grp" style="left:109px;top:775px;width:102px;height:43px;"></div>
<span class="t " id="t37" style="left:7.3px;top:778.97px;font-size:12.2px;font-weight:400;color:#1e2530;transform:scaleX(0.9186);">Data File Size</span>
<span class="t " id="t38" style="left:110.4px;top:778.97px;font-size:12.2px;font-weight:400;color:#1e2530;transform:scaleX(0.9368);">Min Disk Free Size</span>
<div class="inp" style="left:7px;top:793px;width:98px;height:22px;"></div>
<div class="inp" style="left:110px;top:793px;width:99px;height:22px;"></div>
<span class="t " id="t39" style="left:12.1px;top:798.97px;font-size:12.2px;font-weight:400;color:#495057;transform:scaleX(0.8938);">5GB</span>
<span class="t " id="t40" style="left:114.8px;top:798.97px;font-size:12.2px;font-weight:400;color:#495057;transform:scaleX(0.9424);">15%</span>
<div class="grp" style="left:5px;top:824px;width:206px;height:46px;"></div>
<span class="t " id="t41" style="left:7.3px;top:827.97px;font-size:12.2px;font-weight:400;color:#1e2530;transform:scaleX(0.9380);">Data File Type</span>
<div class="inp" style="left:7px;top:841px;width:202px;height:25px;"></div>
<div class="ab" style="left:228px;top:31px;width:1179px;height:30px;background:#17426a"></div>
<svg class="ab" style="left:230px;top:38px" width="20" height="16" viewBox="230 38 20 16"><path d="M231 41 H249 M231 45.9 H249 M231 50.7 H249" stroke="#fff" stroke-width="2"/></svg>
<span class="t " id="t42" style="left:260.5px;top:40.97px;font-size:12.2px;font-weight:400;color:#fff;transform:scaleX(0.9518);">DeepView 2.4.129</span>
<svg class="ab" style="left:1390px;top:36px" width="8" height="20" viewBox="1390 36 8 20"><circle cx="1394" cy="40" r="1.75" fill="#fff"/><circle cx="1394" cy="46" r="1.75" fill="#fff"/><circle cx="1394" cy="52" r="1.75" fill="#fff"/></svg>
</div></div>
</body></html>
